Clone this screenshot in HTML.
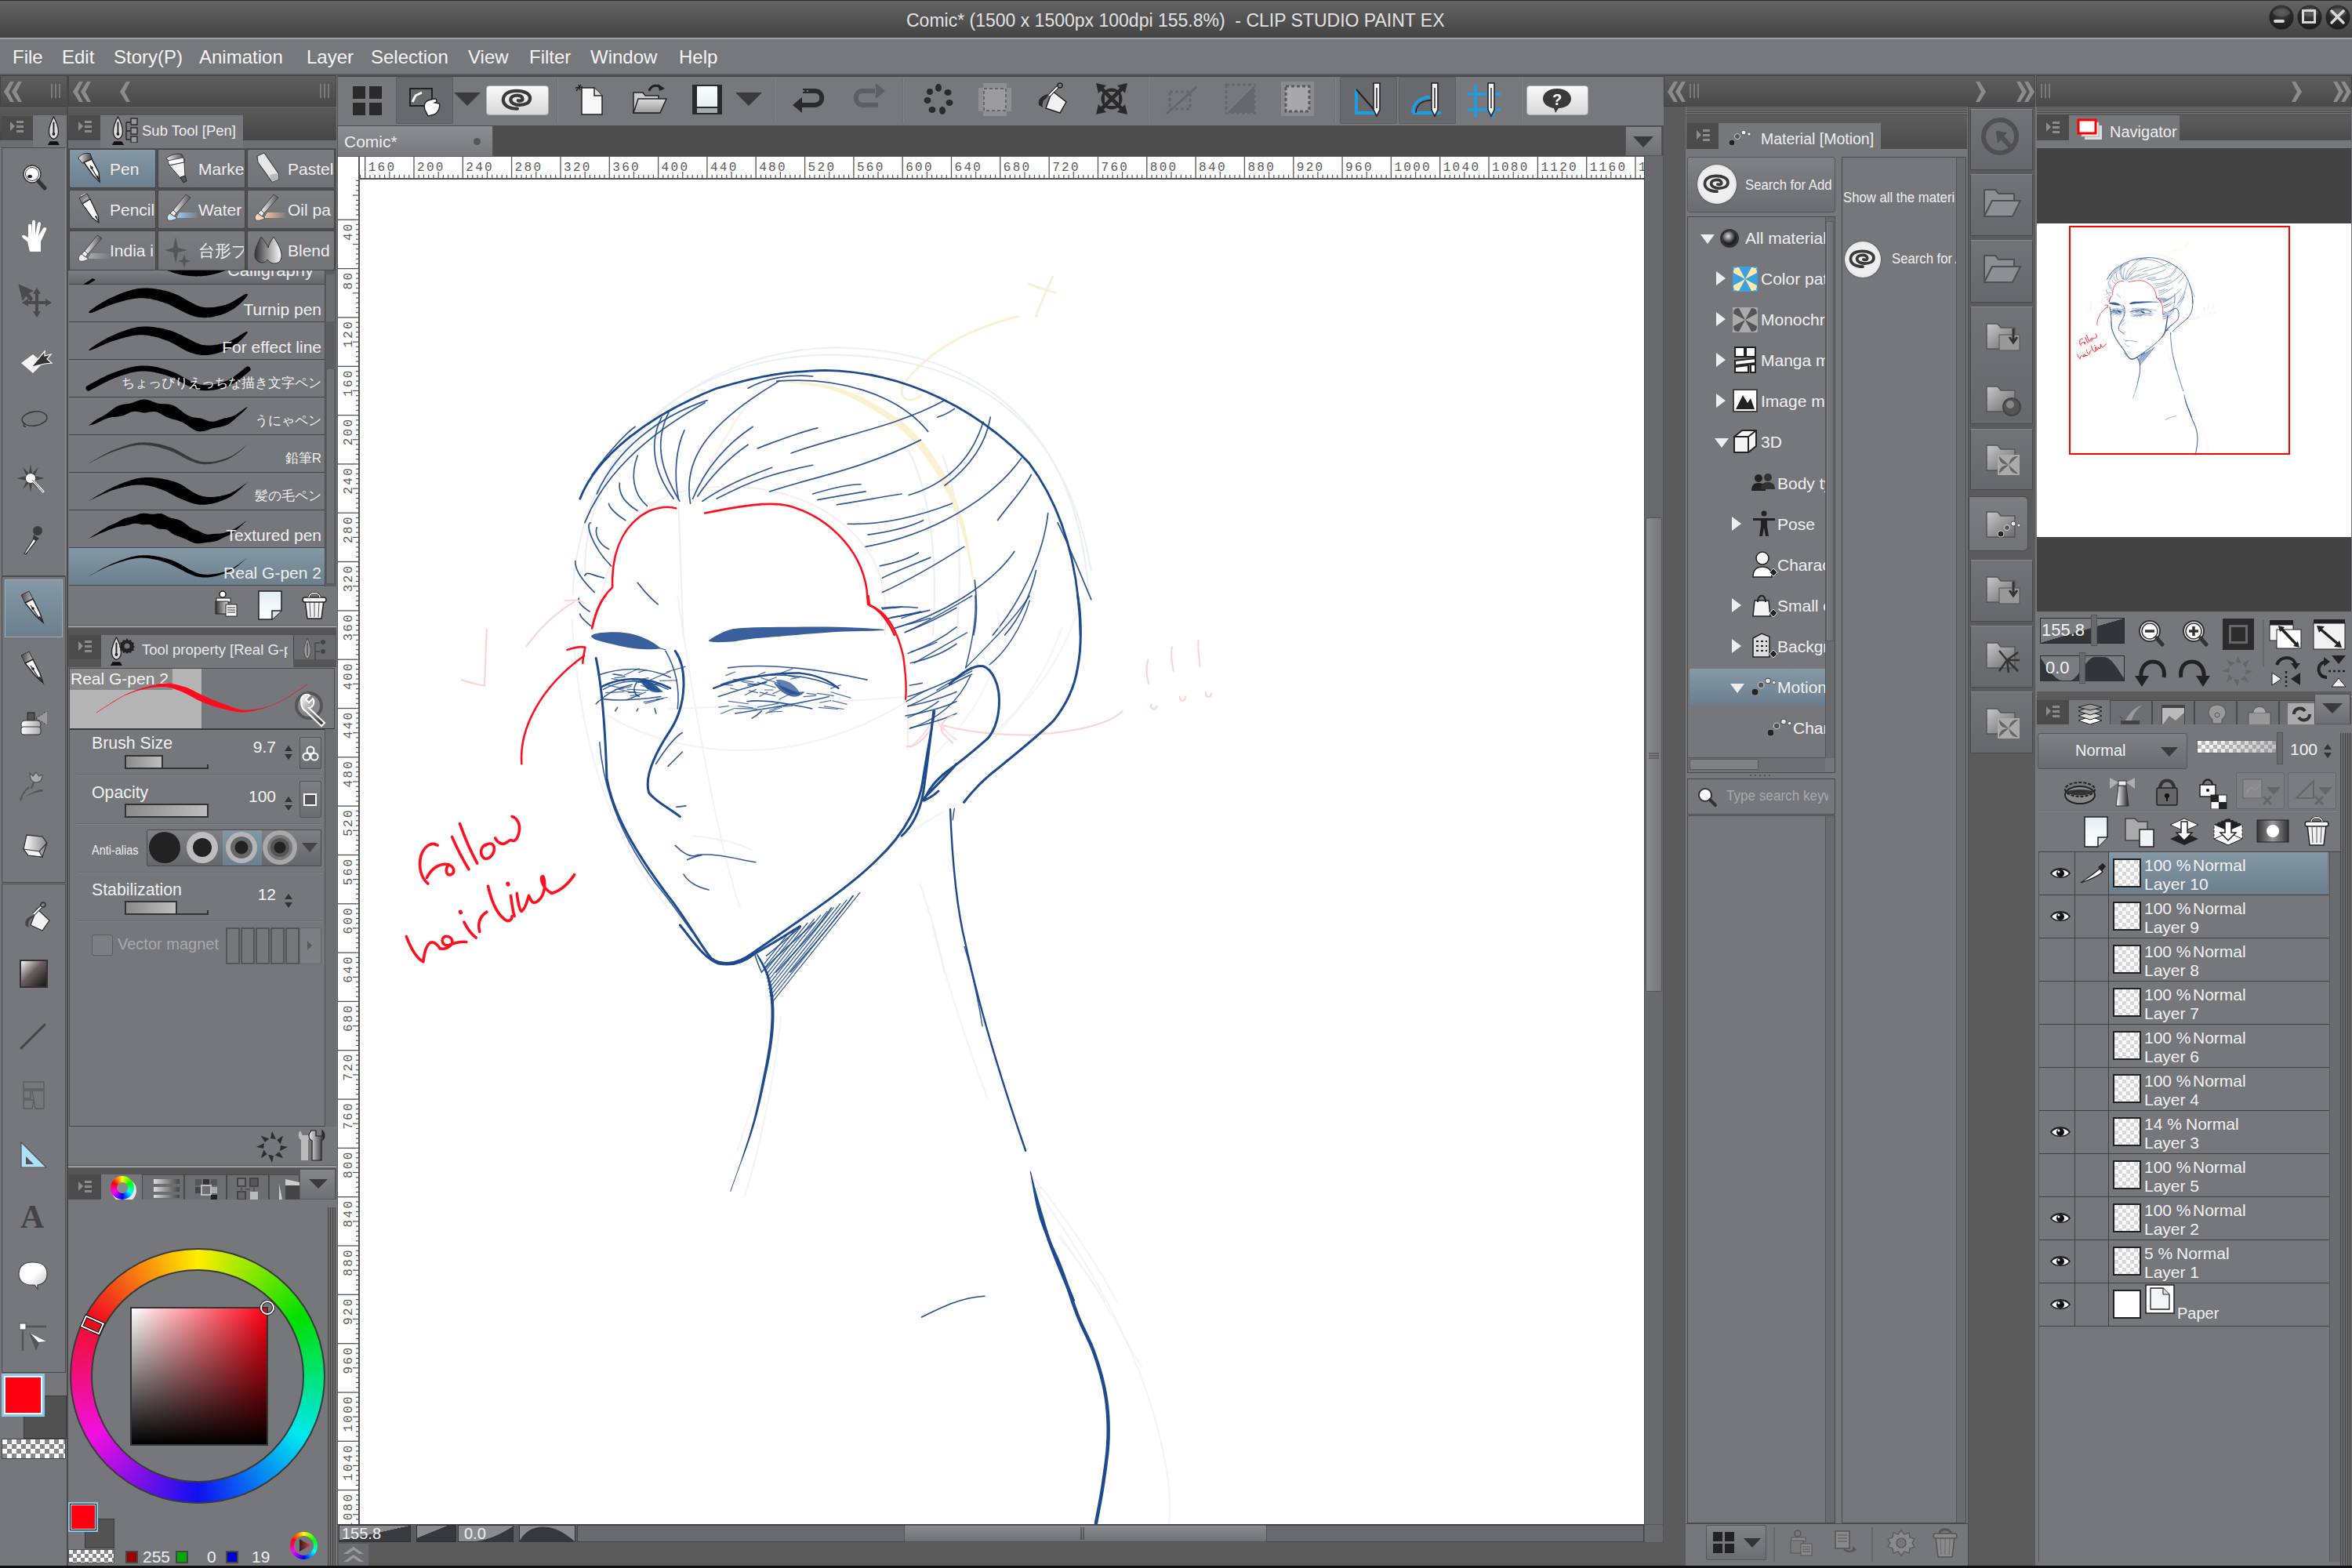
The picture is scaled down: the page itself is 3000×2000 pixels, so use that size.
<!DOCTYPE html>
<html><head><meta charset="utf-8">
<style>
*{box-sizing:border-box;margin:0;padding:0}
html,body{width:3000px;height:2000px;overflow:hidden;background:#76777b;font-family:"Liberation Sans",sans-serif;color:#f2f2f2}
.a{position:absolute}
.t{position:absolute;white-space:nowrap;line-height:1}
</style></head><body>

<div class="a" style="left:0px;top:0px;width:3000px;height:48px;background:linear-gradient(#646464,#434343);border-top:1px solid #2e2e2e"></div>
<div class="t" style="left:1156px;top:14.5px;font-size:23px;color:#e2e2e2;letter-spacing:0px">Comic* (1500 x 1500px 100dpi 155.8%)&nbsp; - CLIP STUDIO PAINT EX</div>
<svg class="a" style="left:2894px;top:6px;" width="32" height="32" viewBox="0 0 32 32"><defs><radialGradient id="gmin" cx="50%" cy="30%" r="70%"><stop offset="0" stop-color="#555"/><stop offset="0.5" stop-color="#2a2a2a"/><stop offset="1" stop-color="#1c1c1c"/></radialGradient></defs><circle cx="16" cy="16" r="15.5" fill="url(#gmin)"/><ellipse cx="16" cy="10" rx="11" ry="5" fill="#666" opacity="0.55"/><rect x="6" y="19" width="14" height="4" rx="2" fill="#d8d8d8"/></svg>
<svg class="a" style="left:2930px;top:6px;" width="32" height="32" viewBox="0 0 32 32"><defs><radialGradient id="gmax" cx="50%" cy="30%" r="70%"><stop offset="0" stop-color="#555"/><stop offset="0.5" stop-color="#2a2a2a"/><stop offset="1" stop-color="#1c1c1c"/></radialGradient></defs><circle cx="16" cy="16" r="15.5" fill="url(#gmax)"/><ellipse cx="16" cy="10" rx="11" ry="5" fill="#666" opacity="0.55"/><rect x="7.5" y="7.5" width="15" height="15" fill="none" stroke="#d8d8d8" stroke-width="3"/></svg>
<svg class="a" style="left:2966px;top:6px;" width="32" height="32" viewBox="0 0 32 32"><defs><radialGradient id="gclose" cx="50%" cy="30%" r="70%"><stop offset="0" stop-color="#555"/><stop offset="0.5" stop-color="#2a2a2a"/><stop offset="1" stop-color="#1c1c1c"/></radialGradient></defs><circle cx="16" cy="16" r="15.5" fill="url(#gclose)"/><ellipse cx="16" cy="10" rx="11" ry="5" fill="#666" opacity="0.55"/><path d="M8 8L23 23M23 8L8 23" stroke="#d8d8d8" stroke-width="3.5" stroke-linecap="round"/></svg>
<div class="a" style="left:0px;top:48px;width:3000px;height:48px;background:#77787c;border-top:2px solid #9c9da0;border-bottom:2px solid #5b5b5d"></div>
<div class="t" style="left:16px;top:61px;font-size:24px;color:#f4f4f4;">File</div>
<div class="t" style="left:79px;top:61px;font-size:24px;color:#f4f4f4;">Edit</div>
<div class="t" style="left:145px;top:61px;font-size:24px;color:#f4f4f4;">Story(P)</div>
<div class="t" style="left:254px;top:61px;font-size:24px;color:#f4f4f4;">Animation</div>
<div class="t" style="left:391px;top:61px;font-size:24px;color:#f4f4f4;">Layer</div>
<div class="t" style="left:473px;top:61px;font-size:24px;color:#f4f4f4;">Selection</div>
<div class="t" style="left:597px;top:61px;font-size:24px;color:#f4f4f4;">View</div>
<div class="t" style="left:675px;top:61px;font-size:24px;color:#f4f4f4;">Filter</div>
<div class="t" style="left:753px;top:61px;font-size:24px;color:#f4f4f4;">Window</div>
<div class="t" style="left:866px;top:61px;font-size:24px;color:#f4f4f4;">Help</div>
<div class="a" style="left:0px;top:96px;width:3000px;height:1904px;background:#76777b"></div>
<div class="a" style="left:0px;top:96px;width:86px;height:40px;background:linear-gradient(#5d5d5d,#4a4a4a);border-top:1px solid #3e3e3e;border-bottom:1px solid #3f3f3f;border-left:1px solid #444;border-right:1px solid #444"></div>
<svg class="a" style="left:4px;top:103px;" width="24" height="28" viewBox="0 0 24 28"><path d="M9 1L1 14L9 27H14L7 14L14 1Z M19 1L11 14L19 27H24L17 14L24 1Z" fill="#8c8c8c"/></svg>
<svg class="a" style="left:64px;top:105px;" width="16" height="22" viewBox="0 0 16 22"><path d="M2 2V20M7 2V20M12 2V20" stroke="#8a8a8a" stroke-width="1.4"/></svg>
<div class="a" style="left:0px;top:136px;width:86px;height:43px;background:linear-gradient(#5a5a5a,#464646)"></div>
<div class="a" style="left:0px;top:179px;width:86px;height:10px;background:#6d6e71"></div>
<div class="a" style="left:2px;top:147px;width:40px;height:32px;background:#4b4b4b;border-top:1px solid #5a5a5a"></div>
<svg class="a" style="left:12px;top:152px;" width="20" height="20" viewBox="0 0 20 20"><path d="M1 3L7 9L1 15Z" fill="#8c8c8c"/><rect x="9" y="2" width="9" height="3" fill="#8c8c8c"/><rect x="9" y="8" width="9" height="3" fill="#8c8c8c"/><rect x="9" y="14" width="9" height="3" fill="#8c8c8c"/></svg>
<div class="a" style="left:42px;top:147px;width:44px;height:41px;background:#76777b"></div>
<svg class="a" style="left:58px;top:148px;" width="20" height="38" viewBox="0 0 20 38"><g transform="scale(0.95)"><path d="M11 1C6 10 4 18 5 24C6 28 8 30 11 31C14 30 16 28 17 24C18 18 16 10 11 1Z" fill="#ddd" stroke="#222" stroke-width="1.4"/><path d="M11 8V26" stroke="#222" stroke-width="2"/><circle cx="11" cy="24" r="2" fill="#222"/><path d="M6 34H16L19 39H3Z" fill="#111"/></g></svg>
<div class="a" style="left:2px;top:188px;width:82px;height:547px;background:#76777b;border:1px solid #4a4a4a;border-right-color:#8a8a8c"></div>
<div class="a" style="left:2px;top:735px;width:82px;height:391px;background:#76777b;border:1px solid #4a4a4a"></div>
<div class="a" style="left:2px;top:1127px;width:82px;height:624px;background:#76777b;border:1px solid #4a4a4a"></div>
<div class="a" style="left:85px;top:96px;width:2px;height:1904px;background:#4a4a4a"></div>
<div class="a" style="left:6px;top:739px;width:74px;height:74px;background:linear-gradient(#8598a5,#6b7f8e);border:1px solid #9aabb6"></div>
<svg class="a" style="left:13px;top:195px;" width="60" height="60" viewBox="0 0 60 60"><circle cx="28" cy="27" r="11" fill="#fff" stroke="#333" stroke-width="1.5"/><circle cx="28" cy="27" r="8.5" fill="none" stroke="#333" stroke-width="1"/><ellipse cx="25" cy="30" rx="3" ry="2" fill="#222"/><path d="M36 36L44 45" stroke="#333" stroke-width="5" stroke-linecap="round"/></svg>
<svg class="a" style="left:15px;top:272px;" width="60" height="60" viewBox="0 0 60 60"><path d="M20 36C16 33 13 31 13 29C14 27 17 28 21 31L21 16C21 13 25 13 25 16L25 27L26 11C26 8 30 8 30 11L30 27L33 13C34 10 38 11 37 14L34 29L40 19C42 17 45 18 44 21L37 36L37 49L23 49Z" fill="#fff"/></svg>
<svg class="a" style="left:15px;top:355px;" width="60" height="60" viewBox="0 0 60 60"><path d="M9 8L27 16L21 19L27 26L24 29L18 22L14 28Z" fill="#4a4a4a" stroke="#4a4a4a" stroke-width="1"/><path d="M32 12L37 20H34V29H43V26L51 31L43 36V33H34V42H37L32 50L27 42H30V33H21V36L13 31L21 26V29H30V20H27Z" fill="#4a4a4a"/></svg>
<svg class="a" style="left:15px;top:430px;" width="60" height="60" viewBox="0 0 60 60"><path d="M12 33L27 22L40 33L27 46Z" fill="#f4f4f4"/><path d="M25 38L42 18L42 24L50 22L45 28L51 33L42 34Z" fill="#333" stroke="#fff" stroke-width="1.2"/></svg>
<svg class="a" style="left:13px;top:505px;" width="60" height="60" viewBox="0 0 60 60"><ellipse cx="31" cy="29" rx="16" ry="9" fill="none" stroke="#3a3a3a" stroke-width="1.6" transform="rotate(-8 31 29)"/><path d="M19 35C16 37 17 40 20 39" fill="none" stroke="#3a3a3a" stroke-width="1.6"/></svg>
<svg class="a" style="left:9px;top:580px;" width="60" height="60" viewBox="0 0 60 60"><path d="M30 12L32 24L40 16L35 27L48 30L35 33L40 44L32 36L30 48L28 36L20 44L25 33L12 30L25 27L20 16L28 24Z" fill="#444"/><circle cx="30" cy="30" r="6" fill="#fff"/><path d="M32 32L46 47" stroke="#fff" stroke-width="3" stroke-linecap="round"/><path d="M32 32L46 47" stroke="#555" stroke-width="0.8"/></svg>
<svg class="a" style="left:13px;top:660px;" width="60" height="60" viewBox="0 0 60 60"><circle cx="35" cy="17" r="6" fill="#3c3c3c"/><path d="M30 22L37 27L33 30L29 27Z" fill="#333"/><path d="M30 27L33 30L20 47L18 46Z" fill="#fff" stroke="#333" stroke-width="1.3"/></svg>
<svg class="a" style="left:13px;top:745px;" width="60" height="60" viewBox="0 0 60 60"><defs><linearGradient id="pg" x1="0" x2="1"><stop offset="0" stop-color="#444"/><stop offset="1" stop-color="#bbb"/></linearGradient></defs><path d="M14 14L24 9L29 19L19 24Z" fill="url(#pg)" stroke="#333" stroke-width="1"/><path d="M19 24L29 19L38 37L42 49L33 41Z" fill="#f6f6f6" stroke="#222" stroke-width="1.4"/><path d="M26 27L37 44" stroke="#222" stroke-width="1.2"/><circle cx="29" cy="31" r="1.8" fill="#222"/><path d="M36 42L42 49L38 41Z" fill="#111"/></svg>
<svg class="a" style="left:13px;top:822px;" width="60" height="60" viewBox="0 0 60 60"><defs><linearGradient id="pg" x1="0" x2="1"><stop offset="0" stop-color="#444"/><stop offset="1" stop-color="#bbb"/></linearGradient></defs><path d="M14 14L24 9L29 19L19 24Z" fill="url(#pg)" stroke="#333" stroke-width="1"/><path d="M19 24L29 19L38 37L42 49L33 41Z" fill="#f6f6f6" stroke="#222" stroke-width="1.4"/><path d="M26 27L37 44" stroke="#222" stroke-width="1.2"/><circle cx="29" cy="31" r="1.8" fill="#222"/><path d="M36 42L42 49L38 41Z" fill="#111"/></svg>
<svg class="a" style="left:13px;top:899px;" width="60" height="60" viewBox="0 0 60 60"><defs><linearGradient id="ab" x1="0" x2="1"><stop offset="0" stop-color="#fff"/><stop offset="1" stop-color="#aaa"/></linearGradient></defs><rect x="22" y="10" width="9" height="10" fill="#555" stroke="#222"/><rect x="14" y="20" width="25" height="10" rx="5" fill="url(#ab)" stroke="#333"/><rect x="14" y="28" width="25" height="10" rx="3" fill="url(#ab)" stroke="#333"/><path d="M33 17L47 8L47 26Z" fill="#aaa" opacity="0.7"/><path d="M33 17L47 8M33 17L47 26" stroke="#333" stroke-dasharray="2 2" stroke-width="1"/></svg>
<svg class="a" style="left:12px;top:976px;" width="60" height="60" viewBox="0 0 60 60"><path d="M12 47C18 41 26 36 40 34C44 33 44 31 40 31C30 33 20 40 12 47Z" fill="#555"/><path d="M14 45C16 38 20 32 25 28" stroke="#555" stroke-width="2" fill="none"/><path d="M28 30C30 24 32 20 33 17" stroke="#555" stroke-width="2" fill="none"/><path d="M26 10L30 14L34 9L38 14L42 12C42 19 39 22 34 22C28 22 26 17 26 10Z" fill="#aaa" stroke="#555" stroke-width="1.2"/></svg>
<svg class="a" style="left:14px;top:1053px;" width="60" height="60" viewBox="0 0 60 60"><defs><linearGradient id="er" x1="0" x2="1"><stop offset="0" stop-color="#fff"/><stop offset="1" stop-color="#888"/></linearGradient></defs><path d="M20 12L40 14L46 22L40 40L22 38L16 30Z" fill="url(#er)" stroke="#333" stroke-width="1.3"/><path d="M16 30L36 33L40 40L22 38Z" fill="#f2f2f2" stroke="#333" stroke-width="1.2"/><path d="M36 33L46 22" stroke="#333" stroke-width="1.2"/></svg>
<svg class="a" style="left:14px;top:1138px;" width="60" height="60" viewBox="0 0 60 60"><path d="M19 43C16 36 22 31 30 29L27 33C23 35 21 39 23 45Z" fill="#444"/><path d="M33 21L49 36L40 49L25 42L33 21Z" fill="#f2f2f2" stroke="#333" stroke-width="1.3"/><path d="M29 28L40 17" stroke="#333" stroke-width="4"/><path d="M29 28L40 17" stroke="#fff" stroke-width="2"/><circle cx="41" cy="16" r="3" fill="none" stroke="#333" stroke-width="1.5"/></svg>
<svg class="a" style="left:13px;top:1212px;" width="60" height="60" viewBox="0 0 60 60"><defs><linearGradient id="gr" x1="0" y1="0" x2="1" y2="1"><stop offset="0" stop-color="#fff"/><stop offset="0.45" stop-color="#6a5f5f"/><stop offset="1" stop-color="#111"/></linearGradient></defs><rect x="13" y="13" width="34" height="34" fill="url(#gr)" stroke="#333" stroke-width="2"/></svg>
<svg class="a" style="left:13px;top:1291px;" width="60" height="60" viewBox="0 0 60 60"><path d="M14 46L44 16" stroke="#444" stroke-width="3" stroke-linecap="round"/></svg>
<svg class="a" style="left:13px;top:1367px;" width="60" height="60" viewBox="0 0 60 60"><g fill="none" stroke="#5c5c5c" stroke-width="1.4"><rect x="17" y="13" width="26" height="9"/><rect x="17" y="24" width="9" height="10"/><path d="M28 24H43V47H32Z"/><path d="M17 36H30L28 47H17Z"/></g></svg>
<svg class="a" style="left:13px;top:1444px;" width="60" height="60" viewBox="0 0 60 60"><path d="M14 13L46 45H14Z" fill="#aee0f8" stroke="#555" stroke-width="1.2"/><path d="M20 31L30 41H20Z" fill="#555"/></svg>
<div class="t" style="left:26px;top:1531px;font-size:42px;color:#444;font-family:'Liberation Serif',serif;font-weight:bold">A</div>
<svg class="a" style="left:12px;top:1597px;" width="60" height="60" viewBox="0 0 60 60"><defs><linearGradient id="bl" x1="0" y1="0" x2="1" y2="1"><stop offset="0.5" stop-color="#fff"/><stop offset="1" stop-color="#bbb"/></linearGradient></defs><path d="M30 13C40 13 48 16 48 28C48 38 42 41 36 42L36 47L32 42C20 43 12 38 12 28C12 17 20 13 30 13Z" fill="url(#bl)" stroke="#444" stroke-width="1.2"/></svg>
<svg class="a" style="left:13px;top:1676px;" width="60" height="60" viewBox="0 0 60 60"><path d="M16 16V47" stroke="#555" stroke-width="2.5"/><path d="M16 16H46" stroke="#555" stroke-width="2.5"/><rect x="12" y="12" width="8" height="8" fill="#fff" stroke="#555"/><path d="M24 24L47 35L37 37L33 47Z" fill="#555"/><path d="M26 25L46 35L36 36Z" fill="#fff"/></svg>
<div class="a" style="left:30px;top:1780px;width:55px;height:55px;background:#535253;border:1px solid #3a3a3a"></div>
<div class="a" style="left:2px;top:1752px;width:55px;height:55px;background:#8ec8e8"></div>
<div class="a" style="left:5px;top:1755px;width:49px;height:49px;background:#fff"></div>
<div class="a" style="left:7px;top:1757px;width:45px;height:45px;background:#ff0012"></div>
<div class="a" style="left:2px;top:1835px;width:82px;height:26px;background-color:#fff;background-image:linear-gradient(45deg,#888 25%,transparent 25%,transparent 75%,#888 75%),linear-gradient(45deg,#888 25%,transparent 25%,transparent 75%,#888 75%);background-size:12px 12px;background-position:0 0,6px 6px;border:1px solid #444"></div>
<div class="a" style="left:87px;top:96px;width:342px;height:40px;background:linear-gradient(#5d5d5d,#4a4a4a);border-top:1px solid #3e3e3e;border-bottom:1px solid #3f3f3f;border-left:1px solid #444;border-right:1px solid #444"></div>
<svg class="a" style="left:92px;top:103px;" width="24" height="28" viewBox="0 0 24 28"><path d="M9 1L1 14L9 27H14L7 14L14 1Z M19 1L11 14L19 27H24L17 14L24 1Z" fill="#8c8c8c"/></svg>
<svg class="a" style="left:152px;top:103px;" width="14" height="28" viewBox="0 0 14 28"><path d="M9 1L1 14L9 27H14L7 14L14 1Z" fill="#8c8c8c"/></svg>
<svg class="a" style="left:407px;top:105px;" width="16" height="22" viewBox="0 0 16 22"><path d="M2 2V20M7 2V20M12 2V20" stroke="#8a8a8a" stroke-width="1.4"/></svg>
<div class="a" style="left:87px;top:136px;width:342px;height:43px;background:linear-gradient(#5a5a5a,#464646);border-top:1px solid #6a6a6a"></div>
<div class="a" style="left:87px;top:179px;width:342px;height:10px;background:#6d6e71"></div>
<div class="a" style="left:88px;top:147px;width:40px;height:32px;background:#4b4b4b"></div>
<svg class="a" style="left:99px;top:152px;" width="20" height="20" viewBox="0 0 20 20"><path d="M1 3L7 9L1 15Z" fill="#8c8c8c"/><rect x="9" y="2" width="9" height="3" fill="#8c8c8c"/><rect x="9" y="8" width="9" height="3" fill="#8c8c8c"/><rect x="9" y="14" width="9" height="3" fill="#8c8c8c"/></svg>
<div class="a" style="left:128px;top:147px;width:182px;height:42px;background:#76777b"></div>
<svg class="a" style="left:140px;top:148px;" width="20" height="38" viewBox="0 0 20 38"><g transform="scale(0.95)"><path d="M11 1C6 10 4 18 5 24C6 28 8 30 11 31C14 30 16 28 17 24C18 18 16 10 11 1Z" fill="#ddd" stroke="#222" stroke-width="1.4"/><path d="M11 8V26" stroke="#222" stroke-width="2"/><circle cx="11" cy="24" r="2" fill="#222"/><path d="M6 34H16L19 39H3Z" fill="#111"/></g></svg>
<svg class="a" style="left:158px;top:148px;" width="20" height="34" viewBox="0 0 20 34"><g fill="none" stroke="#222" stroke-width="1.3"><path d="M3 8V30M3 8H8M3 19H8M3 30H8"/><rect x="9" y="3" width="8" height="8" fill="#999"/><rect x="9" y="15" width="8" height="8" fill="#999"/><rect x="9" y="26" width="8" height="8" fill="#999"/></g></svg>
<div class="t" style="left:181px;top:158px;font-size:18.5px;color:#eeeeee;">Sub Tool [Pen]</div>
<div class="a" style="left:87px;top:189px;width:342px;height:157px;background:#505050"></div>
<div class="a" style="left:88px;top:190px;width:111px;height:50px;background:linear-gradient(#8598a5,#6b7f8e);border:1px solid #454545;border-radius:2px"></div>
<div class="a" style="left:140px;top:205px;width:57px;height:30px;overflow:hidden;white-space:nowrap;font-size:21px;line-height:1;color:#eeeeee">Pen</div>
<div class="a" style="left:201px;top:190px;width:112px;height:50px;background:linear-gradient(#7b7c80,#727377);border:1px solid #454545;border-radius:2px"></div>
<div class="a" style="left:253px;top:205px;width:58px;height:30px;overflow:hidden;white-space:nowrap;font-size:21px;line-height:1;color:#eeeeee">Marke</div>
<div class="a" style="left:315px;top:190px;width:112px;height:50px;background:linear-gradient(#7b7c80,#727377);border:1px solid #454545;border-radius:2px"></div>
<div class="a" style="left:367px;top:205px;width:58px;height:30px;overflow:hidden;white-space:nowrap;font-size:21px;line-height:1;color:#eeeeee">Pastel</div>
<div class="a" style="left:88px;top:242px;width:111px;height:50px;background:linear-gradient(#7b7c80,#727377);border:1px solid #454545;border-radius:2px"></div>
<div class="a" style="left:140px;top:257px;width:57px;height:30px;overflow:hidden;white-space:nowrap;font-size:21px;line-height:1;color:#eeeeee">Pencil</div>
<div class="a" style="left:201px;top:242px;width:112px;height:50px;background:linear-gradient(#7b7c80,#727377);border:1px solid #454545;border-radius:2px"></div>
<div class="a" style="left:253px;top:257px;width:58px;height:30px;overflow:hidden;white-space:nowrap;font-size:21px;line-height:1;color:#eeeeee">Water</div>
<div class="a" style="left:315px;top:242px;width:112px;height:50px;background:linear-gradient(#7b7c80,#727377);border:1px solid #454545;border-radius:2px"></div>
<div class="a" style="left:367px;top:257px;width:58px;height:30px;overflow:hidden;white-space:nowrap;font-size:21px;line-height:1;color:#eeeeee">Oil pa</div>
<div class="a" style="left:88px;top:294px;width:111px;height:51px;background:linear-gradient(#7b7c80,#727377);border:1px solid #454545;border-radius:2px"></div>
<div class="a" style="left:140px;top:309px;width:57px;height:30px;overflow:hidden;white-space:nowrap;font-size:21px;line-height:1;color:#eeeeee">India i</div>
<div class="a" style="left:201px;top:294px;width:112px;height:51px;background:linear-gradient(#7b7c80,#727377);border:1px solid #454545;border-radius:2px"></div>
<div class="a" style="left:253px;top:309px;width:58px;height:30px;overflow:hidden;white-space:nowrap;font-size:21px;line-height:1;color:#eeeeee">台形ブ</div>
<div class="a" style="left:315px;top:294px;width:112px;height:51px;background:linear-gradient(#7b7c80,#727377);border:1px solid #454545;border-radius:2px"></div>
<div class="a" style="left:367px;top:309px;width:58px;height:30px;overflow:hidden;white-space:nowrap;font-size:21px;line-height:1;color:#eeeeee">Blend</div>
<svg class="a" style="left:98px;top:194px;" width="44" height="44" viewBox="0 0 44 44"><defs><linearGradient id="sp" x1="0" x2="1"><stop offset="0" stop-color="#eee"/><stop offset="1" stop-color="#333"/></linearGradient></defs><path d="M2 8C4 3 12 0 17 2L20 10C16 13 10 14 7 14Z" fill="url(#sp)" stroke="#222" stroke-width="1"/><path d="M9 13L19 9L28 26L29 38L21 30Z" fill="#fafafa" stroke="#222" stroke-width="1.4"/><path d="M17 17L27 34" stroke="#222" stroke-width="1.2"/><circle cx="19" cy="20" r="1.8" fill="#222"/><path d="M25 31L29 38L27 30Z" fill="#111"/></svg>
<svg class="a" style="left:210px;top:193px;" width="44" height="44" viewBox="0 0 44 44"><defs><linearGradient id="mk" x1="0" x2="1"><stop offset="0" stop-color="#eee"/><stop offset="1" stop-color="#444"/></linearGradient></defs><path d="M2 9C8 4 16 2 22 4L26 12L12 18Z" fill="url(#mk)" stroke="#333"/><path d="M4 12L24 8L25 14L6 18Z" fill="#fff" stroke="#333" stroke-width="0.8"/><path d="M6 18L25 14L26 32L20 34Z" fill="#f4f4f4" stroke="#333"/><path d="M20 33L26 31L28 38L24 40Z" fill="#555" stroke="#222"/></svg>
<svg class="a" style="left:325px;top:193px;" width="44" height="44" viewBox="0 0 44 44"><path d="M3 6L12 2L30 28L30 36L22 39L4 14Z" fill="#e6e6e6" stroke="#444" stroke-width="1.2"/><path d="M19 30L30 28L30 36L22 39Z" fill="#b8b8b8"/></svg>
<svg class="a" style="left:98px;top:245px;" width="44" height="44" viewBox="0 0 44 44"><path d="M3 8L13 2L17 9L7 15Z" fill="#888" stroke="#333"/><path d="M5 5L11 2M8 11L14 7" stroke="#ccc"/><path d="M7 15L17 9L27 30L28 39L20 33Z" fill="#fff" stroke="#222" stroke-width="1.2"/><path d="M23 31L28 39L25 30Z" fill="#111"/></svg>
<svg class="a" style="left:211px;top:246px;" width="44" height="44" viewBox="0 0 44 44"><defs><linearGradient id="bh211246" x1="0" x2="1"><stop offset="0" stop-color="#eee"/><stop offset="1" stop-color="#555"/></linearGradient><linearGradient id="bs211246" x1="0" x2="1"><stop offset="0" stop-color="#9ccaf0"/><stop offset="1" stop-color="#9ccaf0" stop-opacity="0"/></linearGradient></defs><path d="M14 32L44 32L40 25L18 25Z" fill="url(#bs211246)"/><path d="M26 2L32 6L14 26L10 22Z" fill="url(#bh211246)" stroke="#333" stroke-width="0.8"/><path d="M10 22L14 26L11 30L6 26Z" fill="#eee" stroke="#333" stroke-width="0.8"/><path d="M6 26C2 28 1 33 4 35C8 36 12 34 15 32C12 31 11 29 11 30Z" fill="#cde6fa" stroke="#444" stroke-width="0.8"/></svg>
<svg class="a" style="left:323px;top:246px;" width="44" height="44" viewBox="0 0 44 44"><defs><linearGradient id="bh323246" x1="0" x2="1"><stop offset="0" stop-color="#eee"/><stop offset="1" stop-color="#555"/></linearGradient><linearGradient id="bs323246" x1="0" x2="1"><stop offset="0" stop-color="#f5c49e"/><stop offset="1" stop-color="#f5c49e" stop-opacity="0"/></linearGradient></defs><path d="M14 32L44 32L40 25L18 25Z" fill="url(#bs323246)"/><path d="M26 2L32 6L14 26L10 22Z" fill="url(#bh323246)" stroke="#333" stroke-width="0.8"/><path d="M10 22L14 26L11 30L6 26Z" fill="#eee" stroke="#333" stroke-width="0.8"/><path d="M6 26C2 28 1 33 4 35C8 36 12 34 15 32C12 31 11 29 11 30Z" fill="#f8d8c0" stroke="#444" stroke-width="0.8"/></svg>
<svg class="a" style="left:98px;top:298px;" width="44" height="44" viewBox="0 0 44 44"><defs><linearGradient id="bh98298" x1="0" x2="1"><stop offset="0" stop-color="#eee"/><stop offset="1" stop-color="#555"/></linearGradient><linearGradient id="bs98298" x1="0" x2="1"><stop offset="0" stop-color="#aaa"/><stop offset="1" stop-color="#aaa" stop-opacity="0"/></linearGradient></defs><path d="M14 32L44 32L40 25L18 25Z" fill="url(#bs98298)"/><path d="M26 2L32 6L14 26L10 22Z" fill="url(#bh98298)" stroke="#333" stroke-width="0.8"/><path d="M10 22L14 26L11 30L6 26Z" fill="#eee" stroke="#333" stroke-width="0.8"/><path d="M6 26C2 28 1 33 4 35C8 36 12 34 15 32C12 31 11 29 11 30Z" fill="#eee" stroke="#444" stroke-width="0.8"/></svg>
<svg class="a" style="left:210px;top:298px;" width="44" height="44" viewBox="0 0 44 44"><path d="M14 4L17 18L29 21L17 24L14 38L11 24L0 21L11 18Z" fill="#555"/><path d="M25 26L27 33L33 35L27 37L25 44L23 37L17 35L23 33Z" fill="#555"/></svg>
<svg class="a" style="left:323px;top:298px;" width="44" height="44" viewBox="0 0 44 44"><defs><linearGradient id="bd" x1="0" x2="1"><stop offset="0" stop-color="#333"/><stop offset="1" stop-color="#fff"/></linearGradient></defs><path d="M10 4C5 14 2 20 2 27C2 33 6 37 11 37C15 37 17 35 18 33C20 36 23 38 27 38C33 38 36 34 36 28C36 20 31 12 26 4C22 10 20 14 19 18C17 13 14 8 10 4Z" fill="url(#bd)" stroke="#333" stroke-width="1"/></svg>
<div class="a" style="left:87px;top:345px;width:342px;height:403px;background:#76777b"></div>
<div class="a" style="left:88px;top:345px;width:327px;height:18px;background:#76777b;border-bottom:1px solid #464646"></div>
<div class="a" style="left:88px;top:363px;width:327px;height:48px;background:#76777b;border-bottom:1px solid #464646"></div>
<div class="a" style="left:88px;top:411px;width:327px;height:48px;background:#76777b;border-bottom:1px solid #464646"></div>
<div class="a" style="left:88px;top:459px;width:327px;height:48px;background:#76777b;border-bottom:1px solid #464646"></div>
<div class="a" style="left:88px;top:507px;width:327px;height:48px;background:#76777b;border-bottom:1px solid #464646"></div>
<div class="a" style="left:88px;top:555px;width:327px;height:48px;background:#76777b;border-bottom:1px solid #464646"></div>
<div class="a" style="left:88px;top:603px;width:327px;height:48px;background:#76777b;border-bottom:1px solid #464646"></div>
<div class="a" style="left:88px;top:651px;width:327px;height:48px;background:#76777b;border-bottom:1px solid #464646"></div>
<div class="a" style="left:88px;top:699px;width:327px;height:48px;background:linear-gradient(#8598a5,#6b7f8e);border-bottom:1px solid #464646"></div>
<div class="a" style="left:88px;top:345px;width:327px;height:18px;background:linear-gradient(#7d7e82,#66676a);border-bottom:1px solid #464646"></div>
<div class="a" style="left:414px;top:345px;width:15px;height:403px;background:#5d5e61;border-left:1px solid #4a4a4a"></div>
<div class="a" style="left:416px;top:350px;width:11px;height:60px;background:#6c6d70"></div>
<div class="a" style="left:416px;top:470px;width:11px;height:275px;background:#727377;border:1px solid #5a5a5a"></div>
<svg class="a" style="left:88px;top:345px;" width="327" height="18" viewBox="0 0 327 18"><path d="M18 18L30 10L34 12L22 19Z" fill="#000"/><path d="M125 0C150 10 175 10 200 0Z" fill="#000"/></svg>
<svg class="a" style="left:88px;top:363px;" width="327" height="48" viewBox="0 0 327 48"><g transform="translate(-88,-363)"><path d="M113.0 399.0 L115.1 399.3 L117.3 398.8 L119.7 397.9 L122.4 396.8 L125.3 395.6 L128.3 394.3 L131.4 393.0 L134.5 391.6 L137.7 390.3 L140.8 389.1 L143.7 388.0 L146.6 387.1 L149.4 386.3 L152.3 385.4 L155.1 384.6 L158.0 383.8 L160.9 383.0 L163.8 382.3 L166.6 381.7 L169.4 381.2 L172.2 380.8 L175.0 380.5 L177.6 380.3 L180.3 380.2 L182.9 380.3 L185.5 380.5 L188.1 380.7 L190.7 381.1 L193.3 381.6 L195.9 382.2 L198.6 382.8 L201.3 383.5 L204.0 384.4 L206.8 385.3 L209.7 386.2 L212.6 387.2 L215.3 388.3 L218.2 389.7 L221.2 391.3 L224.4 393.0 L227.8 394.7 L231.3 396.5 L234.9 398.2 L238.6 399.9 L242.3 401.5 L246.1 402.9 L249.9 404.0 L253.7 404.8 L257.4 405.1 L261.0 405.2 L264.4 405.1 L267.9 404.8 L271.2 404.3 L274.4 403.6 L277.5 402.8 L280.6 401.9 L283.5 400.9 L286.4 399.9 L289.1 398.7 L291.8 397.5 L294.6 396.1 L297.3 394.4 L300.0 392.6 L302.6 390.6 L305.0 388.5 L307.3 386.4 L309.4 384.3 L311.4 382.3 L313.1 380.4 L314.5 378.7 L315.6 377.0 L316.0 375.0 L316.0 375.0 L313.9 374.8 L312.0 375.6 L310.0 376.7 L307.8 378.0 L305.5 379.4 L303.1 381.0 L300.6 382.5 L298.0 384.0 L295.5 385.4 L293.0 386.7 L290.6 387.7 L288.2 388.5 L285.7 389.2 L283.1 389.9 L280.5 390.5 L277.8 391.0 L275.1 391.5 L272.3 391.9 L269.6 392.1 L266.9 392.3 L264.2 392.2 L261.5 392.1 L258.8 391.7 L256.3 391.2 L253.7 390.5 L251.0 389.5 L248.2 388.1 L245.1 386.6 L241.9 384.8 L238.7 382.9 L235.3 380.9 L231.9 378.9 L228.3 377.1 L224.7 375.5 L221.0 374.0 L217.4 372.8 L214.1 371.8 L210.9 371.0 L207.8 370.2 L204.7 369.6 L201.6 369.0 L198.5 368.5 L195.4 368.1 L192.3 367.8 L189.2 367.6 L186.0 367.5 L182.9 367.6 L179.7 367.8 L176.5 368.1 L173.3 368.6 L170.1 369.3 L167.0 370.1 L163.9 371.0 L160.8 371.9 L157.8 373.0 L154.9 374.1 L151.9 375.3 L149.1 376.4 L146.2 377.7 L143.4 378.9 L140.5 380.2 L137.5 381.8 L134.4 383.4 L131.3 385.2 L128.3 387.0 L125.4 388.8 L122.6 390.6 L120.0 392.4 L117.6 394.0 L115.6 395.6 L113.9 397.1 L113.0 399.0Z" fill="#000"/></g></svg>
<svg class="a" style="left:88px;top:411px;" width="327" height="48" viewBox="0 0 327 48"><g transform="translate(-88,-411)"><path d="M113.0 447.0 L114.9 446.9 L117.0 446.2 L119.4 445.3 L122.0 444.2 L124.9 442.9 L127.9 441.6 L131.0 440.2 L134.1 438.8 L137.3 437.5 L140.4 436.3 L143.4 435.2 L146.2 434.2 L149.1 433.4 L151.9 432.5 L154.8 431.7 L157.7 430.9 L160.6 430.1 L163.5 429.4 L166.4 428.8 L169.2 428.2 L172.1 427.8 L174.8 427.5 L177.6 427.3 L180.2 427.3 L182.9 427.3 L185.6 427.5 L188.2 427.8 L190.8 428.2 L193.4 428.7 L196.1 429.2 L198.8 429.9 L201.5 430.6 L204.3 431.5 L207.1 432.4 L210.0 433.4 L212.8 434.4 L215.6 435.5 L218.5 436.9 L221.6 438.5 L224.8 440.3 L228.1 442.2 L231.5 444.2 L235.0 446.2 L238.6 447.9 L242.3 449.4 L246.1 450.8 L250.0 451.9 L253.8 452.6 L257.4 452.9 L261.0 453.0 L264.4 452.9 L267.8 452.5 L271.1 452.0 L274.4 451.3 L277.5 450.5 L280.5 449.6 L283.4 448.6 L286.2 447.5 L289.0 446.3 L291.6 445.1 L294.4 443.7 L297.1 442.0 L299.7 440.1 L302.3 438.2 L304.7 436.1 L307.0 434.0 L309.1 431.9 L311.0 429.9 L312.8 428.0 L314.2 426.3 L315.4 424.7 L316.0 423.0 L316.0 423.0 L314.2 423.1 L312.3 423.9 L310.3 425.1 L308.1 426.4 L305.8 427.8 L303.4 429.4 L300.9 430.9 L298.3 432.4 L295.7 433.8 L293.2 435.1 L290.8 436.1 L288.4 436.9 L285.9 437.6 L283.2 438.2 L280.6 438.8 L277.9 439.4 L275.1 439.8 L272.4 440.2 L269.7 440.4 L266.9 440.5 L264.2 440.5 L261.5 440.3 L258.8 439.9 L256.2 439.4 L253.7 438.6 L251.0 437.6 L248.1 436.2 L245.1 434.6 L241.9 432.9 L238.5 431.2 L235.0 429.4 L231.5 427.6 L227.9 425.9 L224.3 424.3 L220.7 422.8 L217.2 421.6 L213.8 420.7 L210.7 419.9 L207.5 419.1 L204.4 418.5 L201.4 417.9 L198.3 417.4 L195.2 417.0 L192.2 416.7 L189.1 416.5 L186.0 416.5 L182.9 416.5 L179.8 416.7 L176.6 417.1 L173.4 417.6 L170.3 418.2 L167.2 419.0 L164.1 419.9 L161.1 420.9 L158.1 421.9 L155.2 423.0 L152.2 424.1 L149.4 425.3 L146.6 426.5 L143.8 427.8 L140.9 429.1 L137.8 430.6 L134.8 432.2 L131.7 434.0 L128.7 435.7 L125.7 437.5 L122.9 439.3 L120.3 441.0 L118.0 442.6 L115.9 444.1 L114.2 445.5 L113.0 447.0Z" fill="#000"/></g></svg>
<svg class="a" style="left:88px;top:459px;" width="327" height="48" viewBox="0 0 327 48"><g transform="translate(-88,-459)"><path d="M113.0 495.0 L114.9 494.0 L117.3 492.7 L120.2 491.2 L123.4 489.4 L126.8 487.6 L130.4 485.7 L134.2 483.8 L137.9 482.0 L141.5 480.4 L145.0 479.0 L148.4 477.7 L151.8 476.5 L155.3 475.3 L158.8 474.2 L162.3 473.1 L165.9 472.2 L169.4 471.4 L173.0 470.7 L176.5 470.3 L180.0 470.0 L183.5 469.9 L186.9 470.0 L190.3 470.3 L193.8 470.7 L197.2 471.3 L200.6 472.0 L204.1 472.8 L207.7 473.8 L211.3 474.8 L215.0 476.0 L218.8 477.4 L222.8 479.2 L226.8 481.2 L230.9 483.4 L235.0 485.7 L239.1 487.9 L243.2 489.9 L247.2 491.7 L251.2 493.1 L255.0 494.0 L258.7 494.5 L262.5 494.7 L266.2 494.6 L269.8 494.3 L273.4 493.8 L276.9 493.0 L280.3 492.2 L283.7 491.2 L286.9 490.1 L290.0 489.0 L293.1 487.6 L296.2 485.9 L299.3 484.0 L302.3 481.9 L305.2 479.7 L307.9 477.5 L310.4 475.5 L312.6 473.7 L314.5 472.1 L316.0 471.0" fill="none" stroke="#000" stroke-width="7" stroke-linecap="round"/><path d="" fill="#000"/></g></svg>
<svg class="a" style="left:88px;top:507px;" width="327" height="48" viewBox="0 0 327 48"><g transform="translate(-88,-507)"><path d="M113.0 543.0 L114.7 542.6 L116.9 542.0 L119.4 541.2 L122.1 540.2 L124.9 539.0 L127.9 537.5 L130.9 536.0 L134.0 534.6 L137.2 533.4 L140.5 532.5 L143.7 531.9 L146.8 531.7 L149.9 531.5 L152.9 531.1 L155.8 530.5 L158.6 529.5 L161.3 528.3 L164.0 527.1 L166.6 525.8 L169.4 525.0 L172.2 524.8 L175.0 525.0 L177.8 525.5 L180.4 526.0 L182.9 526.4 L185.4 526.4 L188.0 526.1 L190.6 525.6 L193.4 525.2 L196.1 525.0 L198.9 525.3 L201.6 526.1 L204.3 527.4 L206.9 528.9 L209.6 530.5 L212.3 531.9 L215.0 533.0 L218.0 534.0 L221.4 534.9 L225.0 535.8 L228.7 537.0 L232.4 538.6 L235.9 540.5 L239.2 542.7 L242.5 545.1 L245.9 547.3 L249.6 549.2 L253.5 550.4 L257.3 550.3 L261.0 549.7 L264.4 548.7 L267.8 547.6 L271.0 546.6 L274.1 545.8 L277.2 545.2 L280.3 544.7 L283.3 544.1 L286.2 543.3 L288.9 542.3 L291.6 540.9 L294.1 539.2 L296.6 537.1 L299.0 535.0 L301.4 532.9 L303.7 530.8 L306.1 528.8 L308.3 526.9 L310.3 525.1 L312.2 523.3 L313.7 521.7 L315.0 520.2 L316.0 519.0 L316.0 519.0 L314.6 519.6 L312.8 520.6 L310.9 521.8 L308.8 523.2 L306.6 524.9 L304.3 526.6 L301.8 528.2 L299.2 529.7 L296.5 531.0 L293.7 531.9 L291.0 532.6 L288.4 533.1 L285.9 533.6 L283.3 534.4 L280.7 535.3 L278.1 536.3 L275.4 537.1 L272.7 537.7 L269.8 537.8 L267.0 537.4 L264.2 536.6 L261.5 535.6 L258.9 534.5 L256.5 533.6 L254.1 533.3 L251.2 533.0 L248.0 532.6 L244.5 531.8 L241.0 530.6 L237.6 528.8 L234.4 526.6 L231.3 524.1 L228.1 521.5 L224.9 519.2 L221.3 517.3 L217.7 516.1 L214.2 515.5 L210.8 515.3 L207.5 515.3 L204.3 515.0 L201.2 514.5 L198.2 513.6 L195.3 512.5 L192.3 511.3 L189.3 510.2 L186.1 509.6 L182.9 509.5 L179.6 510.0 L176.4 510.9 L173.2 512.1 L170.1 513.3 L167.0 514.2 L163.9 514.9 L160.6 515.2 L157.4 515.7 L154.3 516.4 L151.3 517.3 L148.4 518.7 L145.8 520.4 L143.2 522.3 L140.5 524.3 L137.8 526.4 L134.8 528.4 L131.8 530.2 L128.8 531.9 L125.8 533.6 L122.9 535.3 L120.3 537.0 L118.0 538.7 L116.0 540.4 L114.3 541.8 L113.0 543.0Z" fill="#000"/></g></svg>
<svg class="a" style="left:88px;top:555px;" width="327" height="48" viewBox="0 0 327 48"><g transform="translate(-88,-555)"><path d="M113.0 591.0 L114.6 590.3 L116.6 589.4 L118.8 588.2 L121.4 586.9 L124.1 585.5 L127.1 584.0 L130.1 582.5 L133.2 581.0 L136.4 579.6 L139.5 578.2 L142.5 576.9 L145.3 575.9 L148.2 574.9 L151.0 573.9 L153.9 573.0 L156.8 572.0 L159.7 571.2 L162.7 570.4 L165.6 569.6 L168.5 569.0 L171.4 568.5 L174.3 568.1 L177.2 567.8 L180.1 567.6 L182.9 567.6 L185.7 567.7 L188.5 567.9 L191.3 568.3 L194.0 568.7 L196.8 569.2 L199.6 569.8 L202.5 570.5 L205.4 571.3 L208.3 572.2 L211.3 573.1 L214.3 574.1 L217.4 575.2 L220.5 576.5 L223.8 578.1 L227.2 579.8 L230.6 581.6 L234.1 583.4 L237.6 585.2 L241.0 586.9 L244.5 588.5 L248.0 589.8 L251.4 590.9 L254.7 591.6 L258.0 592.0 L261.2 592.2 L264.3 592.1 L267.5 591.9 L270.6 591.5 L273.6 591.0 L276.6 590.4 L279.5 589.6 L282.3 588.8 L285.1 587.9 L287.7 586.9 L290.3 585.9 L292.9 584.7 L295.6 583.2 L298.1 581.6 L300.7 579.9 L303.1 578.0 L305.5 576.1 L307.8 574.2 L309.8 572.4 L311.7 570.8 L313.4 569.3 L314.9 568.0 L316.0 567.0 L316.0 567.0 L314.7 567.8 L313.1 568.9 L311.3 570.3 L309.3 571.8 L307.2 573.5 L304.9 575.3 L302.4 577.0 L299.9 578.7 L297.3 580.4 L294.8 581.8 L292.2 583.1 L289.7 584.1 L287.1 585.0 L284.4 585.8 L281.7 586.6 L278.9 587.3 L276.0 588.0 L273.2 588.5 L270.2 588.9 L267.3 589.1 L264.3 589.2 L261.3 589.1 L258.3 588.9 L255.3 588.4 L252.3 587.6 L249.2 586.6 L245.9 585.2 L242.7 583.6 L239.3 581.8 L235.9 580.0 L232.5 578.1 L229.1 576.2 L225.7 574.3 L222.3 572.6 L219.0 571.1 L215.7 569.9 L212.6 568.9 L209.5 568.1 L206.4 567.3 L203.4 566.6 L200.5 565.9 L197.5 565.4 L194.6 565.0 L191.7 564.6 L188.8 564.4 L185.8 564.3 L182.9 564.3 L179.9 564.4 L176.9 564.6 L173.9 565.0 L170.9 565.6 L167.9 566.3 L164.9 567.0 L162.0 567.9 L159.0 568.8 L156.1 569.8 L153.2 570.9 L150.3 571.9 L147.5 573.0 L144.7 574.1 L141.8 575.3 L138.8 576.7 L135.7 578.2 L132.6 579.8 L129.6 581.4 L126.6 583.1 L123.7 584.7 L121.0 586.3 L118.5 587.7 L116.3 589.0 L114.5 590.1 L113.0 591.0Z" fill="#3a3a3a"/></g></svg>
<svg class="a" style="left:88px;top:603px;" width="327" height="48" viewBox="0 0 327 48"><g transform="translate(-88,-603)"><path d="M113.0 639.0 L114.6 638.3 L116.5 637.3 L118.8 636.2 L121.4 635.0 L124.2 633.6 L127.2 632.2 L130.2 630.8 L133.4 629.4 L136.6 628.0 L139.7 626.7 L142.7 625.6 L145.6 624.7 L148.5 623.8 L151.4 623.0 L154.3 622.2 L157.3 621.4 L160.2 620.7 L163.1 620.1 L166.1 619.5 L169.0 619.0 L171.8 618.7 L174.7 618.5 L177.5 618.4 L180.2 618.4 L182.9 618.6 L185.6 618.9 L188.2 619.3 L190.9 619.8 L193.5 620.4 L196.1 621.1 L198.8 621.9 L201.4 622.8 L204.2 623.8 L207.0 624.8 L209.8 626.0 L212.6 627.1 L215.3 628.4 L218.1 629.9 L221.0 631.6 L224.2 633.3 L227.7 634.9 L231.3 636.5 L235.0 638.0 L238.8 639.6 L242.5 641.0 L246.4 642.2 L250.2 643.1 L254.0 643.7 L257.6 643.8 L261.0 643.8 L264.4 643.5 L267.7 643.0 L270.9 642.4 L274.1 641.6 L277.1 640.8 L280.0 639.8 L282.9 638.7 L285.6 637.6 L288.3 636.4 L290.9 635.2 L293.5 633.8 L296.1 632.2 L298.6 630.4 L301.1 628.4 L303.5 626.4 L305.8 624.4 L307.9 622.5 L309.9 620.6 L311.8 618.8 L313.4 617.3 L314.8 616.0 L316.0 615.0 L316.0 615.0 L314.7 615.8 L313.1 616.9 L311.3 618.2 L309.2 619.7 L307.0 621.3 L304.6 622.9 L302.1 624.6 L299.5 626.2 L296.9 627.6 L294.3 628.9 L291.7 630.0 L289.1 630.8 L286.6 631.5 L283.9 632.1 L281.1 632.7 L278.3 633.2 L275.5 633.6 L272.7 633.9 L269.9 634.0 L267.0 634.0 L264.2 633.8 L261.4 633.5 L258.7 633.0 L256.0 632.3 L253.5 631.4 L250.8 630.2 L247.9 628.7 L244.9 626.9 L241.8 625.0 L238.7 622.9 L235.4 620.8 L232.1 618.6 L228.5 616.8 L224.8 615.3 L221.1 613.9 L217.4 612.9 L214.0 612.1 L210.8 611.4 L207.6 610.8 L204.5 610.3 L201.4 609.8 L198.3 609.5 L195.2 609.2 L192.1 609.1 L189.0 609.0 L186.0 609.1 L182.9 609.3 L179.8 609.6 L176.7 610.0 L173.6 610.6 L170.5 611.4 L167.5 612.2 L164.5 613.2 L161.5 614.2 L158.5 615.3 L155.6 616.4 L152.8 617.6 L149.9 618.9 L147.1 620.1 L144.4 621.3 L141.5 622.7 L138.5 624.2 L135.5 625.8 L132.5 627.5 L129.4 629.2 L126.5 630.9 L123.6 632.6 L121.0 634.2 L118.5 635.7 L116.4 637.0 L114.5 638.1 L113.0 639.0Z" fill="#000"/></g></svg>
<svg class="a" style="left:88px;top:651px;" width="327" height="48" viewBox="0 0 327 48"><g transform="translate(-88,-651)"><path d="M113.0 687.0 L114.6 686.3 L116.6 685.5 L118.9 684.4 L121.5 683.2 L124.3 681.9 L127.3 680.5 L130.5 679.2 L133.7 678.0 L137.0 676.8 L140.1 675.6 L143.1 674.5 L145.9 673.4 L148.7 672.5 L151.7 671.7 L154.7 671.3 L157.7 670.9 L160.7 670.4 L163.6 669.7 L166.4 668.9 L169.2 668.1 L172.0 667.7 L174.9 667.8 L177.7 668.3 L180.3 668.9 L182.9 669.2 L185.5 669.1 L188.1 669.0 L190.7 669.1 L193.3 669.9 L195.7 671.3 L198.1 672.8 L200.6 674.1 L203.4 674.7 L206.4 674.7 L209.5 674.9 L212.4 675.6 L215.0 677.0 L217.6 679.0 L220.3 681.0 L223.5 682.7 L227.1 684.1 L230.9 685.2 L234.7 686.7 L238.4 688.3 L242.0 690.2 L245.7 691.9 L249.6 693.0 L253.7 693.3 L257.5 692.8 L261.0 692.2 L264.4 691.7 L267.7 691.4 L271.0 691.1 L274.2 690.5 L277.3 689.6 L280.2 688.3 L282.9 686.8 L285.6 685.5 L288.2 684.3 L290.9 683.2 L293.5 681.9 L296.2 680.3 L298.7 678.4 L301.1 676.4 L303.4 674.3 L305.7 672.3 L307.8 670.4 L309.9 668.5 L311.7 666.8 L313.4 665.3 L314.8 664.0 L316.0 663.0 L316.0 663.0 L314.7 663.9 L313.2 665.0 L311.3 666.3 L309.3 667.8 L307.1 669.4 L304.7 671.1 L302.2 672.7 L299.5 674.2 L296.8 675.5 L294.2 676.8 L291.6 677.9 L289.1 678.8 L286.6 679.6 L283.9 680.3 L281.1 680.6 L278.2 680.7 L275.3 680.8 L272.5 681.0 L269.8 681.3 L267.0 681.7 L264.2 681.7 L261.4 681.1 L258.8 680.0 L256.3 678.7 L254.0 677.5 L251.4 676.5 L248.4 675.5 L245.3 674.2 L242.2 672.4 L239.1 670.1 L236.0 667.6 L232.8 665.2 L229.2 663.4 L225.3 662.2 L221.3 661.3 L217.6 660.4 L214.3 659.2 L211.3 657.5 L208.4 655.9 L205.3 655.0 L202.0 654.9 L198.7 655.4 L195.4 655.8 L192.3 655.8 L189.2 655.3 L186.1 654.8 L182.9 654.7 L179.7 655.1 L176.5 656.1 L173.4 657.3 L170.3 658.3 L167.2 659.2 L164.1 659.8 L161.0 660.5 L158.0 661.6 L155.1 663.0 L152.4 664.6 L149.6 666.1 L146.9 667.4 L144.1 668.6 L141.2 669.8 L138.1 671.2 L135.1 673.0 L132.1 674.8 L129.2 676.8 L126.3 678.6 L123.5 680.4 L120.8 682.0 L118.4 683.5 L116.3 684.9 L114.5 686.1 L113.0 687.0Z" fill="#000"/></g></svg>
<svg class="a" style="left:88px;top:699px;" width="327" height="48" viewBox="0 0 327 48"><g transform="translate(-88,-699)"><path d="M113.0 735.0 L114.6 734.2 L116.5 733.3 L118.7 732.1 L121.3 730.8 L124.0 729.3 L127.0 727.8 L130.0 726.3 L133.1 724.8 L136.3 723.3 L139.4 722.0 L142.4 720.7 L145.3 719.7 L148.1 718.7 L151.0 717.7 L153.8 716.8 L156.8 715.9 L159.7 715.0 L162.6 714.2 L165.6 713.5 L168.5 712.9 L171.4 712.4 L174.3 712.0 L177.2 711.8 L180.1 711.6 L182.9 711.7 L185.7 711.8 L188.5 712.1 L191.3 712.4 L194.0 712.9 L196.8 713.4 L199.6 714.1 L202.4 714.8 L205.3 715.6 L208.2 716.5 L211.2 717.5 L214.1 718.5 L217.1 719.7 L220.2 721.2 L223.4 722.8 L226.8 724.6 L230.2 726.3 L233.7 728.1 L237.2 729.9 L240.7 731.5 L244.3 733.0 L247.8 734.4 L251.2 735.4 L254.6 736.1 L257.9 736.4 L261.2 736.5 L264.4 736.5 L267.5 736.2 L270.6 735.8 L273.6 735.2 L276.6 734.5 L279.5 733.7 L282.3 732.8 L285.1 731.9 L287.7 730.9 L290.3 729.8 L292.9 728.6 L295.5 727.2 L298.1 725.5 L300.6 723.8 L303.1 721.9 L305.4 720.0 L307.7 718.1 L309.7 716.3 L311.6 714.7 L313.3 713.2 L314.8 711.9 L316.0 711.0 L316.0 711.0 L314.7 711.9 L313.2 713.0 L311.4 714.4 L309.4 716.0 L307.3 717.6 L304.9 719.4 L302.5 721.1 L300.0 722.8 L297.4 724.4 L294.8 725.9 L292.2 727.2 L289.7 728.2 L287.1 729.0 L284.4 729.8 L281.7 730.6 L278.9 731.2 L276.0 731.8 L273.1 732.3 L270.2 732.6 L267.2 732.8 L264.3 732.9 L261.3 732.8 L258.3 732.5 L255.4 731.9 L252.4 731.2 L249.4 730.0 L246.2 728.6 L243.0 727.0 L239.6 725.2 L236.3 723.3 L232.9 721.3 L229.5 719.4 L226.1 717.6 L222.6 716.0 L219.2 714.6 L215.9 713.5 L212.7 712.6 L209.6 711.7 L206.5 711.0 L203.5 710.3 L200.5 709.7 L197.6 709.2 L194.6 708.8 L191.7 708.5 L188.8 708.3 L185.8 708.2 L182.9 708.2 L179.9 708.4 L176.9 708.6 L173.9 709.1 L170.9 709.7 L167.9 710.3 L165.0 711.1 L162.0 712.0 L159.1 713.0 L156.1 714.0 L153.2 715.0 L150.4 716.1 L147.5 717.2 L144.7 718.3 L141.9 719.5 L138.9 720.9 L135.8 722.4 L132.7 724.0 L129.7 725.6 L126.7 727.3 L123.8 728.9 L121.1 730.4 L118.6 731.8 L116.4 733.1 L114.5 734.2 L113.0 735.0Z" fill="#000"/></g></svg>
<div class="a" style="left:88px;top:345px;width:327px;height:18px;overflow:hidden"><div class="t" style="right:15px;top:-11px;font-size:22px;color:#eee">Calligraphy</div></div>
<div class="t" style="right:2590px;top:384px;font-size:21px;color:#f0f0f0;font-weight:normal">Turnip pen</div>
<div class="t" style="right:2590px;top:432px;font-size:21px;color:#f0f0f0;font-weight:normal">For effect line</div>
<div class="t" style="right:2590px;top:480px;font-size:17px;color:#f0f0f0;font-weight:normal">ちょっぴりえっちな描き文字ペン</div>
<div class="t" style="right:2590px;top:528px;font-size:17px;color:#f0f0f0;font-weight:normal">うにゃペン</div>
<div class="t" style="right:2590px;top:576px;font-size:17px;color:#f0f0f0;font-weight:normal">鉛筆R</div>
<div class="t" style="right:2590px;top:624px;font-size:17px;color:#f0f0f0;font-weight:normal">髪の毛ペン</div>
<div class="t" style="right:2590px;top:672px;font-size:21px;color:#f0f0f0;font-weight:normal">Textured pen</div>
<div class="t" style="right:2590px;top:720px;font-size:21px;color:#f0f0f0;font-weight:normal">Real G-pen 2</div>
<svg class="a" style="left:273px;top:752px;" width="30" height="36" viewBox="0 0 30 36"><defs><linearGradient id="ci" x1="0" x2="1"><stop offset="0" stop-color="#333"/><stop offset="1" stop-color="#ddd"/></linearGradient></defs><circle cx="11" cy="6" r="4" fill="#fff" stroke="#222" stroke-width="1.5"/><rect x="3" y="11" width="18" height="5" fill="#fff" stroke="#222"/><rect x="2" y="15" width="16" height="16" fill="url(#ci)" stroke="#222"/><rect x="15" y="19" width="14" height="15" fill="#fff" stroke="#222"/><path d="M17 23H27M17 26H27M17 29H27" stroke="#222"/></svg>
<svg class="a" style="left:328px;top:752px;" width="32" height="40" viewBox="0 0 32 40"><defs><linearGradient id="np" x1="0" y1="0" x2="0" y2="1"><stop offset="0" stop-color="#e4eef4"/><stop offset="1" stop-color="#fff"/></linearGradient></defs><path d="M2 2H31V27L19 38H2Z" fill="url(#np)" stroke="#222" stroke-width="1.5"/><path d="M19 38V27H31" fill="#dde" stroke="#222" stroke-width="1.5"/></svg>
<svg class="a" style="left:384px;top:752px;" width="34" height="40" viewBox="0 0 34 40"><path d="M5 13H29L26 37H8Z" fill="#f2f2f2" stroke="#222" stroke-width="1.5"/><path d="M11 16L12 35M17 16V35M23 16L22 35" stroke="#555"/><rect x="2" y="10" width="30" height="6" rx="3" fill="#fff" stroke="#222" stroke-width="1.5"/><path d="M10 10C10 3 24 3 24 10" fill="none" stroke="#222" stroke-width="3"/><path d="M10 10C10 3 24 3 24 10" fill="none" stroke="#fff" stroke-width="1.5"/></svg>
<div class="a" style="left:87px;top:797px;width:342px;height:3px;background:#9b9b9e;border-top:1px solid #5a5a5a"></div>
<div class="a" style="left:87px;top:800px;width:342px;height:51px;background:#555;border-top:1px solid #6a6a6a"></div>
<div class="a" style="left:88px;top:810px;width:41px;height:31px;background:#4b4b4b"></div>
<svg class="a" style="left:99px;top:815px;" width="20" height="20" viewBox="0 0 20 20"><path d="M1 3L7 9L1 15Z" fill="#8c8c8c"/><rect x="9" y="2" width="9" height="3" fill="#8c8c8c"/><rect x="9" y="8" width="9" height="3" fill="#8c8c8c"/><rect x="9" y="14" width="9" height="3" fill="#8c8c8c"/></svg>
<div class="a" style="left:129px;top:810px;width:245px;height:41px;background:#76777b"></div>
<div class="a" style="left:374px;top:810px;width:54px;height:31px;background:#6a6b6e;border-left:1px solid #444"></div>
<svg class="a" style="left:382px;top:812px;" width="44" height="30" viewBox="0 0 44 30"><path d="M10 2C6 10 5 16 6 22C7 26 9 28 10 28C11 28 13 26 14 22C15 16 14 10 10 2Z" fill="#999" stroke="#555" stroke-width="1.2"/><path d="M10 8V24" stroke="#555" stroke-width="1.5"/><path d="M20 8V30M20 8H26M20 19H26" stroke="#444" stroke-width="1.3" fill="none"/><circle cx="30" cy="7" r="3" fill="#444"/><circle cx="30" cy="19" r="3" fill="#444"/></svg>
<svg class="a" style="left:138px;top:812px;" width="20" height="38" viewBox="0 0 20 38"><g transform="scale(0.95)"><path d="M11 1C6 10 4 18 5 24C6 28 8 30 11 31C14 30 16 28 17 24C18 18 16 10 11 1Z" fill="#ddd" stroke="#222" stroke-width="1.4"/><path d="M11 8V26" stroke="#222" stroke-width="2"/><circle cx="11" cy="24" r="2" fill="#222"/><path d="M6 34H16L19 39H3Z" fill="#111"/></g></svg>
<svg class="a" style="left:151px;top:812px;" width="22" height="22" viewBox="0 0 22 22"><path d="M11 2L13 5L16 4L17 7L20 8L19 11L21 13L19 15L20 18L17 18L16 21L13 20L11 22L9 20L6 21L5 18L2 18L3 15L1 13L3 11L2 8L5 7L6 4L9 5Z" fill="#222"/><circle cx="11" cy="12" r="3.5" fill="#76777b"/></svg>
<div class="a" style="left:181px;top:818px;width:186px;height:26px;overflow:hidden"><div class="t" style="top:2px;font-size:18.5px;color:#e8e8e8">Tool property [Real G-pen 2]</div></div>
<div class="a" style="left:87px;top:851px;width:342px;height:637px;background:#76777b"></div>
<div class="a" style="left:88px;top:852px;width:339px;height:79px;background:#76777b;border:1px solid #4a4a4a;border-bottom:2px solid #3a3a3a"></div>
<div class="a" style="left:89px;top:853px;width:168px;height:76px;background:#b4b4b4"></div>
<div class="a" style="left:89px;top:853px;width:131px;height:27px;background:rgba(100,100,100,0.55)"></div>
<div class="t" style="left:90px;top:855px;font-size:21px;color:#f4f4f4;">Real G-pen 2</div>
<svg class="a" style="left:88px;top:852px;" width="339" height="78" viewBox="0 0 339 78"><path d="M35.2 57.3 L38.2 55.3 L42.3 52.6 L47.1 49.4 L52.5 45.9 L58.3 42.4 L64.1 38.9 L69.8 35.8 L75.2 33.4 L80.4 31.4 L85.9 29.6 L91.5 28.0 L97.0 26.7 L102.5 25.6 L107.7 24.7 L112.6 24.2 L117.2 23.9 L121.2 23.9 L124.8 24.3 L128.2 24.9 L131.3 25.7 L134.4 26.7 L137.4 27.9 L140.6 29.1 L143.8 30.3 L147.0 31.7 L150.2 33.2 L153.4 34.9 L156.6 36.7 L159.9 38.5 L163.3 40.4 L166.8 42.1 L170.4 43.7 L174.0 45.1 L177.5 46.4 L181.1 47.7 L184.8 48.9 L188.4 50.1 L192.0 51.1 L195.6 52.0 L199.2 52.9 L202.6 53.6 L205.8 54.4 L209.1 55.1 L212.4 55.8 L215.8 56.3 L219.3 56.5 L223.1 56.5 L227.1 56.2 L231.3 55.5 L235.8 54.7 L240.5 53.6 L245.4 52.3 L250.3 50.8 L255.3 49.1 L260.2 47.3 L265.1 45.3 L270.2 42.8 L275.7 39.7 L281.4 36.2 L287.0 32.6 L292.4 29.1 L297.1 25.9 L301.1 23.2 L304.2 21.3 L303.8 20.7 L300.8 22.7 L296.8 25.4 L292.0 28.6 L286.7 32.1 L281.1 35.7 L275.4 39.2 L270.0 42.2 L264.9 44.7 L260.0 46.7 L255.1 48.5 L250.1 50.1 L245.1 51.3 L240.3 52.3 L235.6 53.1 L231.1 53.6 L226.9 53.8 L223.1 53.7 L219.7 53.3 L216.4 52.6 L213.4 51.7 L210.3 50.7 L207.3 49.5 L204.1 48.3 L200.8 47.1 L197.4 46.0 L194.1 44.7 L190.7 43.4 L187.2 42.1 L183.8 40.7 L180.4 39.2 L177.0 37.8 L173.6 36.3 L170.3 34.8 L167.1 33.2 L163.7 31.4 L160.4 29.7 L156.9 27.9 L153.4 26.3 L149.8 24.8 L146.2 23.7 L142.7 22.7 L139.4 21.8 L136.0 20.9 L132.6 20.3 L129.0 19.8 L125.2 19.6 L121.2 19.7 L116.8 20.1 L112.2 20.9 L107.2 21.9 L101.9 23.2 L96.5 24.7 L91.0 26.4 L85.5 28.3 L80.1 30.4 L74.8 32.6 L69.5 35.3 L63.8 38.4 L57.9 41.8 L52.2 45.4 L46.8 48.9 L42.0 52.1 L37.9 54.8 L34.8 56.7Z" fill="#ff0a1e"/></svg>
<svg class="a" style="left:376px;top:882px;" width="44" height="46" viewBox="0 0 44 46"><defs><linearGradient id="wg" x1="0" y1="0" x2="1" y2="1"><stop offset="0" stop-color="#fff"/><stop offset="1" stop-color="#222"/></linearGradient></defs><circle cx="18" cy="18" r="16" fill="#888" stroke="#555" stroke-width="4"/><path d="M8 11C8 5 15 2 19 5L14 10L18 14L23 9C26 13 24 20 18 21L38 40L34 44L14 25C9 23 8 16 8 11Z" fill="url(#wg)" stroke="#fff" stroke-width="2"/></svg>
<div class="a" style="left:414px;top:930px;width:15px;height:507px;background:#6d6e71;border-left:1px solid #555"></div>
<div class="t" style="left:117px;top:938.231px;font-size:21.3px;color:#f0f0f0;">Brush Size</div>
<div class="a" style="left:159px;top:963px;width:107px;height:18px;border-bottom:2px solid #333"></div>
<div class="a" style="left:264px;top:975px;width:2px;height:6px;background:#333"></div>
<div class="a" style="left:159px;top:963px;width:49px;height:18px;background:linear-gradient(90deg,#8a8a8a,#bdbdbd);border:2px solid #333"></div>
<div class="t" style="right:2648px;top:942px;font-size:21px;color:#f4f4f4;">9.7</div>
<svg class="a" style="left:362px;top:950px;" width="12" height="20" viewBox="0 0 12 20"><path d="M6 1L11 8H1Z M1 12H11L6 19Z" fill="#333"/></svg>
<div class="a" style="left:382px;top:940px;width:28px;height:41px;background:linear-gradient(#7e7f83,#6c6d70);border:1px solid #555;border-radius:2px"></div>
<svg class="a" style="left:384px;top:950px;" width="24" height="22" viewBox="0 0 24 22"><circle cx="12" cy="7" r="4.5" fill="none" stroke="#fff" stroke-width="2"/><circle cx="7" cy="15" r="4.5" fill="none" stroke="#fff" stroke-width="2"/><circle cx="17" cy="15" r="4.5" fill="none" stroke="#fff" stroke-width="2"/></svg>
<div class="a" style="left:98px;top:988px;width:312px;height:2px;background:#6a6b6e;border-bottom:1px solid #828387"></div>
<div class="t" style="left:117px;top:1001.231px;font-size:21.3px;color:#f0f0f0;">Opacity</div>
<div class="a" style="left:159px;top:1025px;width:107px;height:18px;"></div>
<div class="a" style="left:159px;top:1025px;width:107px;height:18px;background:linear-gradient(90deg,#8a8a8a,#bdbdbd);border:2px solid #333"></div>
<div class="t" style="right:2648px;top:1005px;font-size:21px;color:#f4f4f4;">100</div>
<svg class="a" style="left:362px;top:1015px;" width="12" height="20" viewBox="0 0 12 20"><path d="M6 1L11 8H1Z M1 12H11L6 19Z" fill="#333"/></svg>
<div class="a" style="left:382px;top:996px;width:28px;height:47px;background:linear-gradient(#7e7f83,#6c6d70);border:1px solid #555;border-radius:2px"></div>
<div class="a" style="left:387px;top:1012px;width:17px;height:16px;background:#555;border:2px solid #fff"></div>
<div class="a" style="left:98px;top:1050px;width:312px;height:2px;background:#6a6b6e;border-bottom:1px solid #828387"></div>
<div class="t" style="left:117px;top:1076px;font-size:17px;color:#eeeeee;transform:scaleX(0.85);transform-origin:left;width:80px;overflow:hidden">Anti-alias</div>
<div class="a" style="left:187px;top:1058px;width:223px;height:47px;background:linear-gradient(#7f8084,#66676a);border:1px solid #4a4a4a;border-radius:2px"></div>
<div class="a" style="left:284px;top:1059px;width:50px;height:45px;background:linear-gradient(#8598a5,#6b7f8e)"></div>
<svg class="a" style="left:187px;top:1058px;" width="223" height="47" viewBox="0 0 223 47"><circle cx="23" cy="23" r="20" fill="#222"/><circle cx="71" cy="23" r="20" fill="#bdbdbd"/><circle cx="71" cy="23" r="12" fill="#222"/><circle cx="121" cy="23" r="20" fill="#b5b5b5"/><circle cx="121" cy="23" r="14" fill="#666"/><circle cx="121" cy="23" r="8.5" fill="#222"/><circle cx="170" cy="23" r="22" fill="#a8a8a8"/><circle cx="170" cy="23" r="16" fill="#777"/><circle cx="170" cy="23" r="12" fill="#555"/><circle cx="170" cy="23" r="7.5" fill="#222"/><path d="M198 17H218L208 29Z" fill="#444"/></svg>
<div class="a" style="left:98px;top:1112px;width:312px;height:2px;background:#6a6b6e;border-bottom:1px solid #828387"></div>
<div class="t" style="left:117px;top:1125.231px;font-size:21.3px;color:#f0f0f0;">Stabilization</div>
<div class="a" style="left:159px;top:1149px;width:107px;height:18px;border-bottom:2px solid #333"></div>
<div class="a" style="left:264px;top:1161px;width:2px;height:6px;background:#333"></div>
<div class="a" style="left:159px;top:1149px;width:67px;height:18px;background:linear-gradient(90deg,#8a8a8a,#bdbdbd);border:2px solid #333"></div>
<div class="t" style="right:2648px;top:1130px;font-size:21px;color:#f4f4f4;">12</div>
<svg class="a" style="left:362px;top:1139px;" width="12" height="20" viewBox="0 0 12 20"><path d="M6 1L11 8H1Z M1 12H11L6 19Z" fill="#333"/></svg>
<div class="a" style="left:98px;top:1174px;width:312px;height:2px;background:#6a6b6e;border-bottom:1px solid #828387"></div>
<div class="a" style="left:117px;top:1192px;width:27px;height:27px;background:#7e7f82;border:1px solid #5e5e5e;border-radius:3px"></div>
<div class="t" style="left:150px;top:1194px;font-size:20px;color:#a9a9ab;">Vector magnet</div>
<div class="a" style="left:288px;top:1183px;width:18px;height:47px;border:2px solid #555"></div>
<div class="a" style="left:307px;top:1183px;width:18px;height:47px;border:2px solid #555"></div>
<div class="a" style="left:326px;top:1183px;width:18px;height:47px;border:2px solid #555"></div>
<div class="a" style="left:345px;top:1183px;width:18px;height:47px;border:2px solid #555"></div>
<div class="a" style="left:364px;top:1183px;width:18px;height:47px;border:2px solid #555"></div>
<div class="a" style="left:382px;top:1183px;width:28px;height:47px;background:#7e7f82;border:1px solid #666;border-radius:2px"></div>
<svg class="a" style="left:390px;top:1198px;" width="10" height="16" viewBox="0 0 10 16"><path d="M2 2L8 8L2 14Z" fill="#5a5a5a"/></svg>
<div class="a" style="left:88px;top:1436px;width:327px;height:1px;background:#444"></div>
<div class="a" style="left:88px;top:851px;width:1px;height:586px;background:#4a4a4a"></div>
<svg class="a" style="left:325px;top:1441px;" width="44" height="44" viewBox="0 0 44 44"><g fill="#2c2c2c"><path d="M22 2L27 12L20 11Z" transform="rotate(0 22 22)"/><path d="M22 2L27 12L20 11Z" transform="rotate(45 22 22)"/><path d="M22 2L27 12L20 11Z" transform="rotate(90 22 22)"/><path d="M22 2L27 12L20 11Z" transform="rotate(135 22 22)"/><path d="M22 2L27 12L20 11Z" transform="rotate(180 22 22)"/><path d="M22 2L27 12L20 11Z" transform="rotate(225 22 22)"/><path d="M22 2L27 12L20 11Z" transform="rotate(270 22 22)"/><path d="M22 2L27 12L20 11Z" transform="rotate(315 22 22)"/></g></svg>
<svg class="a" style="left:378px;top:1440px;" width="40" height="44" viewBox="0 0 40 44"><defs><linearGradient id="wr" x1="0" x2="1"><stop offset="0" stop-color="#eee"/><stop offset="1" stop-color="#222"/></linearGradient></defs><path d="M5 2C2 5 2 12 6 14L6 40H15L15 14C19 12 19 5 16 2L16 8H8Z" fill="#bbb"/><path d="M19 2C15 6 15 13 20 15L20 40H32L32 15C37 13 37 6 33 2L33 9H25L25 2Z" fill="url(#wr)" stroke="#222" stroke-width="1.2"/></svg>
<div class="a" style="left:87px;top:1486px;width:342px;height:3px;background:#9b9b9e;border-top:1px solid #5a5a5a"></div>
<div class="a" style="left:87px;top:1489px;width:342px;height:41px;background:#555;border-top:1px solid #6a6a6a"></div>
<div class="a" style="left:88px;top:1498px;width:41px;height:32px;background:#4b4b4b"></div>
<svg class="a" style="left:99px;top:1504px;" width="20" height="20" viewBox="0 0 20 20"><path d="M1 3L7 9L1 15Z" fill="#8c8c8c"/><rect x="9" y="2" width="9" height="3" fill="#8c8c8c"/><rect x="9" y="8" width="9" height="3" fill="#8c8c8c"/><rect x="9" y="14" width="9" height="3" fill="#8c8c8c"/></svg>
<div class="a" style="left:129px;top:1498px;width:52px;height:40px;background:#76777b"></div>
<div class="a" style="left:181px;top:1498px;width:54px;height:32px;background:#6d6e71;border:1px solid #4a4a4a;border-bottom:none"></div>
<div class="a" style="left:235px;top:1498px;width:54px;height:32px;background:#6d6e71;border:1px solid #4a4a4a;border-bottom:none"></div>
<div class="a" style="left:289px;top:1498px;width:54px;height:32px;background:#6d6e71;border:1px solid #4a4a4a;border-bottom:none"></div>
<div class="a" style="left:343px;top:1498px;width:39px;height:32px;background:#6d6e71;border:1px solid #4a4a4a;border-bottom:none"></div>
<div class="a" style="left:143px;top:1503px;width:31px;height:31px;border-radius:50%;background:#e8e8e8"></div>
<div class="a" style="left:141px;top:1500px;width:30px;height:30px;border-radius:50%;background:conic-gradient(from 0deg,#ff0 0deg,#0f0 60deg,#0ff 120deg,#00f 180deg,#f0f 240deg,#f00 300deg,#ff0 360deg)"></div>
<div class="a" style="left:149px;top:1508px;width:14px;height:14px;border-radius:50%;background:#888"></div>
<svg class="a" style="left:191px;top:1502px;" width="44" height="26" viewBox="0 0 44 26"><defs><linearGradient id="cs" x1="0" x2="1"><stop offset="0" stop-color="#ddd"/><stop offset="1" stop-color="#444"/></linearGradient></defs><rect x="5" y="2" width="33" height="6" fill="url(#cs)"/><rect x="5" y="12" width="33" height="6" fill="url(#cs)"/><rect x="5" y="22" width="33" height="5" fill="url(#cs)"/></svg>
<svg class="a" style="left:245px;top:1500px;" width="36" height="30" viewBox="0 0 36 30"><rect x="4" y="4" width="8" height="8" fill="#555"/><rect x="14" y="4" width="8" height="8" fill="#333"/><rect x="24" y="4" width="8" height="8" fill="#555"/><rect x="4" y="14" width="8" height="8" fill="#444"/><rect x="24" y="14" width="8" height="8" fill="#aaa"/><rect x="12" y="12" width="12" height="12" fill="none" stroke="#bbb" stroke-width="2"/><rect x="24" y="24" width="8" height="6" fill="#222"/></svg>
<svg class="a" style="left:299px;top:1500px;" width="36" height="30" viewBox="0 0 36 30"><rect x="4" y="3" width="10" height="10" fill="#777" stroke="#444" stroke-width="2"/><rect x="20" y="3" width="10" height="10" fill="#555" stroke="#444" stroke-width="2"/><rect x="4" y="20" width="10" height="10" fill="#666" stroke="#444" stroke-width="2"/><rect x="20" y="20" width="10" height="10" fill="#bbb"/><path d="M9 13V20M14 17H20M25 13V20" stroke="#555" stroke-width="2"/></svg>
<svg class="a" style="left:350px;top:1502px;" width="32" height="28" viewBox="0 0 32 28"><path d="M6 8L10 28H6Z" fill="#ccc"/><rect x="14" y="10" width="18" height="18" fill="#444"/><path d="M14 2L32 6V10H14Z" fill="#ccc"/></svg>
<div class="a" style="left:382px;top:1491px;width:46px;height:39px;background:linear-gradient(#858689,#6f7073);border:1px solid #5a5a5a"></div>
<svg class="a" style="left:392px;top:1502px;" width="28" height="16" viewBox="0 0 28 16"><path d="M2 2H26L14 14Z" fill="#3a3a3a"/></svg>
<div class="a" style="left:87px;top:1530px;width:342px;height:470px;background:#76777b"></div>
<div class="a" style="left:418px;top:1540px;width:10px;height:457px;background:repeating-linear-gradient(90deg,#444 0 1px,#6a6a6a 1px 3px)"></div>
<div class="a" style="left:89px;top:1592px;width:326px;height:326px;border-radius:50%;background:conic-gradient(from 0deg,#ffee00 0deg,#00e000 60deg,#00e8f0 120deg,#1010f0 180deg,#f010e0 240deg,#f01020 300deg,#ffee00 360deg);border:2px solid #3a3a3a"></div>
<div class="a" style="left:116px;top:1619px;width:272px;height:272px;border-radius:50%;background:#76777b;border:2px solid #3a3a3a"></div>
<div class="a" style="left:166px;top:1667px;width:176px;height:177px;background:linear-gradient(rgba(0,0,0,0),#000),linear-gradient(90deg,#fff,#ff0013);border:2px solid #333"></div>
<svg class="a" style="left:330px;top:1657px;" width="22" height="22" viewBox="0 0 22 22"><circle cx="11" cy="11" r="8" fill="none" stroke="#222" stroke-width="4"/><circle cx="11" cy="11" r="8" fill="none" stroke="#fff" stroke-width="2"/></svg>
<svg class="a" style="left:100px;top:1674px;" width="36" height="32" viewBox="0 0 36 32"><g transform="rotate(24 18 16)"><rect x="6" y="9" width="24" height="14" fill="#e01020" stroke="#000" stroke-width="4"/><rect x="6" y="9" width="24" height="14" fill="none" stroke="#fff" stroke-width="2"/></g></svg>
<div class="a" style="left:108px;top:1937px;width:38px;height:38px;background:#545354;border:1px solid #3a3a3a"></div>
<div class="a" style="left:87px;top:1916px;width:38px;height:38px;background:#8ec8e8"></div>
<div class="a" style="left:89px;top:1918px;width:34px;height:34px;background:#000"></div>
<div class="a" style="left:90px;top:1919px;width:32px;height:32px;background:#fff"></div>
<div class="a" style="left:91px;top:1920px;width:30px;height:30px;background:#ff0012"></div>
<div class="a" style="left:87px;top:1976px;width:59px;height:18px;background-color:#fff;background-image:linear-gradient(45deg,#888 25%,transparent 25%,transparent 75%,#888 75%),linear-gradient(45deg,#888 25%,transparent 25%,transparent 75%,#888 75%);background-size:10px 10px;background-position:0 0,5px 5px;border:1px solid #555"></div>
<div class="a" style="left:160px;top:1978px;width:16px;height:16px;background:#900;border:2px solid #444"></div>
<div class="t" style="left:182px;top:1975px;font-size:21px;color:#f0f0f0;">255</div>
<div class="a" style="left:224px;top:1978px;width:16px;height:16px;background:#0a0;border:2px solid #444"></div>
<div class="t" style="left:264px;top:1975px;font-size:21px;color:#f0f0f0;">0</div>
<div class="a" style="left:288px;top:1978px;width:16px;height:16px;background:#00c;border:2px solid #444"></div>
<div class="t" style="left:321px;top:1975px;font-size:21px;color:#f0f0f0;">19</div>
<div class="a" style="left:370px;top:1954px;width:35px;height:35px;border-radius:50%;background:conic-gradient(#ff0 0deg,#0f0 60deg,#0ff 120deg,#00f 180deg,#f0f 240deg,#f00 300deg,#ff0 360deg)"></div>
<div class="a" style="left:375px;top:1959px;width:25px;height:25px;border-radius:50%;background:#76777b"></div>
<svg class="a" style="left:377px;top:1960px;" width="22" height="22" viewBox="0 0 22 22"><defs><linearGradient id="pl" x1="0" x2="1"><stop offset="0" stop-color="#222"/><stop offset="1" stop-color="#e33"/></linearGradient></defs><path d="M5 3L19 11L5 19Z" fill="url(#pl)"/></svg>
<div class="a" style="left:0px;top:1997px;width:3000px;height:3px;background:#111"></div>
<div class="a" style="left:430px;top:96px;width:1692px;height:65px;background:#77787c;border-top:2px solid #4a4a4a;border-left:1px solid #555"></div>
<div class="a" style="left:710px;top:100px;width:2px;height:56px;background:linear-gradient(90deg,#68696c,#8a8b8e)"></div>
<div class="a" style="left:987px;top:100px;width:2px;height:56px;background:linear-gradient(90deg,#68696c,#8a8b8e)"></div>
<div class="a" style="left:1151px;top:100px;width:2px;height:56px;background:linear-gradient(90deg,#68696c,#8a8b8e)"></div>
<div class="a" style="left:1464px;top:100px;width:2px;height:56px;background:linear-gradient(90deg,#68696c,#8a8b8e)"></div>
<div class="a" style="left:1702px;top:100px;width:2px;height:56px;background:linear-gradient(90deg,#68696c,#8a8b8e)"></div>
<div class="a" style="left:1940px;top:100px;width:2px;height:56px;background:linear-gradient(90deg,#68696c,#8a8b8e)"></div>
<div class="a" style="left:505px;top:98px;width:73px;height:60px;background:#68696c;border:1px solid #5d5e60;border-radius:2px"></div>
<div class="a" style="left:1709px;top:98px;width:73px;height:60px;background:#68696c;border:1px solid #5d5e60;border-radius:2px"></div>
<div class="a" style="left:1784px;top:98px;width:73px;height:60px;background:#68696c;border:1px solid #5d5e60;border-radius:2px"></div>
<svg class="a" style="left:450px;top:110px;" width="37" height="37" viewBox="0 0 37 37"><rect x="0" y="0" width="16" height="16" fill="#2a2a2a"/><rect x="21" y="0" width="16" height="16" fill="#2a2a2a"/><rect x="0" y="21" width="16" height="16" fill="#2a2a2a"/><rect x="21" y="21" width="16" height="16" fill="#2a2a2a"/></svg>
<svg class="a" style="left:520px;top:110px;" width="44" height="40" viewBox="0 0 44 40"><rect x="3" y="3" width="28" height="22" fill="none" stroke="#222" stroke-width="2"/><path d="M6 20L10 12L18 8" stroke="#fff" stroke-width="3" fill="none"/><path d="M22 30C20 24 22 20 26 18L34 16C38 16 38 20 35 21L40 22C42 24 40 33 34 36L26 38Z" fill="#fff" stroke="#222" stroke-width="1.5"/></svg>
<svg class="a" style="left:579px;top:118px;" width="34" height="17" viewBox="0 0 34 17"><path d="M0 0H34L17.0 17Z" fill="#3a3a3a"/></svg>
<div class="a" style="left:620px;top:109px;width:80px;height:38px;background:linear-gradient(#fafafa,#d8d8d8);border:1px solid #aaa;border-radius:4px"></div>
<svg class="a" style="left:639px;top:113px;" width="41" height="28" viewBox="0 0 41 28"><g transform="scale(0.95)"><path d="M22 27C10 27 3 22 3 15C3 7 11 3 21 3C31 3 39 7 39 13C39 19 33 22 25 22C18 22 13 19 13 15C13 11 17 9 22 9C26 9 29 11 29 14C29 16 26 17 23 16" fill="none" stroke="#3a3a3a" stroke-width="4.5" stroke-linecap="round"/></g></svg>
<svg class="a" style="left:732px;top:106px;" width="40" height="42" viewBox="0 0 40 42"><path d="M10 6H26L36 16V40H10Z" fill="#f8f8f8" stroke="#222" stroke-width="1.5"/><path d="M26 6V16H36" fill="#ddd" stroke="#222" stroke-width="1.5"/><path d="M6 2L8 9M2 6L11 5M3 10L9 2" stroke="#222" stroke-width="1.3"/></svg>
<svg class="a" style="left:806px;top:104px;" width="46" height="44" viewBox="0 0 46 44"><defs><linearGradient id="fo" x1="0" y1="0" x2="0" y2="1"><stop offset="0" stop-color="#ddd"/><stop offset="1" stop-color="#999"/></linearGradient></defs><path d="M2 14H14L17 18H34V40H2Z" fill="#ccc" stroke="#222" stroke-width="1.5"/><path d="M8 22H44L36 40H2Z" fill="url(#fo)" stroke="#222" stroke-width="1.5"/><path d="M22 12C24 5 32 3 37 8" stroke="#222" stroke-width="3" fill="none"/><path d="M33 3L42 9L35 12Z" fill="#222"/></svg>
<svg class="a" style="left:882px;top:107px;" width="40" height="40" viewBox="0 0 40 40"><defs><linearGradient id="sv" x1="0" y1="0" x2="0" y2="1"><stop offset="0" stop-color="#fff"/><stop offset="1" stop-color="#e4eef2"/></linearGradient></defs><rect x="1" y="1" width="38" height="38" fill="#2a2a2a"/><rect x="7" y="3" width="26" height="26" fill="url(#sv)"/><rect x="7" y="31" width="26" height="6" fill="#aaa"/></svg>
<svg class="a" style="left:938px;top:118px;" width="34" height="17" viewBox="0 0 34 17"><path d="M0 0H34L17.0 17Z" fill="#3a3a3a"/></svg>
<svg class="a" style="left:1010px;top:106px;" width="46" height="40" viewBox="0 0 46 40"><path d="M14 10H30C40 10 42 26 30 28H10" stroke="#2a2a2a" stroke-width="6" fill="none" stroke-dasharray="40 0"/><path d="M1 28L13 18V38Z" fill="#2a2a2a"/><path d="M14 10H24" stroke="#77787c" stroke-width="2" stroke-dasharray="2 3"/></svg>
<svg class="a" style="left:1084px;top:106px;" width="46" height="40" viewBox="0 0 46 40"><path d="M32 10H16C6 10 4 26 16 28H36" stroke="#5e5f62" stroke-width="6" fill="none"/><path d="M45 28L33 18V38Z" fill="#5e5f62" transform="translate(0,-18)"/></svg>
<svg class="a" style="left:1178px;top:107px;" width="38" height="40" viewBox="0 0 38 40"><g fill="#2a2a2a"><ellipse cx="19" cy="5" rx="4" ry="5"/><ellipse cx="31" cy="11" rx="4.5" ry="4"/><ellipse cx="33" cy="24" rx="4.5" ry="4"/><ellipse cx="24" cy="34" rx="4" ry="5"/><ellipse cx="11" cy="33" rx="4.5" ry="4"/><ellipse cx="5" cy="21" rx="4.5" ry="4"/><ellipse cx="8" cy="10" rx="4" ry="4"/></g></svg>
<svg class="a" style="left:1246px;top:104px;" width="46" height="46" viewBox="0 0 46 46"><rect x="8" y="2" width="30" height="42" fill="#8e8f92"/><rect x="2" y="8" width="42" height="30" fill="#8e8f92"/><rect x="9" y="9" width="28" height="28" fill="#9c9c9e" stroke="#666" stroke-width="2" stroke-dasharray="4 3"/></svg>
<svg class="a" style="left:1322px;top:104px;" width="42" height="44" viewBox="0 0 42 44"><path d="M3 30C1 22 8 17 16 16L12 22C8 24 7 28 8 33Z" fill="#2a2a2a"/><path d="M20 12L38 26L30 40L12 34Z" fill="#f2f2f2" stroke="#222" stroke-width="1.5"/><path d="M16 18L28 6" stroke="#222" stroke-width="4"/><path d="M16 18L28 6" stroke="#fff" stroke-width="2"/><circle cx="30" cy="5" r="3" fill="none" stroke="#222" stroke-width="1.5"/></svg>
<svg class="a" style="left:1397px;top:105px;" width="42" height="42" viewBox="0 0 42 42"><circle cx="21" cy="21" r="11" fill="none" stroke="#2a2a2a" stroke-width="5"/><g fill="#2a2a2a"><path d="M1 1L14 4L4 14Z"/><path d="M41 1L28 4L38 14Z"/><path d="M1 41L14 38L4 28Z"/><path d="M41 41L28 38L38 28Z"/></g><rect x="12" y="12" width="18" height="18" fill="#77787c"/><path d="M7 7L35 35M35 7L7 35" stroke="#2a2a2a" stroke-width="5"/></svg>
<svg class="a" style="left:1486px;top:107px;" width="44" height="40" viewBox="0 0 44 40"><rect x="6" y="10" width="26" height="22" fill="none" stroke="#66676a" stroke-width="3" stroke-dasharray="4 3"/><path d="M2 38L40 4" stroke="#66676a" stroke-width="3"/></svg>
<svg class="a" style="left:1562px;top:106px;" width="40" height="40" viewBox="0 0 40 40"><path d="M38 2V38H2Z" fill="#66676a"/><path d="M2 2H38V38H2Z" fill="none" stroke="#66676a" stroke-width="3" stroke-dasharray="4 3"/><path d="M2 38L38 2" stroke="#77787c" stroke-width="2"/></svg>
<svg class="a" style="left:1634px;top:104px;" width="42" height="44" viewBox="0 0 42 44"><rect x="0" y="0" width="42" height="44" fill="#8a8b8e"/><rect x="6" y="6" width="30" height="32" fill="#a8a8aa" stroke="#5a5a5c" stroke-width="3" stroke-dasharray="4 3"/></svg>
<svg class="a" style="left:1724px;top:104px;" width="48" height="48" viewBox="0 0 48 48"><path d="M6 10V40H32" stroke="#1a9ee8" stroke-width="4" fill="none"/><path d="M6 10L32 40" stroke="#222" stroke-width="2"/><path d="M28 2H36V36L32 44L28 36Z" fill="#f4f4f4" stroke="#222" stroke-width="1.6"/><path d="M32 8V34" stroke="#222" stroke-width="1.5"/></svg>
<svg class="a" style="left:1798px;top:104px;" width="48" height="48" viewBox="0 0 48 48"><path d="M4 40C4 26 16 20 26 20" stroke="#1a9ee8" stroke-width="4" fill="none"/><path d="M4 40H40" stroke="#1a9ee8" stroke-width="4"/><path d="M8 40C8 28 18 24 28 24" stroke="#222" stroke-width="1.5" fill="none"/><path d="M28 2H36V36L32 44L28 36Z" fill="#f4f4f4" stroke="#222" stroke-width="1.6"/><path d="M32 8V34" stroke="#222" stroke-width="1.5"/></svg>
<svg class="a" style="left:1870px;top:104px;" width="48" height="48" viewBox="0 0 48 48"><path d="M2 16H44M2 36H44M12 4V46M34 4V46" stroke="#1a9ee8" stroke-width="3.5"/><path d="M28 2H36V36L32 44L28 36Z" fill="#f4f4f4" stroke="#222" stroke-width="1.6"/><path d="M32 8V34" stroke="#222" stroke-width="1.5"/></svg>
<div class="a" style="left:1947px;top:109px;width:79px;height:38px;background:linear-gradient(#fafafa,#d8d8d8);border:1px solid #aaa;border-radius:4px"></div>
<svg class="a" style="left:1966px;top:111px;" width="40" height="34" viewBox="0 0 40 34"><path d="M20 2C31 2 38 8 38 15C38 22 31 27 22 27L18 33L16 27C8 26 2 21 2 15C2 8 9 2 20 2Z" fill="#3a3a3a"/><text x="20" y="23" font-family="Liberation Sans" font-weight="bold" font-size="20" fill="#fff" text-anchor="middle">?</text></svg>
<div class="a" style="left:430px;top:160px;width:1692px;height:40px;background:#4d4d4d"></div>
<div class="a" style="left:431px;top:161px;width:198px;height:39px;background:linear-gradient(#8d8e91,#77787b);border-right:1px solid #555"></div>
<div class="t" style="left:439px;top:170px;font-size:21px;color:#eeeeee;">Comic*</div>
<div class="a" style="left:604px;top:176px;width:9px;height:9px;border-radius:50%;background:#555"></div>
<div class="a" style="left:2073px;top:161px;width:47px;height:38px;background:linear-gradient(#858689,#6f7073);border:1px solid #555"></div>
<svg class="a" style="left:2083px;top:174px;" width="26" height="14" viewBox="0 0 26 14"><path d="M0 0H26L13.0 14Z" fill="#3a3a3a"/></svg>
<div class="a" style="left:430px;top:199px;width:1692px;height:1769px;background:#5a5a5a"></div>
<div class="a" style="left:431px;top:200px;width:1666px;height:29px;background:#fff;border-bottom:2px solid #555"></div>
<div class="a" style="left:431px;top:200px;width:28px;height:1745px;background:#fff;border-right:2px solid #555"></div>
<svg class="a" style="left:459px;top:200px;" width="1638" height="29" viewBox="0 0 1638 29"><path d="M0.4 23V29" stroke="#555" stroke-width="1.2"/><path d="M6.7 0V29" stroke="#555" stroke-width="1.3"/><text x="10.7" y="18" font-family="Liberation Mono" font-size="16" letter-spacing="2.3" fill="#5a5a5a">160</text><path d="M12.9 23V29" stroke="#555" stroke-width="1.2"/><path d="M19.1 23V29" stroke="#555" stroke-width="1.2"/><path d="M25.4 23V29" stroke="#555" stroke-width="1.2"/><path d="M31.6 23V29" stroke="#555" stroke-width="1.2"/><path d="M37.8 19V29" stroke="#555" stroke-width="1.2"/><path d="M44.1 23V29" stroke="#555" stroke-width="1.2"/><path d="M50.3 23V29" stroke="#555" stroke-width="1.2"/><path d="M56.5 23V29" stroke="#555" stroke-width="1.2"/><path d="M62.8 23V29" stroke="#555" stroke-width="1.2"/><path d="M69.0 0V29" stroke="#555" stroke-width="1.3"/><text x="73.0" y="18" font-family="Liberation Mono" font-size="16" letter-spacing="2.3" fill="#5a5a5a">200</text><path d="M75.2 23V29" stroke="#555" stroke-width="1.2"/><path d="M81.5 23V29" stroke="#555" stroke-width="1.2"/><path d="M87.7 23V29" stroke="#555" stroke-width="1.2"/><path d="M93.9 23V29" stroke="#555" stroke-width="1.2"/><path d="M100.2 19V29" stroke="#555" stroke-width="1.2"/><path d="M106.4 23V29" stroke="#555" stroke-width="1.2"/><path d="M112.6 23V29" stroke="#555" stroke-width="1.2"/><path d="M118.9 23V29" stroke="#555" stroke-width="1.2"/><path d="M125.1 23V29" stroke="#555" stroke-width="1.2"/><path d="M131.3 0V29" stroke="#555" stroke-width="1.3"/><text x="135.3" y="18" font-family="Liberation Mono" font-size="16" letter-spacing="2.3" fill="#5a5a5a">240</text><path d="M137.6 23V29" stroke="#555" stroke-width="1.2"/><path d="M143.8 23V29" stroke="#555" stroke-width="1.2"/><path d="M150.0 23V29" stroke="#555" stroke-width="1.2"/><path d="M156.2 23V29" stroke="#555" stroke-width="1.2"/><path d="M162.5 19V29" stroke="#555" stroke-width="1.2"/><path d="M168.7 23V29" stroke="#555" stroke-width="1.2"/><path d="M174.9 23V29" stroke="#555" stroke-width="1.2"/><path d="M181.2 23V29" stroke="#555" stroke-width="1.2"/><path d="M187.4 23V29" stroke="#555" stroke-width="1.2"/><path d="M193.6 0V29" stroke="#555" stroke-width="1.3"/><text x="197.6" y="18" font-family="Liberation Mono" font-size="16" letter-spacing="2.3" fill="#5a5a5a">280</text><path d="M199.9 23V29" stroke="#555" stroke-width="1.2"/><path d="M206.1 23V29" stroke="#555" stroke-width="1.2"/><path d="M212.3 23V29" stroke="#555" stroke-width="1.2"/><path d="M218.6 23V29" stroke="#555" stroke-width="1.2"/><path d="M224.8 19V29" stroke="#555" stroke-width="1.2"/><path d="M231.0 23V29" stroke="#555" stroke-width="1.2"/><path d="M237.3 23V29" stroke="#555" stroke-width="1.2"/><path d="M243.5 23V29" stroke="#555" stroke-width="1.2"/><path d="M249.7 23V29" stroke="#555" stroke-width="1.2"/><path d="M256.0 0V29" stroke="#555" stroke-width="1.3"/><text x="260.0" y="18" font-family="Liberation Mono" font-size="16" letter-spacing="2.3" fill="#5a5a5a">320</text><path d="M262.2 23V29" stroke="#555" stroke-width="1.2"/><path d="M268.4 23V29" stroke="#555" stroke-width="1.2"/><path d="M274.7 23V29" stroke="#555" stroke-width="1.2"/><path d="M280.9 23V29" stroke="#555" stroke-width="1.2"/><path d="M287.1 19V29" stroke="#555" stroke-width="1.2"/><path d="M293.4 23V29" stroke="#555" stroke-width="1.2"/><path d="M299.6 23V29" stroke="#555" stroke-width="1.2"/><path d="M305.8 23V29" stroke="#555" stroke-width="1.2"/><path d="M312.0 23V29" stroke="#555" stroke-width="1.2"/><path d="M318.3 0V29" stroke="#555" stroke-width="1.3"/><text x="322.3" y="18" font-family="Liberation Mono" font-size="16" letter-spacing="2.3" fill="#5a5a5a">360</text><path d="M324.5 23V29" stroke="#555" stroke-width="1.2"/><path d="M330.7 23V29" stroke="#555" stroke-width="1.2"/><path d="M337.0 23V29" stroke="#555" stroke-width="1.2"/><path d="M343.2 23V29" stroke="#555" stroke-width="1.2"/><path d="M349.4 19V29" stroke="#555" stroke-width="1.2"/><path d="M355.7 23V29" stroke="#555" stroke-width="1.2"/><path d="M361.9 23V29" stroke="#555" stroke-width="1.2"/><path d="M368.1 23V29" stroke="#555" stroke-width="1.2"/><path d="M374.4 23V29" stroke="#555" stroke-width="1.2"/><path d="M380.6 0V29" stroke="#555" stroke-width="1.3"/><text x="384.6" y="18" font-family="Liberation Mono" font-size="16" letter-spacing="2.3" fill="#5a5a5a">400</text><path d="M386.8 23V29" stroke="#555" stroke-width="1.2"/><path d="M393.1 23V29" stroke="#555" stroke-width="1.2"/><path d="M399.3 23V29" stroke="#555" stroke-width="1.2"/><path d="M405.5 23V29" stroke="#555" stroke-width="1.2"/><path d="M411.8 19V29" stroke="#555" stroke-width="1.2"/><path d="M418.0 23V29" stroke="#555" stroke-width="1.2"/><path d="M424.2 23V29" stroke="#555" stroke-width="1.2"/><path d="M430.5 23V29" stroke="#555" stroke-width="1.2"/><path d="M436.7 23V29" stroke="#555" stroke-width="1.2"/><path d="M442.9 0V29" stroke="#555" stroke-width="1.3"/><text x="446.9" y="18" font-family="Liberation Mono" font-size="16" letter-spacing="2.3" fill="#5a5a5a">440</text><path d="M449.2 23V29" stroke="#555" stroke-width="1.2"/><path d="M455.4 23V29" stroke="#555" stroke-width="1.2"/><path d="M461.6 23V29" stroke="#555" stroke-width="1.2"/><path d="M467.8 23V29" stroke="#555" stroke-width="1.2"/><path d="M474.1 19V29" stroke="#555" stroke-width="1.2"/><path d="M480.3 23V29" stroke="#555" stroke-width="1.2"/><path d="M486.5 23V29" stroke="#555" stroke-width="1.2"/><path d="M492.8 23V29" stroke="#555" stroke-width="1.2"/><path d="M499.0 23V29" stroke="#555" stroke-width="1.2"/><path d="M505.2 0V29" stroke="#555" stroke-width="1.3"/><text x="509.2" y="18" font-family="Liberation Mono" font-size="16" letter-spacing="2.3" fill="#5a5a5a">480</text><path d="M511.5 23V29" stroke="#555" stroke-width="1.2"/><path d="M517.7 23V29" stroke="#555" stroke-width="1.2"/><path d="M523.9 23V29" stroke="#555" stroke-width="1.2"/><path d="M530.2 23V29" stroke="#555" stroke-width="1.2"/><path d="M536.4 19V29" stroke="#555" stroke-width="1.2"/><path d="M542.6 23V29" stroke="#555" stroke-width="1.2"/><path d="M548.9 23V29" stroke="#555" stroke-width="1.2"/><path d="M555.1 23V29" stroke="#555" stroke-width="1.2"/><path d="M561.3 23V29" stroke="#555" stroke-width="1.2"/><path d="M567.6 0V29" stroke="#555" stroke-width="1.3"/><text x="571.6" y="18" font-family="Liberation Mono" font-size="16" letter-spacing="2.3" fill="#5a5a5a">520</text><path d="M573.8 23V29" stroke="#555" stroke-width="1.2"/><path d="M580.0 23V29" stroke="#555" stroke-width="1.2"/><path d="M586.3 23V29" stroke="#555" stroke-width="1.2"/><path d="M592.5 23V29" stroke="#555" stroke-width="1.2"/><path d="M598.7 19V29" stroke="#555" stroke-width="1.2"/><path d="M605.0 23V29" stroke="#555" stroke-width="1.2"/><path d="M611.2 23V29" stroke="#555" stroke-width="1.2"/><path d="M617.4 23V29" stroke="#555" stroke-width="1.2"/><path d="M623.6 23V29" stroke="#555" stroke-width="1.2"/><path d="M629.9 0V29" stroke="#555" stroke-width="1.3"/><text x="633.9" y="18" font-family="Liberation Mono" font-size="16" letter-spacing="2.3" fill="#5a5a5a">560</text><path d="M636.1 23V29" stroke="#555" stroke-width="1.2"/><path d="M642.3 23V29" stroke="#555" stroke-width="1.2"/><path d="M648.6 23V29" stroke="#555" stroke-width="1.2"/><path d="M654.8 23V29" stroke="#555" stroke-width="1.2"/><path d="M661.0 19V29" stroke="#555" stroke-width="1.2"/><path d="M667.3 23V29" stroke="#555" stroke-width="1.2"/><path d="M673.5 23V29" stroke="#555" stroke-width="1.2"/><path d="M679.7 23V29" stroke="#555" stroke-width="1.2"/><path d="M686.0 23V29" stroke="#555" stroke-width="1.2"/><path d="M692.2 0V29" stroke="#555" stroke-width="1.3"/><text x="696.2" y="18" font-family="Liberation Mono" font-size="16" letter-spacing="2.3" fill="#5a5a5a">600</text><path d="M698.4 23V29" stroke="#555" stroke-width="1.2"/><path d="M704.7 23V29" stroke="#555" stroke-width="1.2"/><path d="M710.9 23V29" stroke="#555" stroke-width="1.2"/><path d="M717.1 23V29" stroke="#555" stroke-width="1.2"/><path d="M723.4 19V29" stroke="#555" stroke-width="1.2"/><path d="M729.6 23V29" stroke="#555" stroke-width="1.2"/><path d="M735.8 23V29" stroke="#555" stroke-width="1.2"/><path d="M742.1 23V29" stroke="#555" stroke-width="1.2"/><path d="M748.3 23V29" stroke="#555" stroke-width="1.2"/><path d="M754.5 0V29" stroke="#555" stroke-width="1.3"/><text x="758.5" y="18" font-family="Liberation Mono" font-size="16" letter-spacing="2.3" fill="#5a5a5a">640</text><path d="M760.8 23V29" stroke="#555" stroke-width="1.2"/><path d="M767.0 23V29" stroke="#555" stroke-width="1.2"/><path d="M773.2 23V29" stroke="#555" stroke-width="1.2"/><path d="M779.4 23V29" stroke="#555" stroke-width="1.2"/><path d="M785.7 19V29" stroke="#555" stroke-width="1.2"/><path d="M791.9 23V29" stroke="#555" stroke-width="1.2"/><path d="M798.1 23V29" stroke="#555" stroke-width="1.2"/><path d="M804.4 23V29" stroke="#555" stroke-width="1.2"/><path d="M810.6 23V29" stroke="#555" stroke-width="1.2"/><path d="M816.8 0V29" stroke="#555" stroke-width="1.3"/><text x="820.8" y="18" font-family="Liberation Mono" font-size="16" letter-spacing="2.3" fill="#5a5a5a">680</text><path d="M823.1 23V29" stroke="#555" stroke-width="1.2"/><path d="M829.3 23V29" stroke="#555" stroke-width="1.2"/><path d="M835.5 23V29" stroke="#555" stroke-width="1.2"/><path d="M841.8 23V29" stroke="#555" stroke-width="1.2"/><path d="M848.0 19V29" stroke="#555" stroke-width="1.2"/><path d="M854.2 23V29" stroke="#555" stroke-width="1.2"/><path d="M860.5 23V29" stroke="#555" stroke-width="1.2"/><path d="M866.7 23V29" stroke="#555" stroke-width="1.2"/><path d="M872.9 23V29" stroke="#555" stroke-width="1.2"/><path d="M879.2 0V29" stroke="#555" stroke-width="1.3"/><text x="883.2" y="18" font-family="Liberation Mono" font-size="16" letter-spacing="2.3" fill="#5a5a5a">720</text><path d="M885.4 23V29" stroke="#555" stroke-width="1.2"/><path d="M891.6 23V29" stroke="#555" stroke-width="1.2"/><path d="M897.9 23V29" stroke="#555" stroke-width="1.2"/><path d="M904.1 23V29" stroke="#555" stroke-width="1.2"/><path d="M910.3 19V29" stroke="#555" stroke-width="1.2"/><path d="M916.6 23V29" stroke="#555" stroke-width="1.2"/><path d="M922.8 23V29" stroke="#555" stroke-width="1.2"/><path d="M929.0 23V29" stroke="#555" stroke-width="1.2"/><path d="M935.2 23V29" stroke="#555" stroke-width="1.2"/><path d="M941.5 0V29" stroke="#555" stroke-width="1.3"/><text x="945.5" y="18" font-family="Liberation Mono" font-size="16" letter-spacing="2.3" fill="#5a5a5a">760</text><path d="M947.7 23V29" stroke="#555" stroke-width="1.2"/><path d="M953.9 23V29" stroke="#555" stroke-width="1.2"/><path d="M960.2 23V29" stroke="#555" stroke-width="1.2"/><path d="M966.4 23V29" stroke="#555" stroke-width="1.2"/><path d="M972.6 19V29" stroke="#555" stroke-width="1.2"/><path d="M978.9 23V29" stroke="#555" stroke-width="1.2"/><path d="M985.1 23V29" stroke="#555" stroke-width="1.2"/><path d="M991.3 23V29" stroke="#555" stroke-width="1.2"/><path d="M997.6 23V29" stroke="#555" stroke-width="1.2"/><path d="M1003.8 0V29" stroke="#555" stroke-width="1.3"/><text x="1007.8" y="18" font-family="Liberation Mono" font-size="16" letter-spacing="2.3" fill="#5a5a5a">800</text><path d="M1010.0 23V29" stroke="#555" stroke-width="1.2"/><path d="M1016.3 23V29" stroke="#555" stroke-width="1.2"/><path d="M1022.5 23V29" stroke="#555" stroke-width="1.2"/><path d="M1028.7 23V29" stroke="#555" stroke-width="1.2"/><path d="M1035.0 19V29" stroke="#555" stroke-width="1.2"/><path d="M1041.2 23V29" stroke="#555" stroke-width="1.2"/><path d="M1047.4 23V29" stroke="#555" stroke-width="1.2"/><path d="M1053.7 23V29" stroke="#555" stroke-width="1.2"/><path d="M1059.9 23V29" stroke="#555" stroke-width="1.2"/><path d="M1066.1 0V29" stroke="#555" stroke-width="1.3"/><text x="1070.1" y="18" font-family="Liberation Mono" font-size="16" letter-spacing="2.3" fill="#5a5a5a">840</text><path d="M1072.4 23V29" stroke="#555" stroke-width="1.2"/><path d="M1078.6 23V29" stroke="#555" stroke-width="1.2"/><path d="M1084.8 23V29" stroke="#555" stroke-width="1.2"/><path d="M1091.0 23V29" stroke="#555" stroke-width="1.2"/><path d="M1097.3 19V29" stroke="#555" stroke-width="1.2"/><path d="M1103.5 23V29" stroke="#555" stroke-width="1.2"/><path d="M1109.7 23V29" stroke="#555" stroke-width="1.2"/><path d="M1116.0 23V29" stroke="#555" stroke-width="1.2"/><path d="M1122.2 23V29" stroke="#555" stroke-width="1.2"/><path d="M1128.4 0V29" stroke="#555" stroke-width="1.3"/><text x="1132.4" y="18" font-family="Liberation Mono" font-size="16" letter-spacing="2.3" fill="#5a5a5a">880</text><path d="M1134.7 23V29" stroke="#555" stroke-width="1.2"/><path d="M1140.9 23V29" stroke="#555" stroke-width="1.2"/><path d="M1147.1 23V29" stroke="#555" stroke-width="1.2"/><path d="M1153.4 23V29" stroke="#555" stroke-width="1.2"/><path d="M1159.6 19V29" stroke="#555" stroke-width="1.2"/><path d="M1165.8 23V29" stroke="#555" stroke-width="1.2"/><path d="M1172.1 23V29" stroke="#555" stroke-width="1.2"/><path d="M1178.3 23V29" stroke="#555" stroke-width="1.2"/><path d="M1184.5 23V29" stroke="#555" stroke-width="1.2"/><path d="M1190.8 0V29" stroke="#555" stroke-width="1.3"/><text x="1194.8" y="18" font-family="Liberation Mono" font-size="16" letter-spacing="2.3" fill="#5a5a5a">920</text><path d="M1197.0 23V29" stroke="#555" stroke-width="1.2"/><path d="M1203.2 23V29" stroke="#555" stroke-width="1.2"/><path d="M1209.5 23V29" stroke="#555" stroke-width="1.2"/><path d="M1215.7 23V29" stroke="#555" stroke-width="1.2"/><path d="M1221.9 19V29" stroke="#555" stroke-width="1.2"/><path d="M1228.2 23V29" stroke="#555" stroke-width="1.2"/><path d="M1234.4 23V29" stroke="#555" stroke-width="1.2"/><path d="M1240.6 23V29" stroke="#555" stroke-width="1.2"/><path d="M1246.8 23V29" stroke="#555" stroke-width="1.2"/><path d="M1253.1 0V29" stroke="#555" stroke-width="1.3"/><text x="1257.1" y="18" font-family="Liberation Mono" font-size="16" letter-spacing="2.3" fill="#5a5a5a">960</text><path d="M1259.3 23V29" stroke="#555" stroke-width="1.2"/><path d="M1265.5 23V29" stroke="#555" stroke-width="1.2"/><path d="M1271.8 23V29" stroke="#555" stroke-width="1.2"/><path d="M1278.0 23V29" stroke="#555" stroke-width="1.2"/><path d="M1284.2 19V29" stroke="#555" stroke-width="1.2"/><path d="M1290.5 23V29" stroke="#555" stroke-width="1.2"/><path d="M1296.7 23V29" stroke="#555" stroke-width="1.2"/><path d="M1302.9 23V29" stroke="#555" stroke-width="1.2"/><path d="M1309.2 23V29" stroke="#555" stroke-width="1.2"/><path d="M1315.4 0V29" stroke="#555" stroke-width="1.3"/><text x="1319.4" y="18" font-family="Liberation Mono" font-size="16" letter-spacing="2.3" fill="#5a5a5a">1000</text><path d="M1321.6 23V29" stroke="#555" stroke-width="1.2"/><path d="M1327.9 23V29" stroke="#555" stroke-width="1.2"/><path d="M1334.1 23V29" stroke="#555" stroke-width="1.2"/><path d="M1340.3 23V29" stroke="#555" stroke-width="1.2"/><path d="M1346.6 19V29" stroke="#555" stroke-width="1.2"/><path d="M1352.8 23V29" stroke="#555" stroke-width="1.2"/><path d="M1359.0 23V29" stroke="#555" stroke-width="1.2"/><path d="M1365.3 23V29" stroke="#555" stroke-width="1.2"/><path d="M1371.5 23V29" stroke="#555" stroke-width="1.2"/><path d="M1377.7 0V29" stroke="#555" stroke-width="1.3"/><text x="1381.7" y="18" font-family="Liberation Mono" font-size="16" letter-spacing="2.3" fill="#5a5a5a">1040</text><path d="M1384.0 23V29" stroke="#555" stroke-width="1.2"/><path d="M1390.2 23V29" stroke="#555" stroke-width="1.2"/><path d="M1396.4 23V29" stroke="#555" stroke-width="1.2"/><path d="M1402.6 23V29" stroke="#555" stroke-width="1.2"/><path d="M1408.9 19V29" stroke="#555" stroke-width="1.2"/><path d="M1415.1 23V29" stroke="#555" stroke-width="1.2"/><path d="M1421.3 23V29" stroke="#555" stroke-width="1.2"/><path d="M1427.6 23V29" stroke="#555" stroke-width="1.2"/><path d="M1433.8 23V29" stroke="#555" stroke-width="1.2"/><path d="M1440.0 0V29" stroke="#555" stroke-width="1.3"/><text x="1444.0" y="18" font-family="Liberation Mono" font-size="16" letter-spacing="2.3" fill="#5a5a5a">1080</text><path d="M1446.3 23V29" stroke="#555" stroke-width="1.2"/><path d="M1452.5 23V29" stroke="#555" stroke-width="1.2"/><path d="M1458.7 23V29" stroke="#555" stroke-width="1.2"/><path d="M1465.0 23V29" stroke="#555" stroke-width="1.2"/><path d="M1471.2 19V29" stroke="#555" stroke-width="1.2"/><path d="M1477.4 23V29" stroke="#555" stroke-width="1.2"/><path d="M1483.7 23V29" stroke="#555" stroke-width="1.2"/><path d="M1489.9 23V29" stroke="#555" stroke-width="1.2"/><path d="M1496.1 23V29" stroke="#555" stroke-width="1.2"/><path d="M1502.4 0V29" stroke="#555" stroke-width="1.3"/><text x="1506.4" y="18" font-family="Liberation Mono" font-size="16" letter-spacing="2.3" fill="#5a5a5a">1120</text><path d="M1508.6 23V29" stroke="#555" stroke-width="1.2"/><path d="M1514.8 23V29" stroke="#555" stroke-width="1.2"/><path d="M1521.1 23V29" stroke="#555" stroke-width="1.2"/><path d="M1527.3 23V29" stroke="#555" stroke-width="1.2"/><path d="M1533.5 19V29" stroke="#555" stroke-width="1.2"/><path d="M1539.8 23V29" stroke="#555" stroke-width="1.2"/><path d="M1546.0 23V29" stroke="#555" stroke-width="1.2"/><path d="M1552.2 23V29" stroke="#555" stroke-width="1.2"/><path d="M1558.4 23V29" stroke="#555" stroke-width="1.2"/><path d="M1564.7 0V29" stroke="#555" stroke-width="1.3"/><text x="1568.7" y="18" font-family="Liberation Mono" font-size="16" letter-spacing="2.3" fill="#5a5a5a">1160</text><path d="M1570.9 23V29" stroke="#555" stroke-width="1.2"/><path d="M1577.1 23V29" stroke="#555" stroke-width="1.2"/><path d="M1583.4 23V29" stroke="#555" stroke-width="1.2"/><path d="M1589.6 23V29" stroke="#555" stroke-width="1.2"/><path d="M1595.8 19V29" stroke="#555" stroke-width="1.2"/><path d="M1602.1 23V29" stroke="#555" stroke-width="1.2"/><path d="M1608.3 23V29" stroke="#555" stroke-width="1.2"/><path d="M1614.5 23V29" stroke="#555" stroke-width="1.2"/><path d="M1620.8 23V29" stroke="#555" stroke-width="1.2"/><path d="M1627.0 0V29" stroke="#555" stroke-width="1.3"/><text x="1631.0" y="18" font-family="Liberation Mono" font-size="16" letter-spacing="2.3" fill="#5a5a5a">1200</text><path d="M1633.2 23V29" stroke="#555" stroke-width="1.2"/></svg>
<svg class="a" style="left:431px;top:229px;" width="28" height="1715" viewBox="0 0 28 1715"><path d="M23 1.4H28" stroke="#555" stroke-width="1.2"/><path d="M23 7.7H28" stroke="#555" stroke-width="1.2"/><path d="M23 13.9H28" stroke="#555" stroke-width="1.2"/><path d="M19 20.1H28" stroke="#555" stroke-width="1.2"/><path d="M23 26.4H28" stroke="#555" stroke-width="1.2"/><path d="M23 32.6H28" stroke="#555" stroke-width="1.2"/><path d="M23 38.8H28" stroke="#555" stroke-width="1.2"/><path d="M23 45.1H28" stroke="#555" stroke-width="1.2"/><path d="M0 51.3H28" stroke="#555" stroke-width="1.3"/><text transform="translate(18,54.3) rotate(-90)" text-anchor="end" font-family="Liberation Mono" font-size="16" letter-spacing="2.3" fill="#5a5a5a">40</text><path d="M23 57.5H28" stroke="#555" stroke-width="1.2"/><path d="M23 63.8H28" stroke="#555" stroke-width="1.2"/><path d="M23 70.0H28" stroke="#555" stroke-width="1.2"/><path d="M23 76.2H28" stroke="#555" stroke-width="1.2"/><path d="M19 82.5H28" stroke="#555" stroke-width="1.2"/><path d="M23 88.7H28" stroke="#555" stroke-width="1.2"/><path d="M23 94.9H28" stroke="#555" stroke-width="1.2"/><path d="M23 101.2H28" stroke="#555" stroke-width="1.2"/><path d="M23 107.4H28" stroke="#555" stroke-width="1.2"/><path d="M0 113.6H28" stroke="#555" stroke-width="1.3"/><text transform="translate(18,116.6) rotate(-90)" text-anchor="end" font-family="Liberation Mono" font-size="16" letter-spacing="2.3" fill="#5a5a5a">80</text><path d="M23 119.9H28" stroke="#555" stroke-width="1.2"/><path d="M23 126.1H28" stroke="#555" stroke-width="1.2"/><path d="M23 132.3H28" stroke="#555" stroke-width="1.2"/><path d="M23 138.5H28" stroke="#555" stroke-width="1.2"/><path d="M19 144.8H28" stroke="#555" stroke-width="1.2"/><path d="M23 151.0H28" stroke="#555" stroke-width="1.2"/><path d="M23 157.2H28" stroke="#555" stroke-width="1.2"/><path d="M23 163.5H28" stroke="#555" stroke-width="1.2"/><path d="M23 169.7H28" stroke="#555" stroke-width="1.2"/><path d="M0 175.9H28" stroke="#555" stroke-width="1.3"/><text transform="translate(18,178.9) rotate(-90)" text-anchor="end" font-family="Liberation Mono" font-size="16" letter-spacing="2.3" fill="#5a5a5a">120</text><path d="M23 182.2H28" stroke="#555" stroke-width="1.2"/><path d="M23 188.4H28" stroke="#555" stroke-width="1.2"/><path d="M23 194.6H28" stroke="#555" stroke-width="1.2"/><path d="M23 200.9H28" stroke="#555" stroke-width="1.2"/><path d="M19 207.1H28" stroke="#555" stroke-width="1.2"/><path d="M23 213.3H28" stroke="#555" stroke-width="1.2"/><path d="M23 219.6H28" stroke="#555" stroke-width="1.2"/><path d="M23 225.8H28" stroke="#555" stroke-width="1.2"/><path d="M23 232.0H28" stroke="#555" stroke-width="1.2"/><path d="M0 238.3H28" stroke="#555" stroke-width="1.3"/><text transform="translate(18,241.3) rotate(-90)" text-anchor="end" font-family="Liberation Mono" font-size="16" letter-spacing="2.3" fill="#5a5a5a">160</text><path d="M23 244.5H28" stroke="#555" stroke-width="1.2"/><path d="M23 250.7H28" stroke="#555" stroke-width="1.2"/><path d="M23 257.0H28" stroke="#555" stroke-width="1.2"/><path d="M23 263.2H28" stroke="#555" stroke-width="1.2"/><path d="M19 269.4H28" stroke="#555" stroke-width="1.2"/><path d="M23 275.7H28" stroke="#555" stroke-width="1.2"/><path d="M23 281.9H28" stroke="#555" stroke-width="1.2"/><path d="M23 288.1H28" stroke="#555" stroke-width="1.2"/><path d="M23 294.3H28" stroke="#555" stroke-width="1.2"/><path d="M0 300.6H28" stroke="#555" stroke-width="1.3"/><text transform="translate(18,303.6) rotate(-90)" text-anchor="end" font-family="Liberation Mono" font-size="16" letter-spacing="2.3" fill="#5a5a5a">200</text><path d="M23 306.8H28" stroke="#555" stroke-width="1.2"/><path d="M23 313.0H28" stroke="#555" stroke-width="1.2"/><path d="M23 319.3H28" stroke="#555" stroke-width="1.2"/><path d="M23 325.5H28" stroke="#555" stroke-width="1.2"/><path d="M19 331.7H28" stroke="#555" stroke-width="1.2"/><path d="M23 338.0H28" stroke="#555" stroke-width="1.2"/><path d="M23 344.2H28" stroke="#555" stroke-width="1.2"/><path d="M23 350.4H28" stroke="#555" stroke-width="1.2"/><path d="M23 356.7H28" stroke="#555" stroke-width="1.2"/><path d="M0 362.9H28" stroke="#555" stroke-width="1.3"/><text transform="translate(18,365.9) rotate(-90)" text-anchor="end" font-family="Liberation Mono" font-size="16" letter-spacing="2.3" fill="#5a5a5a">240</text><path d="M23 369.1H28" stroke="#555" stroke-width="1.2"/><path d="M23 375.4H28" stroke="#555" stroke-width="1.2"/><path d="M23 381.6H28" stroke="#555" stroke-width="1.2"/><path d="M23 387.8H28" stroke="#555" stroke-width="1.2"/><path d="M19 394.1H28" stroke="#555" stroke-width="1.2"/><path d="M23 400.3H28" stroke="#555" stroke-width="1.2"/><path d="M23 406.5H28" stroke="#555" stroke-width="1.2"/><path d="M23 412.8H28" stroke="#555" stroke-width="1.2"/><path d="M23 419.0H28" stroke="#555" stroke-width="1.2"/><path d="M0 425.2H28" stroke="#555" stroke-width="1.3"/><text transform="translate(18,428.2) rotate(-90)" text-anchor="end" font-family="Liberation Mono" font-size="16" letter-spacing="2.3" fill="#5a5a5a">280</text><path d="M23 431.5H28" stroke="#555" stroke-width="1.2"/><path d="M23 437.7H28" stroke="#555" stroke-width="1.2"/><path d="M23 443.9H28" stroke="#555" stroke-width="1.2"/><path d="M23 450.1H28" stroke="#555" stroke-width="1.2"/><path d="M19 456.4H28" stroke="#555" stroke-width="1.2"/><path d="M23 462.6H28" stroke="#555" stroke-width="1.2"/><path d="M23 468.8H28" stroke="#555" stroke-width="1.2"/><path d="M23 475.1H28" stroke="#555" stroke-width="1.2"/><path d="M23 481.3H28" stroke="#555" stroke-width="1.2"/><path d="M0 487.5H28" stroke="#555" stroke-width="1.3"/><text transform="translate(18,490.5) rotate(-90)" text-anchor="end" font-family="Liberation Mono" font-size="16" letter-spacing="2.3" fill="#5a5a5a">320</text><path d="M23 493.8H28" stroke="#555" stroke-width="1.2"/><path d="M23 500.0H28" stroke="#555" stroke-width="1.2"/><path d="M23 506.2H28" stroke="#555" stroke-width="1.2"/><path d="M23 512.5H28" stroke="#555" stroke-width="1.2"/><path d="M19 518.7H28" stroke="#555" stroke-width="1.2"/><path d="M23 524.9H28" stroke="#555" stroke-width="1.2"/><path d="M23 531.2H28" stroke="#555" stroke-width="1.2"/><path d="M23 537.4H28" stroke="#555" stroke-width="1.2"/><path d="M23 543.6H28" stroke="#555" stroke-width="1.2"/><path d="M0 549.9H28" stroke="#555" stroke-width="1.3"/><text transform="translate(18,552.9) rotate(-90)" text-anchor="end" font-family="Liberation Mono" font-size="16" letter-spacing="2.3" fill="#5a5a5a">360</text><path d="M23 556.1H28" stroke="#555" stroke-width="1.2"/><path d="M23 562.3H28" stroke="#555" stroke-width="1.2"/><path d="M23 568.6H28" stroke="#555" stroke-width="1.2"/><path d="M23 574.8H28" stroke="#555" stroke-width="1.2"/><path d="M19 581.0H28" stroke="#555" stroke-width="1.2"/><path d="M23 587.3H28" stroke="#555" stroke-width="1.2"/><path d="M23 593.5H28" stroke="#555" stroke-width="1.2"/><path d="M23 599.7H28" stroke="#555" stroke-width="1.2"/><path d="M23 605.9H28" stroke="#555" stroke-width="1.2"/><path d="M0 612.2H28" stroke="#555" stroke-width="1.3"/><text transform="translate(18,615.2) rotate(-90)" text-anchor="end" font-family="Liberation Mono" font-size="16" letter-spacing="2.3" fill="#5a5a5a">400</text><path d="M23 618.4H28" stroke="#555" stroke-width="1.2"/><path d="M23 624.6H28" stroke="#555" stroke-width="1.2"/><path d="M23 630.9H28" stroke="#555" stroke-width="1.2"/><path d="M23 637.1H28" stroke="#555" stroke-width="1.2"/><path d="M19 643.3H28" stroke="#555" stroke-width="1.2"/><path d="M23 649.6H28" stroke="#555" stroke-width="1.2"/><path d="M23 655.8H28" stroke="#555" stroke-width="1.2"/><path d="M23 662.0H28" stroke="#555" stroke-width="1.2"/><path d="M23 668.3H28" stroke="#555" stroke-width="1.2"/><path d="M0 674.5H28" stroke="#555" stroke-width="1.3"/><text transform="translate(18,677.5) rotate(-90)" text-anchor="end" font-family="Liberation Mono" font-size="16" letter-spacing="2.3" fill="#5a5a5a">440</text><path d="M23 680.7H28" stroke="#555" stroke-width="1.2"/><path d="M23 687.0H28" stroke="#555" stroke-width="1.2"/><path d="M23 693.2H28" stroke="#555" stroke-width="1.2"/><path d="M23 699.4H28" stroke="#555" stroke-width="1.2"/><path d="M19 705.7H28" stroke="#555" stroke-width="1.2"/><path d="M23 711.9H28" stroke="#555" stroke-width="1.2"/><path d="M23 718.1H28" stroke="#555" stroke-width="1.2"/><path d="M23 724.4H28" stroke="#555" stroke-width="1.2"/><path d="M23 730.6H28" stroke="#555" stroke-width="1.2"/><path d="M0 736.8H28" stroke="#555" stroke-width="1.3"/><text transform="translate(18,739.8) rotate(-90)" text-anchor="end" font-family="Liberation Mono" font-size="16" letter-spacing="2.3" fill="#5a5a5a">480</text><path d="M23 743.1H28" stroke="#555" stroke-width="1.2"/><path d="M23 749.3H28" stroke="#555" stroke-width="1.2"/><path d="M23 755.5H28" stroke="#555" stroke-width="1.2"/><path d="M23 761.7H28" stroke="#555" stroke-width="1.2"/><path d="M19 768.0H28" stroke="#555" stroke-width="1.2"/><path d="M23 774.2H28" stroke="#555" stroke-width="1.2"/><path d="M23 780.4H28" stroke="#555" stroke-width="1.2"/><path d="M23 786.7H28" stroke="#555" stroke-width="1.2"/><path d="M23 792.9H28" stroke="#555" stroke-width="1.2"/><path d="M0 799.1H28" stroke="#555" stroke-width="1.3"/><text transform="translate(18,802.1) rotate(-90)" text-anchor="end" font-family="Liberation Mono" font-size="16" letter-spacing="2.3" fill="#5a5a5a">520</text><path d="M23 805.4H28" stroke="#555" stroke-width="1.2"/><path d="M23 811.6H28" stroke="#555" stroke-width="1.2"/><path d="M23 817.8H28" stroke="#555" stroke-width="1.2"/><path d="M23 824.1H28" stroke="#555" stroke-width="1.2"/><path d="M19 830.3H28" stroke="#555" stroke-width="1.2"/><path d="M23 836.5H28" stroke="#555" stroke-width="1.2"/><path d="M23 842.8H28" stroke="#555" stroke-width="1.2"/><path d="M23 849.0H28" stroke="#555" stroke-width="1.2"/><path d="M23 855.2H28" stroke="#555" stroke-width="1.2"/><path d="M0 861.5H28" stroke="#555" stroke-width="1.3"/><text transform="translate(18,864.5) rotate(-90)" text-anchor="end" font-family="Liberation Mono" font-size="16" letter-spacing="2.3" fill="#5a5a5a">560</text><path d="M23 867.7H28" stroke="#555" stroke-width="1.2"/><path d="M23 873.9H28" stroke="#555" stroke-width="1.2"/><path d="M23 880.2H28" stroke="#555" stroke-width="1.2"/><path d="M23 886.4H28" stroke="#555" stroke-width="1.2"/><path d="M19 892.6H28" stroke="#555" stroke-width="1.2"/><path d="M23 898.9H28" stroke="#555" stroke-width="1.2"/><path d="M23 905.1H28" stroke="#555" stroke-width="1.2"/><path d="M23 911.3H28" stroke="#555" stroke-width="1.2"/><path d="M23 917.5H28" stroke="#555" stroke-width="1.2"/><path d="M0 923.8H28" stroke="#555" stroke-width="1.3"/><text transform="translate(18,926.8) rotate(-90)" text-anchor="end" font-family="Liberation Mono" font-size="16" letter-spacing="2.3" fill="#5a5a5a">600</text><path d="M23 930.0H28" stroke="#555" stroke-width="1.2"/><path d="M23 936.2H28" stroke="#555" stroke-width="1.2"/><path d="M23 942.5H28" stroke="#555" stroke-width="1.2"/><path d="M23 948.7H28" stroke="#555" stroke-width="1.2"/><path d="M19 954.9H28" stroke="#555" stroke-width="1.2"/><path d="M23 961.2H28" stroke="#555" stroke-width="1.2"/><path d="M23 967.4H28" stroke="#555" stroke-width="1.2"/><path d="M23 973.6H28" stroke="#555" stroke-width="1.2"/><path d="M23 979.9H28" stroke="#555" stroke-width="1.2"/><path d="M0 986.1H28" stroke="#555" stroke-width="1.3"/><text transform="translate(18,989.1) rotate(-90)" text-anchor="end" font-family="Liberation Mono" font-size="16" letter-spacing="2.3" fill="#5a5a5a">640</text><path d="M23 992.3H28" stroke="#555" stroke-width="1.2"/><path d="M23 998.6H28" stroke="#555" stroke-width="1.2"/><path d="M23 1004.8H28" stroke="#555" stroke-width="1.2"/><path d="M23 1011.0H28" stroke="#555" stroke-width="1.2"/><path d="M19 1017.3H28" stroke="#555" stroke-width="1.2"/><path d="M23 1023.5H28" stroke="#555" stroke-width="1.2"/><path d="M23 1029.7H28" stroke="#555" stroke-width="1.2"/><path d="M23 1036.0H28" stroke="#555" stroke-width="1.2"/><path d="M23 1042.2H28" stroke="#555" stroke-width="1.2"/><path d="M0 1048.4H28" stroke="#555" stroke-width="1.3"/><text transform="translate(18,1051.4) rotate(-90)" text-anchor="end" font-family="Liberation Mono" font-size="16" letter-spacing="2.3" fill="#5a5a5a">680</text><path d="M23 1054.7H28" stroke="#555" stroke-width="1.2"/><path d="M23 1060.9H28" stroke="#555" stroke-width="1.2"/><path d="M23 1067.1H28" stroke="#555" stroke-width="1.2"/><path d="M23 1073.3H28" stroke="#555" stroke-width="1.2"/><path d="M19 1079.6H28" stroke="#555" stroke-width="1.2"/><path d="M23 1085.8H28" stroke="#555" stroke-width="1.2"/><path d="M23 1092.0H28" stroke="#555" stroke-width="1.2"/><path d="M23 1098.3H28" stroke="#555" stroke-width="1.2"/><path d="M23 1104.5H28" stroke="#555" stroke-width="1.2"/><path d="M0 1110.7H28" stroke="#555" stroke-width="1.3"/><text transform="translate(18,1113.7) rotate(-90)" text-anchor="end" font-family="Liberation Mono" font-size="16" letter-spacing="2.3" fill="#5a5a5a">720</text><path d="M23 1117.0H28" stroke="#555" stroke-width="1.2"/><path d="M23 1123.2H28" stroke="#555" stroke-width="1.2"/><path d="M23 1129.4H28" stroke="#555" stroke-width="1.2"/><path d="M23 1135.7H28" stroke="#555" stroke-width="1.2"/><path d="M19 1141.9H28" stroke="#555" stroke-width="1.2"/><path d="M23 1148.1H28" stroke="#555" stroke-width="1.2"/><path d="M23 1154.4H28" stroke="#555" stroke-width="1.2"/><path d="M23 1160.6H28" stroke="#555" stroke-width="1.2"/><path d="M23 1166.8H28" stroke="#555" stroke-width="1.2"/><path d="M0 1173.1H28" stroke="#555" stroke-width="1.3"/><text transform="translate(18,1176.1) rotate(-90)" text-anchor="end" font-family="Liberation Mono" font-size="16" letter-spacing="2.3" fill="#5a5a5a">760</text><path d="M23 1179.3H28" stroke="#555" stroke-width="1.2"/><path d="M23 1185.5H28" stroke="#555" stroke-width="1.2"/><path d="M23 1191.8H28" stroke="#555" stroke-width="1.2"/><path d="M23 1198.0H28" stroke="#555" stroke-width="1.2"/><path d="M19 1204.2H28" stroke="#555" stroke-width="1.2"/><path d="M23 1210.5H28" stroke="#555" stroke-width="1.2"/><path d="M23 1216.7H28" stroke="#555" stroke-width="1.2"/><path d="M23 1222.9H28" stroke="#555" stroke-width="1.2"/><path d="M23 1229.1H28" stroke="#555" stroke-width="1.2"/><path d="M0 1235.4H28" stroke="#555" stroke-width="1.3"/><text transform="translate(18,1238.4) rotate(-90)" text-anchor="end" font-family="Liberation Mono" font-size="16" letter-spacing="2.3" fill="#5a5a5a">800</text><path d="M23 1241.6H28" stroke="#555" stroke-width="1.2"/><path d="M23 1247.8H28" stroke="#555" stroke-width="1.2"/><path d="M23 1254.1H28" stroke="#555" stroke-width="1.2"/><path d="M23 1260.3H28" stroke="#555" stroke-width="1.2"/><path d="M19 1266.5H28" stroke="#555" stroke-width="1.2"/><path d="M23 1272.8H28" stroke="#555" stroke-width="1.2"/><path d="M23 1279.0H28" stroke="#555" stroke-width="1.2"/><path d="M23 1285.2H28" stroke="#555" stroke-width="1.2"/><path d="M23 1291.5H28" stroke="#555" stroke-width="1.2"/><path d="M0 1297.7H28" stroke="#555" stroke-width="1.3"/><text transform="translate(18,1300.7) rotate(-90)" text-anchor="end" font-family="Liberation Mono" font-size="16" letter-spacing="2.3" fill="#5a5a5a">840</text><path d="M23 1303.9H28" stroke="#555" stroke-width="1.2"/><path d="M23 1310.2H28" stroke="#555" stroke-width="1.2"/><path d="M23 1316.4H28" stroke="#555" stroke-width="1.2"/><path d="M23 1322.6H28" stroke="#555" stroke-width="1.2"/><path d="M19 1328.9H28" stroke="#555" stroke-width="1.2"/><path d="M23 1335.1H28" stroke="#555" stroke-width="1.2"/><path d="M23 1341.3H28" stroke="#555" stroke-width="1.2"/><path d="M23 1347.6H28" stroke="#555" stroke-width="1.2"/><path d="M23 1353.8H28" stroke="#555" stroke-width="1.2"/><path d="M0 1360.0H28" stroke="#555" stroke-width="1.3"/><text transform="translate(18,1363.0) rotate(-90)" text-anchor="end" font-family="Liberation Mono" font-size="16" letter-spacing="2.3" fill="#5a5a5a">880</text><path d="M23 1366.3H28" stroke="#555" stroke-width="1.2"/><path d="M23 1372.5H28" stroke="#555" stroke-width="1.2"/><path d="M23 1378.7H28" stroke="#555" stroke-width="1.2"/><path d="M23 1384.9H28" stroke="#555" stroke-width="1.2"/><path d="M19 1391.2H28" stroke="#555" stroke-width="1.2"/><path d="M23 1397.4H28" stroke="#555" stroke-width="1.2"/><path d="M23 1403.6H28" stroke="#555" stroke-width="1.2"/><path d="M23 1409.9H28" stroke="#555" stroke-width="1.2"/><path d="M23 1416.1H28" stroke="#555" stroke-width="1.2"/><path d="M0 1422.3H28" stroke="#555" stroke-width="1.3"/><text transform="translate(18,1425.3) rotate(-90)" text-anchor="end" font-family="Liberation Mono" font-size="16" letter-spacing="2.3" fill="#5a5a5a">920</text><path d="M23 1428.6H28" stroke="#555" stroke-width="1.2"/><path d="M23 1434.8H28" stroke="#555" stroke-width="1.2"/><path d="M23 1441.0H28" stroke="#555" stroke-width="1.2"/><path d="M23 1447.3H28" stroke="#555" stroke-width="1.2"/><path d="M19 1453.5H28" stroke="#555" stroke-width="1.2"/><path d="M23 1459.7H28" stroke="#555" stroke-width="1.2"/><path d="M23 1466.0H28" stroke="#555" stroke-width="1.2"/><path d="M23 1472.2H28" stroke="#555" stroke-width="1.2"/><path d="M23 1478.4H28" stroke="#555" stroke-width="1.2"/><path d="M0 1484.7H28" stroke="#555" stroke-width="1.3"/><text transform="translate(18,1487.7) rotate(-90)" text-anchor="end" font-family="Liberation Mono" font-size="16" letter-spacing="2.3" fill="#5a5a5a">960</text><path d="M23 1490.9H28" stroke="#555" stroke-width="1.2"/><path d="M23 1497.1H28" stroke="#555" stroke-width="1.2"/><path d="M23 1503.4H28" stroke="#555" stroke-width="1.2"/><path d="M23 1509.6H28" stroke="#555" stroke-width="1.2"/><path d="M19 1515.8H28" stroke="#555" stroke-width="1.2"/><path d="M23 1522.1H28" stroke="#555" stroke-width="1.2"/><path d="M23 1528.3H28" stroke="#555" stroke-width="1.2"/><path d="M23 1534.5H28" stroke="#555" stroke-width="1.2"/><path d="M23 1540.7H28" stroke="#555" stroke-width="1.2"/><path d="M0 1547.0H28" stroke="#555" stroke-width="1.3"/><text transform="translate(18,1550.0) rotate(-90)" text-anchor="end" font-family="Liberation Mono" font-size="16" letter-spacing="2.3" fill="#5a5a5a">1000</text><path d="M23 1553.2H28" stroke="#555" stroke-width="1.2"/><path d="M23 1559.4H28" stroke="#555" stroke-width="1.2"/><path d="M23 1565.7H28" stroke="#555" stroke-width="1.2"/><path d="M23 1571.9H28" stroke="#555" stroke-width="1.2"/><path d="M19 1578.1H28" stroke="#555" stroke-width="1.2"/><path d="M23 1584.4H28" stroke="#555" stroke-width="1.2"/><path d="M23 1590.6H28" stroke="#555" stroke-width="1.2"/><path d="M23 1596.8H28" stroke="#555" stroke-width="1.2"/><path d="M23 1603.1H28" stroke="#555" stroke-width="1.2"/><path d="M0 1609.3H28" stroke="#555" stroke-width="1.3"/><text transform="translate(18,1612.3) rotate(-90)" text-anchor="end" font-family="Liberation Mono" font-size="16" letter-spacing="2.3" fill="#5a5a5a">1040</text><path d="M23 1615.5H28" stroke="#555" stroke-width="1.2"/><path d="M23 1621.8H28" stroke="#555" stroke-width="1.2"/><path d="M23 1628.0H28" stroke="#555" stroke-width="1.2"/><path d="M23 1634.2H28" stroke="#555" stroke-width="1.2"/><path d="M19 1640.5H28" stroke="#555" stroke-width="1.2"/><path d="M23 1646.7H28" stroke="#555" stroke-width="1.2"/><path d="M23 1652.9H28" stroke="#555" stroke-width="1.2"/><path d="M23 1659.2H28" stroke="#555" stroke-width="1.2"/><path d="M23 1665.4H28" stroke="#555" stroke-width="1.2"/><path d="M0 1671.6H28" stroke="#555" stroke-width="1.3"/><text transform="translate(18,1674.6) rotate(-90)" text-anchor="end" font-family="Liberation Mono" font-size="16" letter-spacing="2.3" fill="#5a5a5a">1080</text><path d="M23 1677.9H28" stroke="#555" stroke-width="1.2"/><path d="M23 1684.1H28" stroke="#555" stroke-width="1.2"/><path d="M23 1690.3H28" stroke="#555" stroke-width="1.2"/><path d="M23 1696.5H28" stroke="#555" stroke-width="1.2"/><path d="M19 1702.8H28" stroke="#555" stroke-width="1.2"/><path d="M23 1709.0H28" stroke="#555" stroke-width="1.2"/></svg>
<div class="a" style="left:459px;top:229px;width:1638px;height:1715px;background:#fff"></div>
<div class="a" style="left:2097px;top:199px;width:25px;height:1745px;background:#68696c;border-left:1px solid #444;border-right:1px solid #555"></div>
<div class="a" style="left:2099px;top:660px;width:21px;height:605px;background:linear-gradient(90deg,#8a8b8e,#77787b);border:1px solid #555;border-radius:2px"></div>
<svg class="a" style="left:2102px;top:960px;" width="15" height="8" viewBox="0 0 15 8"><path d="M1 1H14M1 4H14M1 7H14" stroke="#444"/></svg>
<div class="a" style="left:430px;top:1944px;width:1692px;height:24px;background:#5a5b5e;border-top:1px solid #444"></div>
<div class="a" style="left:432px;top:1945px;width:92px;height:22px;background:linear-gradient(170deg,#8a8b8e 0%,#8a8b8e 50%,#3a3b3e 52%);border:1px solid #333"></div>
<div class="a" style="left:432px;top:1945px;width:92px;height:22px;background:linear-gradient(to top left,#3a3b3e 50%,transparent 50.5%);border:1px solid #333"></div>
<div class="t" style="left:436px;top:1946px;font-size:20px;color:#f0f0f0;">155.8</div>
<div class="a" style="left:531px;top:1945px;width:51px;height:22px;background:linear-gradient(to top left,#37383b 60%,#8a8b8e 61%);border:1px solid #333"></div>
<div class="a" style="left:584px;top:1945px;width:71px;height:22px;background:#8a8b8e;border:1px solid #333"></div>
<svg class="a" style="left:584px;top:1945px;" width="71" height="22" viewBox="0 0 71 22"><path d="M0 22C20 22 40 22 70 2V22Z" fill="#37383b"/></svg>
<div class="t" style="left:592px;top:1946px;font-size:20px;color:#f0f0f0;">0.0</div>
<div class="a" style="left:662px;top:1945px;width:72px;height:22px;background:#8a8b8e;border:1px solid #333"></div>
<svg class="a" style="left:662px;top:1945px;" width="72" height="22" viewBox="0 0 72 22"><path d="M0 22C10 0 40 -8 72 22Z" fill="#37383b"/></svg>
<div class="a" style="left:736px;top:1945px;width:1361px;height:22px;background:#6a6b6e;border:1px solid #444"></div>
<div class="a" style="left:1153px;top:1945px;width:463px;height:22px;background:linear-gradient(#8a8b8e,#707174);border:1px solid #555;border-radius:2px"></div>
<svg class="a" style="left:1378px;top:1948px;" width="6" height="16" viewBox="0 0 6 16"><path d="M1 0V16M4 0V16" stroke="#333" stroke-width="1"/></svg>
<div class="a" style="left:2097px;top:1944px;width:25px;height:24px;background:#6a6b6e;border:1px solid #555"></div>
<div class="a" style="left:430px;top:1968px;width:1692px;height:29px;background:#5a5a5a"></div>
<div class="a" style="left:432px;top:1969px;width:38px;height:28px;background:#6a6b6e"></div>
<svg class="a" style="left:436px;top:1972px;" width="30" height="22" viewBox="0 0 30 22"><path d="M15 1L28 10H22L15 5L8 10H2Z" fill="#999"/><path d="M15 11L28 20H22L15 15L8 20H2Z" fill="#999"/></svg>
<svg class="a" style="left:459px;top:229px" width="1638" height="1715" viewBox="459 229 1638 1715"><g transform="translate(700,330) scale(0.30612)"><path d="M 150 1300 C 150 800, 600 380, 1200 370 C 1800 380, 2200 700, 2250 1400" fill="none" stroke="#ecf0f6" stroke-width="7.19" stroke-linecap="round" stroke-linejoin="round" opacity="1"/><path d="M 100 1400 C 120 850, 500 420, 1150 400 C 1750 400, 2150 650, 2260 1300" fill="none" stroke="#ecf0f6" stroke-width="7.19" stroke-linecap="round" stroke-linejoin="round" opacity="1"/><path d="M 560 1568 L 540 1000" fill="none" stroke="#ecf0f6" stroke-width="7.19" stroke-linecap="round" stroke-linejoin="round" opacity="1"/><path d="M 1600 1568 C 1620 1300, 1600 1000, 1500 800" fill="none" stroke="#ecf0f6" stroke-width="7.19" stroke-linecap="round" stroke-linejoin="round" opacity="1"/><path d="M 1700 1568 C 1720 1300, 1720 1000, 1640 820" fill="none" stroke="#ecf0f6" stroke-width="7.19" stroke-linecap="round" stroke-linejoin="round" opacity="1"/><path d="M949.8 512.0 L969.1 514.6 L994.7 517.3 L1025.1 520.4 L1058.9 524.2 L1094.5 529.1 L1130.4 535.3 L1165.2 543.3 L1197.2 553.4 L1228.3 565.8 L1260.3 580.3 L1292.7 596.5 L1324.9 614.1 L1356.4 632.7 L1386.6 652.0 L1415.1 671.6 L1441.3 691.3 L1465.2 711.0 L1487.3 731.2 L1508.0 751.9 L1527.4 773.3 L1545.9 795.4 L1563.7 818.5 L1581.0 842.5 L1598.0 867.7 L1614.6 893.9 L1630.6 921.2 L1645.9 949.5 L1660.6 978.8 L1674.5 1008.8 L1687.7 1039.6 L1700.0 1070.9 L1711.5 1102.6 L1722.2 1137.0 L1732.0 1175.2 L1741.1 1215.5 L1749.3 1255.9 L1756.6 1294.4 L1763.0 1329.3 L1768.6 1358.6 L1773.0 1380.3 L1777.0 1379.7 L1773.7 1357.7 L1769.8 1328.2 L1765.0 1293.1 L1759.5 1254.1 L1753.1 1213.2 L1745.8 1172.3 L1737.6 1133.0 L1728.5 1097.4 L1718.4 1064.5 L1707.4 1032.0 L1695.5 1000.0 L1682.6 968.7 L1668.7 938.2 L1654.0 908.5 L1638.4 879.8 L1622.0 852.3 L1605.0 826.1 L1587.6 801.0 L1569.3 776.8 L1550.1 753.6 L1529.6 731.2 L1507.7 709.7 L1484.1 688.8 L1458.7 668.7 L1431.0 649.0 L1401.0 629.5 L1369.3 610.7 L1336.4 592.8 L1302.8 576.1 L1268.9 561.0 L1235.5 547.7 L1202.8 536.6 L1168.9 527.9 L1132.9 521.5 L1096.0 517.0 L1059.9 513.9 L1025.8 511.9 L995.2 510.6 L969.5 509.4 L950.2 508.0Z" fill="#faf1d2" opacity="1"/><path d="M 1955 240 C 1800 280, 1600 360, 1480 520 C 1450 580, 1500 610, 1550 570" fill="none" stroke="#faf1d2" stroke-width="9.80" stroke-linecap="round" stroke-linejoin="round" opacity="1"/><path d="M 2030 240 C 2050 180, 2080 120, 2100 75" fill="none" stroke="#faf1d2" stroke-width="9.80" stroke-linecap="round" stroke-linejoin="round" opacity="1"/><path d="M 2000 105 C 2040 120, 2080 135, 2110 140" fill="none" stroke="#faf1d2" stroke-width="9.80" stroke-linecap="round" stroke-linejoin="round" opacity="1"/><path d="M 200 1500 C 250 1200, 350 1000, 600 960 C 900 920, 1200 1000, 1350 1250 C 1400 1350, 1410 1450, 1400 1568" fill="none" stroke="#fbd5d5" stroke-width="4.90" stroke-linecap="round" stroke-linejoin="round" opacity="0.6"/><path d="M 650 900 C 700 800, 760 700, 830 600" fill="none" stroke="#fbd5d5" stroke-width="4.90" stroke-linecap="round" stroke-linejoin="round" opacity="0.6"/><path d="M 130 1000 C 200 820, 420 650, 700 540 C 900 480, 1000 470, 1150 465 C 1500 470, 1800 640, 2000 850 C 2150 1050, 2210 1300, 2215 1568" fill="none" stroke="#1e4a8e" stroke-width="9.15" stroke-linecap="round" stroke-linejoin="round" opacity="1"/><path d="M 150 1100 C 230 900, 400 740, 650 600" fill="none" stroke="#1e4a8e" stroke-width="5.55" stroke-linecap="round" stroke-linejoin="round" opacity="0.92"/><path d="M 200 980 C 280 800, 450 660, 660 590" fill="none" stroke="#1e4a8e" stroke-width="5.55" stroke-linecap="round" stroke-linejoin="round" opacity="0.92"/><path d="M 180 900 C 250 800, 330 720, 360 700" fill="none" stroke="#1e4a8e" stroke-width="5.55" stroke-linecap="round" stroke-linejoin="round" opacity="0.92"/><path d="M 830 540 C 900 500, 1000 480, 1100 490" fill="none" stroke="#1e4a8e" stroke-width="5.55" stroke-linecap="round" stroke-linejoin="round" opacity="0.92"/><path d="M 950 510 C 1200 490, 1450 560, 1580 720" fill="none" stroke="#1e4a8e" stroke-width="5.55" stroke-linecap="round" stroke-linejoin="round" opacity="0.92"/><path d="M 545 1010 C 480 900, 430 780, 500 640" fill="none" stroke="#1e4a8e" stroke-width="5.55" stroke-linecap="round" stroke-linejoin="round" opacity="0.92"/><path d="M 520 1000 C 430 880, 420 760, 470 660" fill="none" stroke="#1e4a8e" stroke-width="5.55" stroke-linecap="round" stroke-linejoin="round" opacity="0.92"/><path d="M 590 1020 C 560 850, 640 700, 960 510" fill="none" stroke="#1e4a8e" stroke-width="5.55" stroke-linecap="round" stroke-linejoin="round" opacity="0.92"/><path d="M 600 1000 C 650 880, 730 780, 850 700" fill="none" stroke="#1e4a8e" stroke-width="5.55" stroke-linecap="round" stroke-linejoin="round" opacity="0.92"/><path d="M 620 990 C 680 900, 750 830, 830 775" fill="none" stroke="#1e4a8e" stroke-width="5.55" stroke-linecap="round" stroke-linejoin="round" opacity="0.92"/><path d="M 540 1000 C 520 900, 530 790, 565 715" fill="none" stroke="#1e4a8e" stroke-width="5.55" stroke-linecap="round" stroke-linejoin="round" opacity="0.92"/><path d="M 410 1030 C 350 980, 340 900, 370 820" fill="none" stroke="#1e4a8e" stroke-width="5.55" stroke-linecap="round" stroke-linejoin="round" opacity="0.92"/><path d="M 370 1050 C 320 1020, 290 980, 295 935" fill="none" stroke="#1e4a8e" stroke-width="5.55" stroke-linecap="round" stroke-linejoin="round" opacity="0.92"/><path d="M 320 1090 C 270 1060, 250 1030, 250 1020" fill="none" stroke="#1e4a8e" stroke-width="5.55" stroke-linecap="round" stroke-linejoin="round" opacity="0.92"/><path d="M 260 1280 C 180 1200, 150 1100, 175 1100" fill="none" stroke="#1e4a8e" stroke-width="5.55" stroke-linecap="round" stroke-linejoin="round" opacity="0.92"/><path d="M 250 1210 C 210 1190, 190 1150, 200 1120" fill="none" stroke="#1e4a8e" stroke-width="5.55" stroke-linecap="round" stroke-linejoin="round" opacity="0.92"/><path d="M 190 1390 C 140 1340, 110 1300, 110 1260" fill="none" stroke="#1e4a8e" stroke-width="5.55" stroke-linecap="round" stroke-linejoin="round" opacity="0.92"/><path d="M 230 1330 C 180 1320, 160 1300, 150 1320" fill="none" stroke="#1e4a8e" stroke-width="5.55" stroke-linecap="round" stroke-linejoin="round" opacity="0.92"/><path d="M 170 1470 C 140 1450, 120 1430, 125 1415" fill="none" stroke="#1e4a8e" stroke-width="5.55" stroke-linecap="round" stroke-linejoin="round" opacity="0.92"/><path d="M 175 1530 C 150 1510, 130 1490, 130 1480" fill="none" stroke="#1e4a8e" stroke-width="5.55" stroke-linecap="round" stroke-linejoin="round" opacity="0.92"/><path d="M 640 1010 C 760 930, 850 900, 930 870" fill="none" stroke="#1e4a8e" stroke-width="5.55" stroke-linecap="round" stroke-linejoin="round" opacity="0.92"/><path d="M 700 1000 C 850 920, 950 890, 1100 860" fill="none" stroke="#1e4a8e" stroke-width="5.55" stroke-linecap="round" stroke-linejoin="round" opacity="0.92"/><path d="M 920 970 C 1100 910, 1300 880, 1550 755" fill="none" stroke="#1e4a8e" stroke-width="5.55" stroke-linecap="round" stroke-linejoin="round" opacity="0.92"/><path d="M 870 790 C 950 760, 1020 730, 1120 705" fill="none" stroke="#1e4a8e" stroke-width="5.55" stroke-linecap="round" stroke-linejoin="round" opacity="0.92"/><path d="M 1010 810 C 1200 740, 1450 700, 1650 590" fill="none" stroke="#1e4a8e" stroke-width="5.55" stroke-linecap="round" stroke-linejoin="round" opacity="0.92"/><path d="M 1620 660 C 1650 650, 1670 640, 1690 625" fill="none" stroke="#1e4a8e" stroke-width="5.55" stroke-linecap="round" stroke-linejoin="round" opacity="0.92"/><path d="M 1100 980 C 1200 950, 1260 940, 1300 940" fill="none" stroke="#1e4a8e" stroke-width="5.55" stroke-linecap="round" stroke-linejoin="round" opacity="0.92"/><path d="M 1120 1005 C 1200 990, 1260 980, 1320 970" fill="none" stroke="#1e4a8e" stroke-width="5.55" stroke-linecap="round" stroke-linejoin="round" opacity="0.92"/><path d="M 1200 1025 C 1300 1010, 1400 990, 1470 980" fill="none" stroke="#1e4a8e" stroke-width="5.55" stroke-linecap="round" stroke-linejoin="round" opacity="0.92"/><path d="M 1500 985 C 1650 940, 1760 840, 1810 680" fill="none" stroke="#1e4a8e" stroke-width="5.55" stroke-linecap="round" stroke-linejoin="round" opacity="0.92"/><path d="M 1650 945 C 1750 870, 1820 780, 1840 660" fill="none" stroke="#1e4a8e" stroke-width="5.55" stroke-linecap="round" stroke-linejoin="round" opacity="0.92"/><path d="M 1245 1105 C 1400 1110, 1550 1070, 1680 1020" fill="none" stroke="#1e4a8e" stroke-width="5.55" stroke-linecap="round" stroke-linejoin="round" opacity="0.92"/><path d="M 1330 1150 C 1400 1140, 1500 1120, 1560 1090" fill="none" stroke="#1e4a8e" stroke-width="5.55" stroke-linecap="round" stroke-linejoin="round" opacity="0.92"/><path d="M 1320 1200 C 1600 1150, 1850 1000, 1970 830" fill="none" stroke="#1e4a8e" stroke-width="5.55" stroke-linecap="round" stroke-linejoin="round" opacity="0.92"/><path d="M 1870 1090 C 1920 1020, 1980 960, 2010 900" fill="none" stroke="#1e4a8e" stroke-width="5.55" stroke-linecap="round" stroke-linejoin="round" opacity="0.92"/><path d="M 1380 1280 C 1430 1270, 1500 1250, 1540 1225" fill="none" stroke="#1e4a8e" stroke-width="5.55" stroke-linecap="round" stroke-linejoin="round" opacity="0.92"/><path d="M 1390 1330 C 1450 1300, 1530 1270, 1590 1245" fill="none" stroke="#1e4a8e" stroke-width="5.55" stroke-linecap="round" stroke-linejoin="round" opacity="0.92"/><path d="M 1390 1390 C 1500 1340, 1620 1270, 1730 1200" fill="none" stroke="#1e4a8e" stroke-width="5.55" stroke-linecap="round" stroke-linejoin="round" opacity="0.92"/><path d="M 1390 1460 C 1420 1455, 1450 1455, 1470 1450" fill="none" stroke="#1e4a8e" stroke-width="5.55" stroke-linecap="round" stroke-linejoin="round" opacity="0.92"/><path d="M 1410 1500 C 1450 1490, 1510 1480, 1550 1470" fill="none" stroke="#1e4a8e" stroke-width="5.55" stroke-linecap="round" stroke-linejoin="round" opacity="0.92"/><path d="M 1440 1540 C 1650 1480, 1850 1350, 1940 1220" fill="none" stroke="#1e4a8e" stroke-width="5.55" stroke-linecap="round" stroke-linejoin="round" opacity="0.92"/><path d="M 1770 1568 C 1790 1480, 1780 1400, 1775 1340" fill="none" stroke="#1e4a8e" stroke-width="5.55" stroke-linecap="round" stroke-linejoin="round" opacity="0.92"/><path d="M 1850 1568 C 1950 1450, 2060 1250, 2080 1060" fill="none" stroke="#1e4a8e" stroke-width="5.55" stroke-linecap="round" stroke-linejoin="round" opacity="0.92"/><path d="M 1900 1568 C 1960 1500, 2010 1400, 2030 1300" fill="none" stroke="#1e4a8e" stroke-width="5.55" stroke-linecap="round" stroke-linejoin="round" opacity="0.92"/><path d="M 2120 1100 C 2170 1200, 2230 1350, 2260 1420" fill="none" stroke="#1e4a8e" stroke-width="5.55" stroke-linecap="round" stroke-linejoin="round" opacity="0.92"/><path d="M 370 1350 C 400 1390, 430 1420, 455 1440" fill="none" stroke="#1e4a8e" stroke-width="5.55" stroke-linecap="round" stroke-linejoin="round" opacity="0.92"/><path d="M 180 1540 C 200 1450, 230 1400, 265 1370 L 265 1330 C 270 1200, 320 1100, 420 1050 C 460 1035, 500 1030, 530 1040" fill="none" stroke="#ff1020" stroke-width="8.49" stroke-linecap="round" stroke-linejoin="round" opacity="1"/><path d="M 650 1060 C 800 1030, 920 1010, 1000 1030 C 1150 1070, 1300 1200, 1325 1380 L 1330 1440 C 1380 1460, 1420 1520, 1440 1568" fill="none" stroke="#ff1020" stroke-width="8.49" stroke-linecap="round" stroke-linejoin="round" opacity="1"/></g><g transform="translate(500,760) scale(0.30612)"><path d="M 900 500 C 1100 620, 1400 680, 1700 620 C 1900 580, 2100 480, 2200 400" fill="none" stroke="#ecf0f6" stroke-width="7.19" stroke-linecap="round" stroke-linejoin="round" opacity="0.8"/><path d="M 1190 0 C 1250 400, 1350 1000, 1450 1300" fill="none" stroke="#ecf0f6" stroke-width="7.19" stroke-linecap="round" stroke-linejoin="round" opacity="0.8"/><path d="M 750 100 C 780 600, 900 1000, 1150 1300" fill="none" stroke="#ecf0f6" stroke-width="7.19" stroke-linecap="round" stroke-linejoin="round" opacity="0.8"/><path d="M 1150 470 C 1500 460, 1900 440, 2150 420" fill="none" stroke="#ecf0f6" stroke-width="7.19" stroke-linecap="round" stroke-linejoin="round" opacity="0.8"/><path d="M 1250 1000 C 1350 1010, 1450 1030, 1500 1060" fill="none" stroke="#ecf0f6" stroke-width="7.19" stroke-linecap="round" stroke-linejoin="round" opacity="0.8"/><path d="M 1620 1400 C 1900 1200, 2100 1000, 2300 900" fill="none" stroke="#ecf0f6" stroke-width="7.19" stroke-linecap="round" stroke-linejoin="round" opacity="0.8"/><path d="M 2200 1200 C 2250 1350, 2280 1450, 2300 1568" fill="none" stroke="#ecf0f6" stroke-width="7.19" stroke-linecap="round" stroke-linejoin="round" opacity="0.8"/><path d="M 290 350 C 330 365, 360 370, 385 375 C 390 300, 390 220, 395 140" fill="none" stroke="#fbd5d5" stroke-width="7.19" stroke-linecap="round" stroke-linejoin="round" opacity="1"/><path d="M 560 210 C 620 130, 680 70, 760 25" fill="none" stroke="#fbd5d5" stroke-width="7.19" stroke-linecap="round" stroke-linejoin="round" opacity="1"/><path d="M 720 20 C 760 15, 790 20, 800 30" fill="none" stroke="#fbd5d5" stroke-width="6.53" stroke-linecap="round" stroke-linejoin="round" opacity="1"/><path d="M 2160 630 C 2200 600, 2230 560, 2250 520 M 2300 560 C 2280 540, 2260 520, 2290 500 M 2352 600 C 2320 580, 2300 560, 2290 530" fill="none" stroke="#fbd5d5" stroke-width="6.53" stroke-linecap="round" stroke-linejoin="round" opacity="0.8"/><path d="M 2130 250 C 2150 400, 2150 500, 2150 640" fill="none" stroke="#fbd5d5" stroke-width="5.23" stroke-linecap="round" stroke-linejoin="round" opacity="0.7"/><path d="M 850 260 C 880 400, 890 600, 895 760 C 920 900, 1000 1050, 1150 1250 C 1230 1350, 1280 1450, 1330 1510 C 1370 1540, 1430 1540, 1500 1490" fill="none" stroke="#1e4a8e" stroke-width="9.80" stroke-linecap="round" stroke-linejoin="round" opacity="1"/><path d="M 1500 1490 C 1700 1350, 1900 1220, 2020 1100 C 2150 980, 2200 850, 2210 780 C 2230 650, 2250 550, 2260 480" fill="none" stroke="#1e4a8e" stroke-width="9.80" stroke-linecap="round" stroke-linejoin="round" opacity="1"/><path d="M 2210 850 C 2260 800, 2320 740, 2352 700" fill="none" stroke="#1e4a8e" stroke-width="9.80" stroke-linecap="round" stroke-linejoin="round" opacity="1"/><path d="M 1180 230 C 1230 300, 1230 450, 1160 560 C 1100 650, 1050 750, 1070 820 C 1100 860, 1150 880, 1200 920" fill="none" stroke="#1e4a8e" stroke-width="9.80" stroke-linecap="round" stroke-linejoin="round" opacity="1"/><path d="M 865 610 C 880 800, 950 1000, 1100 1200 C 1150 1260, 1200 1330, 1250 1400" fill="none" stroke="#1e4a8e" stroke-width="5.23" stroke-linecap="round" stroke-linejoin="round" opacity="0.9"/><path d="M 1100 700 C 1150 620, 1190 580, 1210 570" fill="none" stroke="#1e4a8e" stroke-width="5.23" stroke-linecap="round" stroke-linejoin="round" opacity="0.9"/><path d="M 1150 710 C 1180 680, 1200 660, 1210 650" fill="none" stroke="#1e4a8e" stroke-width="5.23" stroke-linecap="round" stroke-linejoin="round" opacity="0.9"/><path d="M 1140 230 C 1180 300, 1200 380, 1190 470" fill="none" stroke="#1e4a8e" stroke-width="5.23" stroke-linecap="round" stroke-linejoin="round" opacity="0.9"/><path d="M 1185 880 L 1225 875" fill="none" stroke="#1e4a8e" stroke-width="5.23" stroke-linecap="round" stroke-linejoin="round" opacity="0.9"/><path d="M 1180 1040 C 1220 1080, 1250 1090, 1270 1080 C 1350 1070, 1450 1100, 1515 1110" fill="none" stroke="#1e4a8e" stroke-width="5.23" stroke-linecap="round" stroke-linejoin="round" opacity="0.9"/><path d="M 1230 1100 C 1250 1090, 1270 1085, 1290 1080" fill="none" stroke="#1e4a8e" stroke-width="5.23" stroke-linecap="round" stroke-linejoin="round" opacity="0.9"/><path d="M 1215 1160 C 1240 1200, 1280 1215, 1320 1225" fill="none" stroke="#1e4a8e" stroke-width="5.23" stroke-linecap="round" stroke-linejoin="round" opacity="0.9"/><path d="M 860 330 C 950 300, 1050 290, 1160 340" fill="none" stroke="#1e4a8e" stroke-width="5.23" stroke-linecap="round" stroke-linejoin="round" opacity="0.9"/><path d="M 880 390 C 950 350, 1050 340, 1150 390" fill="none" stroke="#1e4a8e" stroke-width="5.23" stroke-linecap="round" stroke-linejoin="round" opacity="0.9"/><path d="M 880 430 C 950 440, 1050 430, 1120 420" fill="none" stroke="#1e4a8e" stroke-width="5.23" stroke-linecap="round" stroke-linejoin="round" opacity="0.9"/><path d="M 850 450 C 900 400, 950 380, 1000 370" fill="none" stroke="#1e4a8e" stroke-width="5.23" stroke-linecap="round" stroke-linejoin="round" opacity="0.9"/><path d="M 1020 360 C 1000 390, 1010 410, 1030 420" fill="none" stroke="#1e4a8e" stroke-width="5.23" stroke-linecap="round" stroke-linejoin="round" opacity="0.9"/><path d="M 930 480 L 940 465 M 1020 480 L 1025 470 M 1100 490 L 1095 470" fill="none" stroke="#1e4a8e" stroke-width="5.23" stroke-linecap="round" stroke-linejoin="round" opacity="0.9"/><path d="M 1400 300 C 1550 280, 1750 300, 1980 350" fill="none" stroke="#1e4a8e" stroke-width="5.23" stroke-linecap="round" stroke-linejoin="round" opacity="0.9"/><path d="M 1370 370 C 1500 320, 1700 310, 1850 380" fill="none" stroke="#1e4a8e" stroke-width="5.23" stroke-linecap="round" stroke-linejoin="round" opacity="0.9"/><path d="M 1360 420 C 1450 390, 1520 370, 1560 360" fill="none" stroke="#1e4a8e" stroke-width="5.23" stroke-linecap="round" stroke-linejoin="round" opacity="0.9"/><path d="M 1430 490 C 1550 470, 1700 450, 1820 420" fill="none" stroke="#1e4a8e" stroke-width="5.23" stroke-linecap="round" stroke-linejoin="round" opacity="0.9"/><path d="M 1480 440 C 1550 430, 1650 450, 1750 470" fill="none" stroke="#1e4a8e" stroke-width="5.23" stroke-linecap="round" stroke-linejoin="round" opacity="0.9"/><path d="M 1500 510 C 1520 500, 1530 490, 1540 480" fill="none" stroke="#1e4a8e" stroke-width="5.23" stroke-linecap="round" stroke-linejoin="round" opacity="0.9"/><path d="M 1510 1490 C 1520 1520, 1530 1550, 1540 1568" fill="none" stroke="#1e4a8e" stroke-width="5.23" stroke-linecap="round" stroke-linejoin="round" opacity="0.9"/><path d="M 1540 1568 C 1620 1480, 1700 1420, 1760 1360" fill="none" stroke="#1e4a8e" stroke-width="5.23" stroke-linecap="round" stroke-linejoin="round" opacity="0.9"/><path d="M 1600 1568 C 1700 1460, 1780 1380, 1830 1300" fill="none" stroke="#1e4a8e" stroke-width="5.23" stroke-linecap="round" stroke-linejoin="round" opacity="0.9"/><path d="M 1660 1568 C 1760 1450, 1860 1340, 1920 1250" fill="none" stroke="#1e4a8e" stroke-width="5.23" stroke-linecap="round" stroke-linejoin="round" opacity="0.9"/><path d="M 1560 1500 C 1620 1450, 1680 1400, 1700 1380" fill="none" stroke="#1e4a8e" stroke-width="5.23" stroke-linecap="round" stroke-linejoin="round" opacity="0.9"/><path d="M 2040 50 C 2100 45, 2150 45, 2190 50" fill="none" stroke="#1e4a8e" stroke-width="5.23" stroke-linecap="round" stroke-linejoin="round" opacity="0.9"/><path d="M 2080 90 C 2150 80, 2200 70, 2240 60" fill="none" stroke="#1e4a8e" stroke-width="5.23" stroke-linecap="round" stroke-linejoin="round" opacity="0.9"/><path d="M 2140 150 C 2220 120, 2300 80, 2352 50" fill="none" stroke="#1e4a8e" stroke-width="5.23" stroke-linecap="round" stroke-linejoin="round" opacity="0.9"/><path d="M 2150 240 C 2250 200, 2300 170, 2352 130" fill="none" stroke="#1e4a8e" stroke-width="5.23" stroke-linecap="round" stroke-linejoin="round" opacity="0.9"/><path d="M 2160 280 C 2250 260, 2310 230, 2352 200" fill="none" stroke="#1e4a8e" stroke-width="5.23" stroke-linecap="round" stroke-linejoin="round" opacity="0.9"/><path d="M 2150 420 C 2250 390, 2300 360, 2352 340" fill="none" stroke="#1e4a8e" stroke-width="5.23" stroke-linecap="round" stroke-linejoin="round" opacity="0.9"/><path d="M 2150 460 C 2250 440, 2300 420, 2352 400" fill="none" stroke="#1e4a8e" stroke-width="5.23" stroke-linecap="round" stroke-linejoin="round" opacity="0.9"/><path d="M 2140 500 C 2250 480, 2310 460, 2352 440" fill="none" stroke="#1e4a8e" stroke-width="5.23" stroke-linecap="round" stroke-linejoin="round" opacity="0.9"/><path d="M 2160 550 C 2250 530, 2310 510, 2352 490" fill="none" stroke="#1e4a8e" stroke-width="5.23" stroke-linecap="round" stroke-linejoin="round" opacity="0.9"/><path d="M829.8 170.0 L842.3 180.1 L860.4 187.0 L881.9 193.1 L904.6 198.7 L926.7 203.6 L946.0 207.9 L963.1 211.6 L979.7 214.9 L996.0 217.6 L1012.2 219.7 L1028.4 221.2 L1044.6 222.1 L1061.8 222.7 L1080.2 222.9 L1098.9 222.0 L1116.5 220.3 L1129.8 224.1 L1139.4 226.9 L1140.6 223.1 L1130.9 220.3 L1117.6 216.4 L1103.6 205.5 L1088.0 194.9 L1071.4 185.7 L1055.4 177.9 L1039.9 171.3 L1024.1 165.6 L1007.7 160.8 L990.6 156.9 L972.8 154.0 L954.0 152.1 L932.8 151.2 L909.4 151.2 L885.6 152.4 L863.3 154.6 L844.2 158.4 L830.2 166.0Z" fill="#1e4a8e" opacity="0.88"/><path d="M1320.4 189.5 L1335.2 192.2 L1354.4 193.2 L1376.9 192.9 L1401.5 192.1 L1427.3 190.3 L1453.1 185.2 L1481.4 181.2 L1513.0 177.6 L1546.7 174.5 L1581.7 171.7 L1616.7 168.9 L1650.9 166.1 L1684.2 163.2 L1717.4 160.2 L1750.6 157.4 L1783.8 154.8 L1817.0 152.4 L1850.1 150.4 L1885.6 148.8 L1924.0 147.7 L1962.4 146.8 L1998.1 145.9 L2028.2 144.9 L2050.0 143.5 L2050.0 140.5 L2028.3 138.4 L1998.2 136.3 L1962.6 134.2 L1924.1 132.3 L1885.6 130.7 L1849.9 129.6 L1816.4 129.0 L1782.9 128.8 L1749.4 128.8 L1715.9 129.1 L1682.5 129.5 L1649.1 129.9 L1615.0 130.2 L1579.8 130.5 L1544.5 131.0 L1510.0 131.7 L1477.2 132.9 L1446.9 134.8 L1418.3 137.8 L1391.8 146.3 L1368.1 156.6 L1347.8 167.1 L1331.4 177.3 L1319.6 186.5Z" fill="#1e4a8e" opacity="0.88"/><path d="M1590.0 360.0 L1594.9 368.1 L1603.0 378.7 L1613.3 389.7 L1624.5 399.3 L1636.6 407.2 L1650.1 414.0 L1664.5 418.9 L1679.1 420.8 L1693.1 418.1 L1705.0 412.2 L1714.2 405.5 L1720.0 400.0 L1720.0 400.0 L1711.9 399.5 L1701.2 400.3 L1690.2 400.7 L1680.9 399.2 L1671.4 395.8 L1659.9 391.0 L1647.4 385.6 L1635.5 380.7 L1623.4 375.3 L1610.7 368.8 L1599.0 363.1 L1590.0 360.0Z" fill="#1e4a8e" opacity="0.8"/><path d="M1030.0 350.0 L1033.3 356.2 L1039.0 363.9 L1046.3 372.0 L1054.6 379.4 L1063.9 385.9 L1074.4 391.8 L1085.3 396.6 L1095.8 400.0 L1105.9 401.8 L1115.6 402.2 L1123.9 401.5 L1130.0 400.0 L1130.0 400.0 L1125.8 395.3 L1119.4 390.3 L1111.9 385.1 L1104.2 380.0 L1095.6 374.8 L1085.6 369.4 L1075.2 364.6 L1065.4 360.6 L1055.9 357.1 L1046.0 353.6 L1037.0 350.9 L1030.0 350.0Z" fill="#1e4a8e" opacity="0.75"/><path d="M 540 700 C 530 550, 620 380, 800 250" fill="none" stroke="#ff1020" stroke-width="8.49" stroke-linecap="round" stroke-linejoin="round" opacity="1"/><path d="M 730 225 C 760 215, 790 210, 805 215 C 800 240, 795 260, 795 280" fill="none" stroke="#ff1020" stroke-width="8.49" stroke-linecap="round" stroke-linejoin="round" opacity="1"/><path d="M 835 130 C 850 60, 870 20, 890 0" fill="none" stroke="#ff1020" stroke-width="7.84" stroke-linecap="round" stroke-linejoin="round" opacity="1"/><path d="M 1985 0 L 1990 40 C 2050 60, 2100 120, 2130 250 C 2140 320, 2145 380, 2140 430" fill="none" stroke="#ff1020" stroke-width="7.84" stroke-linecap="round" stroke-linejoin="round" opacity="1"/></g><g transform="translate(500,1020) scale(0.15309)"><path d="M 380 380 C 330 350, 270 380, 240 470 C 220 560, 240 650, 300 700" fill="none" stroke="#ff1020" stroke-width="23.52" stroke-linecap="round" stroke-linejoin="round" opacity="1"/><path d="M 290 650 C 330 570, 400 525, 470 540 C 520 560, 530 610, 490 625 C 450 635, 440 580, 470 545" fill="none" stroke="#ff1020" stroke-width="23.52" stroke-linecap="round" stroke-linejoin="round" opacity="1"/><path d="M 500 310 C 540 400, 590 500, 640 580" fill="none" stroke="#ff1020" stroke-width="23.52" stroke-linecap="round" stroke-linejoin="round" opacity="1"/><path d="M 565 200 C 600 300, 650 420, 710 530" fill="none" stroke="#ff1020" stroke-width="23.52" stroke-linecap="round" stroke-linejoin="round" opacity="1"/><path d="M 800 370 C 740 380, 720 450, 770 490 C 820 500, 860 440, 850 390 C 840 360, 800 360, 780 380" fill="none" stroke="#ff1020" stroke-width="23.52" stroke-linecap="round" stroke-linejoin="round" opacity="1"/><path d="M 860 320 C 880 360, 920 380, 950 360 C 980 340, 990 330, 1000 340 C 1020 350, 1050 330, 1060 260 C 1070 200, 1040 150, 1000 140" fill="none" stroke="#ff1020" stroke-width="23.52" stroke-linecap="round" stroke-linejoin="round" opacity="1"/><path d="M 120 1140 C 150 1220, 190 1310, 260 1350 C 270 1280, 280 1220, 320 1190 C 350 1180, 380 1210, 400 1240" fill="none" stroke="#ff1020" stroke-width="23.52" stroke-linecap="round" stroke-linejoin="round" opacity="1"/><path d="M 400 1240 C 440 1250, 480 1230, 500 1200 C 510 1160, 480 1130, 440 1140 C 400 1160, 420 1230, 480 1210 C 530 1190, 580 1180, 620 1185" fill="none" stroke="#ff1020" stroke-width="23.52" stroke-linecap="round" stroke-linejoin="round" opacity="1"/><path d="M 600 1020 C 630 1080, 660 1120, 700 1150" fill="none" stroke="#ff1020" stroke-width="23.52" stroke-linecap="round" stroke-linejoin="round" opacity="1"/><path d="M 730 1100 C 715 1040, 720 980, 790 935" fill="none" stroke="#ff1020" stroke-width="23.52" stroke-linecap="round" stroke-linejoin="round" opacity="1"/><path d="M 800 720 C 830 850, 880 970, 960 1010 C 990 1010, 1000 990, 1000 970" fill="none" stroke="#ff1020" stroke-width="23.52" stroke-linecap="round" stroke-linejoin="round" opacity="1"/><path d="M 990 800 C 1000 880, 1010 940, 1020 970" fill="none" stroke="#ff1020" stroke-width="23.52" stroke-linecap="round" stroke-linejoin="round" opacity="1"/><path d="M 1040 780 C 1050 850, 1060 920, 1080 930 C 1120 900, 1130 820, 1140 800 C 1160 850, 1180 880, 1220 840" fill="none" stroke="#ff1020" stroke-width="23.52" stroke-linecap="round" stroke-linejoin="round" opacity="1"/><path d="M 1220 840 C 1280 790, 1280 680, 1260 640 C 1230 630, 1240 730, 1330 780 C 1400 760, 1470 700, 1520 625" fill="none" stroke="#ff1020" stroke-width="23.52" stroke-linecap="round" stroke-linejoin="round" opacity="1"/><path d="M 570 935 L 572 940 M 965 700 L 967 706" fill="none" stroke="#ff1020" stroke-width="32.66" stroke-linecap="round" stroke-linejoin="round" opacity="1"/></g><g transform="translate(500,760) scale(0.30612)"><path d="M 967 331 L 1030 302" fill="none" stroke="#1e4a8e" stroke-width="3.92" stroke-linecap="round" stroke-linejoin="round" opacity="0.8"/><path d="M 1025 361 L 1058 358" fill="none" stroke="#1e4a8e" stroke-width="3.92" stroke-linecap="round" stroke-linejoin="round" opacity="0.8"/><path d="M 890 371 L 921 357" fill="none" stroke="#1e4a8e" stroke-width="3.92" stroke-linecap="round" stroke-linejoin="round" opacity="0.8"/><path d="M 995 426 L 1030 414" fill="none" stroke="#1e4a8e" stroke-width="3.92" stroke-linecap="round" stroke-linejoin="round" opacity="0.8"/><path d="M 1049 443 L 1113 431" fill="none" stroke="#1e4a8e" stroke-width="3.92" stroke-linecap="round" stroke-linejoin="round" opacity="0.8"/><path d="M 1144 317 L 1222 295" fill="none" stroke="#1e4a8e" stroke-width="3.92" stroke-linecap="round" stroke-linejoin="round" opacity="0.8"/><path d="M 919 326 L 967 334" fill="none" stroke="#1e4a8e" stroke-width="3.92" stroke-linecap="round" stroke-linejoin="round" opacity="0.8"/><path d="M 929 391 L 996 378" fill="none" stroke="#1e4a8e" stroke-width="3.92" stroke-linecap="round" stroke-linejoin="round" opacity="0.8"/><path d="M 1028 319 L 1060 308" fill="none" stroke="#1e4a8e" stroke-width="3.92" stroke-linecap="round" stroke-linejoin="round" opacity="0.8"/><path d="M 1064 370 L 1113 368" fill="none" stroke="#1e4a8e" stroke-width="3.92" stroke-linecap="round" stroke-linejoin="round" opacity="0.8"/><path d="M 1002 352 L 1080 357" fill="none" stroke="#1e4a8e" stroke-width="3.92" stroke-linecap="round" stroke-linejoin="round" opacity="0.8"/><path d="M 946 390 L 1006 403" fill="none" stroke="#1e4a8e" stroke-width="3.92" stroke-linecap="round" stroke-linejoin="round" opacity="0.8"/><path d="M 1077 350 L 1159 315" fill="none" stroke="#1e4a8e" stroke-width="3.92" stroke-linecap="round" stroke-linejoin="round" opacity="0.8"/><path d="M 993 416 L 1032 412" fill="none" stroke="#1e4a8e" stroke-width="3.92" stroke-linecap="round" stroke-linejoin="round" opacity="0.8"/><path d="M 891 404 L 966 400" fill="none" stroke="#1e4a8e" stroke-width="3.92" stroke-linecap="round" stroke-linejoin="round" opacity="0.8"/><path d="M 1116 354 L 1188 352" fill="none" stroke="#1e4a8e" stroke-width="3.92" stroke-linecap="round" stroke-linejoin="round" opacity="0.8"/><path d="M 1037 374 L 1114 394" fill="none" stroke="#1e4a8e" stroke-width="3.92" stroke-linecap="round" stroke-linejoin="round" opacity="0.8"/><path d="M 1008 403 L 1042 405" fill="none" stroke="#1e4a8e" stroke-width="3.92" stroke-linecap="round" stroke-linejoin="round" opacity="0.8"/><path d="M 1055 449 L 1131 428" fill="none" stroke="#1e4a8e" stroke-width="3.92" stroke-linecap="round" stroke-linejoin="round" opacity="0.8"/><path d="M 984 404 L 1015 400" fill="none" stroke="#1e4a8e" stroke-width="3.92" stroke-linecap="round" stroke-linejoin="round" opacity="0.8"/><path d="M 925 326 L 959 330" fill="none" stroke="#1e4a8e" stroke-width="3.92" stroke-linecap="round" stroke-linejoin="round" opacity="0.8"/><path d="M 915 345 L 967 355" fill="none" stroke="#1e4a8e" stroke-width="3.92" stroke-linecap="round" stroke-linejoin="round" opacity="0.8"/><path d="M 902 373 L 963 386" fill="none" stroke="#1e4a8e" stroke-width="3.92" stroke-linecap="round" stroke-linejoin="round" opacity="0.8"/><path d="M 1101 431 L 1147 423" fill="none" stroke="#1e4a8e" stroke-width="3.92" stroke-linecap="round" stroke-linejoin="round" opacity="0.8"/><path d="M 977 434 L 1058 401" fill="none" stroke="#1e4a8e" stroke-width="3.92" stroke-linecap="round" stroke-linejoin="round" opacity="0.8"/><path d="M 928 342 L 971 338" fill="none" stroke="#1e4a8e" stroke-width="3.92" stroke-linecap="round" stroke-linejoin="round" opacity="0.8"/><path d="M 1039 347 L 1069 342" fill="none" stroke="#1e4a8e" stroke-width="3.92" stroke-linecap="round" stroke-linejoin="round" opacity="0.8"/><path d="M 980 389 L 1067 394" fill="none" stroke="#1e4a8e" stroke-width="3.92" stroke-linecap="round" stroke-linejoin="round" opacity="0.8"/><path d="M 1613 431 L 1676 400" fill="none" stroke="#1e4a8e" stroke-width="3.92" stroke-linecap="round" stroke-linejoin="round" opacity="0.8"/><path d="M 1801 460 L 1882 472" fill="none" stroke="#1e4a8e" stroke-width="3.92" stroke-linecap="round" stroke-linejoin="round" opacity="0.8"/><path d="M 1552 392 L 1588 392" fill="none" stroke="#1e4a8e" stroke-width="3.92" stroke-linecap="round" stroke-linejoin="round" opacity="0.8"/><path d="M 1391 332 L 1430 317" fill="none" stroke="#1e4a8e" stroke-width="3.92" stroke-linecap="round" stroke-linejoin="round" opacity="0.8"/><path d="M 1527 329 L 1555 318" fill="none" stroke="#1e4a8e" stroke-width="3.92" stroke-linecap="round" stroke-linejoin="round" opacity="0.8"/><path d="M 1410 385 L 1441 392" fill="none" stroke="#1e4a8e" stroke-width="3.92" stroke-linecap="round" stroke-linejoin="round" opacity="0.8"/><path d="M 1661 347 L 1705 337" fill="none" stroke="#1e4a8e" stroke-width="3.92" stroke-linecap="round" stroke-linejoin="round" opacity="0.8"/><path d="M 1538 342 L 1616 366" fill="none" stroke="#1e4a8e" stroke-width="3.92" stroke-linecap="round" stroke-linejoin="round" opacity="0.8"/><path d="M 1588 407 L 1620 393" fill="none" stroke="#1e4a8e" stroke-width="3.92" stroke-linecap="round" stroke-linejoin="round" opacity="0.8"/><path d="M 1528 368 L 1602 339" fill="none" stroke="#1e4a8e" stroke-width="3.92" stroke-linecap="round" stroke-linejoin="round" opacity="0.8"/><path d="M 1371 491 L 1429 468" fill="none" stroke="#1e4a8e" stroke-width="3.92" stroke-linecap="round" stroke-linejoin="round" opacity="0.8"/><path d="M 1626 325 L 1685 342" fill="none" stroke="#1e4a8e" stroke-width="3.92" stroke-linecap="round" stroke-linejoin="round" opacity="0.8"/><path d="M 1783 445 L 1828 436" fill="none" stroke="#1e4a8e" stroke-width="3.92" stroke-linecap="round" stroke-linejoin="round" opacity="0.8"/><path d="M 1442 459 L 1503 467" fill="none" stroke="#1e4a8e" stroke-width="3.92" stroke-linecap="round" stroke-linejoin="round" opacity="0.8"/><path d="M 1522 360 L 1597 382" fill="none" stroke="#1e4a8e" stroke-width="3.92" stroke-linecap="round" stroke-linejoin="round" opacity="0.8"/><path d="M 1778 465 L 1857 472" fill="none" stroke="#1e4a8e" stroke-width="3.92" stroke-linecap="round" stroke-linejoin="round" opacity="0.8"/><path d="M 1471 413 L 1517 390" fill="none" stroke="#1e4a8e" stroke-width="3.92" stroke-linecap="round" stroke-linejoin="round" opacity="0.8"/><path d="M 1374 370 L 1419 373" fill="none" stroke="#1e4a8e" stroke-width="3.92" stroke-linecap="round" stroke-linejoin="round" opacity="0.8"/><path d="M 1829 401 L 1911 425" fill="none" stroke="#1e4a8e" stroke-width="3.92" stroke-linecap="round" stroke-linejoin="round" opacity="0.8"/><path d="M 1828 386 L 1869 372" fill="none" stroke="#1e4a8e" stroke-width="3.92" stroke-linecap="round" stroke-linejoin="round" opacity="0.8"/><path d="M 1456 357 L 1522 372" fill="none" stroke="#1e4a8e" stroke-width="3.92" stroke-linecap="round" stroke-linejoin="round" opacity="0.8"/><path d="M 1772 406 L 1840 416" fill="none" stroke="#1e4a8e" stroke-width="3.92" stroke-linecap="round" stroke-linejoin="round" opacity="0.8"/><path d="M 1402 439 L 1485 450" fill="none" stroke="#1e4a8e" stroke-width="3.92" stroke-linecap="round" stroke-linejoin="round" opacity="0.8"/><path d="M 1728 406 L 1768 411" fill="none" stroke="#1e4a8e" stroke-width="3.92" stroke-linecap="round" stroke-linejoin="round" opacity="0.8"/><path d="M 1523 464 L 1610 448" fill="none" stroke="#1e4a8e" stroke-width="3.92" stroke-linecap="round" stroke-linejoin="round" opacity="0.8"/><path d="M 1557 490 L 1625 464" fill="none" stroke="#1e4a8e" stroke-width="3.92" stroke-linecap="round" stroke-linejoin="round" opacity="0.8"/><path d="M 1422 347 L 1506 359" fill="none" stroke="#1e4a8e" stroke-width="3.92" stroke-linecap="round" stroke-linejoin="round" opacity="0.8"/><path d="M 1432 469 L 1520 471" fill="none" stroke="#1e4a8e" stroke-width="3.92" stroke-linecap="round" stroke-linejoin="round" opacity="0.8"/><path d="M 1532 419 L 1565 401" fill="none" stroke="#1e4a8e" stroke-width="3.92" stroke-linecap="round" stroke-linejoin="round" opacity="0.8"/><path d="M 1836 437 L 1895 452" fill="none" stroke="#1e4a8e" stroke-width="3.92" stroke-linecap="round" stroke-linejoin="round" opacity="0.8"/><path d="M 1573 477 L 1648 451" fill="none" stroke="#1e4a8e" stroke-width="3.92" stroke-linecap="round" stroke-linejoin="round" opacity="0.8"/><path d="M 1483 373 L 1528 371" fill="none" stroke="#1e4a8e" stroke-width="3.92" stroke-linecap="round" stroke-linejoin="round" opacity="0.8"/><path d="M 1487 395 L 1524 404" fill="none" stroke="#1e4a8e" stroke-width="3.92" stroke-linecap="round" stroke-linejoin="round" opacity="0.8"/><path d="M 1533 402 L 1597 417" fill="none" stroke="#1e4a8e" stroke-width="3.92" stroke-linecap="round" stroke-linejoin="round" opacity="0.8"/><path d="M 1566 485 L 1626 481" fill="none" stroke="#1e4a8e" stroke-width="3.92" stroke-linecap="round" stroke-linejoin="round" opacity="0.8"/><path d="M 1617 323 L 1669 304" fill="none" stroke="#1e4a8e" stroke-width="3.92" stroke-linecap="round" stroke-linejoin="round" opacity="0.8"/><path d="M 1362 464 L 1402 459" fill="none" stroke="#1e4a8e" stroke-width="3.92" stroke-linecap="round" stroke-linejoin="round" opacity="0.8"/><path d="M 1715 420 L 1765 416" fill="none" stroke="#1e4a8e" stroke-width="3.92" stroke-linecap="round" stroke-linejoin="round" opacity="0.8"/><path d="M 1632 461 L 1668 459" fill="none" stroke="#1e4a8e" stroke-width="3.92" stroke-linecap="round" stroke-linejoin="round" opacity="0.8"/><path d="M 1482 370 L 1558 363" fill="none" stroke="#1e4a8e" stroke-width="3.92" stroke-linecap="round" stroke-linejoin="round" opacity="0.8"/><path d="M 870 380 C 950 340, 1050 330, 1160 385" fill="none" stroke="#1e4a8e" stroke-width="7.84" stroke-linecap="round" stroke-linejoin="round" opacity="1"/><path d="M 1340 385 C 1450 340, 1600 320, 1700 322 C 1780 330, 1830 360, 1860 385" fill="none" stroke="#1e4a8e" stroke-width="7.84" stroke-linecap="round" stroke-linejoin="round" opacity="1"/><path d="M1600.0 350.0 L1605.0 362.0 L1614.6 375.3 L1626.8 387.6 L1639.7 397.1 L1654.2 404.0 L1670.8 409.0 L1687.1 411.2 L1700.0 410.0 L1700.0 410.0 L1695.0 398.0 L1685.4 384.7 L1673.2 372.4 L1660.3 362.9 L1645.8 356.0 L1629.2 351.0 L1612.9 348.8 L1600.0 350.0Z" fill="#1e4a8e" opacity="0.7"/><path d="M1040.0 350.0 L1043.0 360.9 L1049.9 373.5 L1059.6 385.6 L1070.7 394.8 L1083.4 400.5 L1097.2 403.0 L1110.0 402.7 L1120.0 400.0 L1120.0 400.0 L1115.6 390.6 L1107.8 380.7 L1098.5 371.9 L1089.3 365.2 L1078.5 359.4 L1065.1 354.0 L1051.3 350.4 L1040.0 350.0Z" fill="#1e4a8e" opacity="0.7"/></g><g transform="translate(800,1180) scale(0.30612)"><path d="M 460 940 C 500 800, 560 650, 600 540" fill="none" stroke="#ecf0f6" stroke-width="7.19" stroke-linecap="round" stroke-linejoin="round" opacity="0.7"/><path d="M 640 380 C 620 600, 560 900, 490 1130" fill="none" stroke="#ecf0f6" stroke-width="7.19" stroke-linecap="round" stroke-linejoin="round" opacity="0.7"/><path d="M 1270 0 C 1350 300, 1420 500, 1500 720" fill="none" stroke="#ecf0f6" stroke-width="7.19" stroke-linecap="round" stroke-linejoin="round" opacity="0.7"/><path d="M 1700 1060 C 1850 1250, 1950 1400, 2040 1568" fill="none" stroke="#ecf0f6" stroke-width="7.19" stroke-linecap="round" stroke-linejoin="round" opacity="0.7"/><path d="M 1800 1300 C 1880 1400, 1950 1500, 1990 1568" fill="none" stroke="#ecf0f6" stroke-width="7.19" stroke-linecap="round" stroke-linejoin="round" opacity="0.7"/><path d="M 220 0 C 270 60, 320 140, 380 160 C 430 170, 480 160, 530 120 C 600 80, 650 50, 720 5" fill="none" stroke="#1e4a8e" stroke-width="9.80" stroke-linecap="round" stroke-linejoin="round" opacity="1"/><path d="M538.7 120.7 L541.2 128.1 L545.7 137.2 L551.4 147.7 L557.6 159.5 L564.0 172.1 L570.2 185.3 L575.6 198.5 L580.1 211.6 L583.7 224.8 L586.9 238.7 L589.8 253.0 L592.3 267.8 L594.5 283.0 L596.3 298.5 L597.7 314.3 L598.7 330.4 L599.4 346.5 L599.7 363.0 L599.6 379.6 L599.2 396.6 L598.3 414.1 L597.1 431.9 L595.5 450.3 L593.6 469.3 L591.2 488.7 L588.4 508.5 L585.2 528.7 L581.7 549.5 L577.8 570.8 L573.6 592.8 L569.1 615.4 L564.3 638.8 L559.4 662.8 L554.5 687.4 L549.3 712.5 L543.8 738.2 L537.8 764.7 L531.3 791.9 L524.1 819.9 L516.1 848.8 L506.6 880.8 L495.2 916.5 L482.8 954.4 L470.5 992.6 L457.5 1028.8 L445.7 1061.6 L435.8 1089.1 L428.6 1109.5 L431.4 1110.5 L438.6 1090.1 L448.5 1062.6 L460.3 1029.9 L473.3 993.6 L487.7 956.1 L501.2 918.6 L513.5 883.0 L523.9 851.2 L532.5 822.2 L540.3 794.2 L547.3 767.0 L553.7 740.5 L559.7 714.8 L565.2 689.7 L570.5 665.2 L575.7 641.2 L580.7 617.8 L585.4 595.2 L589.9 573.2 L594.0 551.7 L597.7 530.8 L601.0 510.4 L604.0 490.4 L606.4 470.7 L608.5 451.5 L610.1 432.9 L611.3 414.8 L612.1 397.1 L612.5 379.8 L612.5 362.8 L612.1 346.1 L611.3 329.6 L610.0 313.3 L608.4 297.2 L606.4 281.4 L603.9 265.9 L601.0 250.8 L597.8 236.2 L594.1 222.0 L589.9 208.4 L584.9 194.9 L578.8 181.3 L572.0 168.1 L564.9 155.5 L558.0 143.9 L551.6 133.8 L546.1 125.3 L541.3 119.3Z" fill="#1e4a8e" opacity="1"/><path d="M 572 160 L 669 38" fill="none" stroke="#1e4a8e" stroke-width="4.25" stroke-linecap="round" stroke-linejoin="round" opacity="0.85"/><path d="M 575 175 L 697 22" fill="none" stroke="#1e4a8e" stroke-width="4.25" stroke-linecap="round" stroke-linejoin="round" opacity="0.85"/><path d="M 577 190 L 724 7" fill="none" stroke="#1e4a8e" stroke-width="4.25" stroke-linecap="round" stroke-linejoin="round" opacity="0.85"/><path d="M 580 205 L 751 -9" fill="none" stroke="#1e4a8e" stroke-width="4.25" stroke-linecap="round" stroke-linejoin="round" opacity="0.85"/><path d="M 582 220 L 779 -25" fill="none" stroke="#1e4a8e" stroke-width="4.25" stroke-linecap="round" stroke-linejoin="round" opacity="0.85"/><path d="M 585 235 L 806 -41" fill="none" stroke="#1e4a8e" stroke-width="4.25" stroke-linecap="round" stroke-linejoin="round" opacity="0.85"/><path d="M 588 250 L 833 -57" fill="none" stroke="#1e4a8e" stroke-width="4.25" stroke-linecap="round" stroke-linejoin="round" opacity="0.85"/><path d="M 590 265 L 860 -73" fill="none" stroke="#1e4a8e" stroke-width="4.25" stroke-linecap="round" stroke-linejoin="round" opacity="0.85"/><path d="M 593 280 L 888 -89" fill="none" stroke="#1e4a8e" stroke-width="4.25" stroke-linecap="round" stroke-linejoin="round" opacity="0.85"/><path d="M 595 295 L 915 -105" fill="none" stroke="#1e4a8e" stroke-width="4.25" stroke-linecap="round" stroke-linejoin="round" opacity="0.85"/><path d="M 598 310 L 942 -121" fill="none" stroke="#1e4a8e" stroke-width="4.25" stroke-linecap="round" stroke-linejoin="round" opacity="0.85"/><path d="M 601 325 L 970 -136" fill="none" stroke="#1e4a8e" stroke-width="4.25" stroke-linecap="round" stroke-linejoin="round" opacity="0.85"/><path d="M 1346 -483 C 1355 -250, 1375 -60, 1410 80 C 1470 360, 1560 650, 1660 940" fill="none" stroke="#1e4a8e" stroke-width="7.84" stroke-linecap="round" stroke-linejoin="round" opacity="1"/><path d="M 1405 90 C 1440 200, 1460 300, 1480 420" fill="none" stroke="#1e4a8e" stroke-width="4.57" stroke-linecap="round" stroke-linejoin="round" opacity="0.9"/><path d="M1679.0 1025.2 L1681.4 1038.5 L1684.8 1056.3 L1689.0 1077.6 L1693.8 1101.2 L1699.3 1126.2 L1705.2 1151.3 L1711.1 1176.3 L1717.2 1202.1 L1723.9 1229.2 L1732.2 1257.9 L1741.9 1288.8 L1753.4 1322.4 L1768.4 1362.2 L1786.8 1408.7 L1806.6 1457.3 L1825.8 1503.5 L1842.1 1542.8 L1853.5 1570.7 L1866.5 1565.3 L1855.0 1537.4 L1838.7 1498.1 L1819.6 1452.0 L1799.8 1403.5 L1781.5 1357.2 L1766.6 1317.6 L1755.2 1284.4 L1745.6 1253.9 L1737.4 1225.4 L1729.5 1198.8 L1722.1 1173.4 L1714.8 1148.7 L1707.7 1124.1 L1701.0 1099.5 L1694.8 1076.2 L1689.3 1055.2 L1684.7 1037.7 L1681.0 1024.8Z" fill="#1e4a8e" opacity="1"/></g><g transform="translate(1100,1450) scale(0.31510)"><path d="M 700 200 C 900 500, 1100 800, 1200 1200 C 1250 1400, 1250 1500, 1240 1568" fill="none" stroke="#ecf0f6" stroke-width="6.98" stroke-linecap="round" stroke-linejoin="round" opacity="0.7"/><path d="M 800 400 C 950 600, 1050 800, 1130 930" fill="none" stroke="#ecf0f6" stroke-width="6.35" stroke-linecap="round" stroke-linejoin="round" opacity="0.6"/><path d="M678.5 140.3 L681.1 155.0 L684.3 174.5 L688.1 197.7 L692.5 223.6 L697.6 251.0 L703.3 278.7 L709.6 305.8 L716.6 331.1 L724.6 355.0 L733.6 378.8 L743.5 402.6 L753.9 426.3 L764.6 450.0 L775.1 473.9 L785.3 497.8 L794.8 522.0 L803.7 546.8 L812.4 572.2 L820.9 598.1 L829.3 624.0 L837.6 649.7 L846.1 674.9 L854.7 699.2 L863.5 722.6 L872.5 744.6 L881.7 765.5 L891.0 785.5 L900.2 804.9 L909.2 824.0 L917.8 843.0 L925.9 862.4 L933.4 882.4 L940.4 903.0 L947.1 923.9 L953.5 945.0 L959.5 966.2 L965.0 987.5 L970.0 1008.8 L974.3 1030.0 L978.1 1051.1 L981.2 1072.1 L983.7 1093.0 L985.7 1113.9 L987.1 1134.8 L988.0 1155.7 L988.4 1176.9 L988.4 1198.2 L988.0 1219.8 L987.0 1241.7 L985.4 1264.0 L983.2 1286.6 L980.6 1309.3 L977.6 1332.0 L974.5 1354.6 L971.3 1377.0 L968.1 1399.0 L964.6 1421.6 L960.6 1445.6 L956.3 1470.0 L951.9 1494.0 L947.6 1516.5 L943.7 1536.8 L940.5 1553.8 L938.1 1566.7 L951.9 1569.3 L954.3 1556.4 L957.5 1539.4 L961.4 1519.1 L965.6 1496.5 L970.1 1472.5 L974.4 1448.0 L978.4 1423.8 L981.9 1401.0 L985.1 1379.0 L988.3 1356.6 L991.5 1333.9 L994.4 1311.0 L997.1 1288.0 L999.3 1265.2 L1001.0 1242.5 L1002.0 1220.2 L1002.4 1198.3 L1002.4 1176.7 L1002.0 1155.3 L1001.1 1134.0 L999.6 1112.7 L997.6 1091.5 L995.1 1070.3 L991.9 1048.9 L988.1 1027.4 L983.6 1005.8 L978.6 984.1 L973.0 962.6 L967.0 941.1 L960.5 919.7 L953.7 898.6 L946.6 877.6 L939.0 857.2 L930.7 837.4 L921.9 818.1 L912.9 798.9 L903.7 779.5 L894.5 759.7 L885.4 739.1 L876.5 717.4 L867.9 694.5 L859.3 670.3 L850.7 645.3 L841.9 619.8 L833.0 594.0 L824.0 568.2 L814.8 542.8 L805.2 518.0 L795.2 493.7 L784.4 469.7 L773.4 446.0 L762.3 422.5 L751.5 399.1 L741.2 375.7 L731.7 352.4 L723.4 328.9 L716.0 304.1 L709.2 277.4 L703.0 249.8 L697.5 222.7 L692.6 196.9 L688.2 173.8 L684.5 154.3 L681.5 139.7Z" fill="#1e4a8e" opacity="1"/><path d="M 240 730 C 320 690, 400 650, 495 645" fill="none" stroke="#1e4a8e" stroke-width="5.08" stroke-linecap="round" stroke-linejoin="round" opacity="1"/></g><g transform="translate(1150,760) scale(0.20408)"><path d="M 1100 100 C 1000 400, 800 700, 400 1000" fill="none" stroke="#ecf0f6" stroke-width="12.25" stroke-linecap="round" stroke-linejoin="round" opacity="0.6"/><path d="M 1000 200 C 900 500, 700 800, 350 1100" fill="none" stroke="#ecf0f6" stroke-width="12.25" stroke-linecap="round" stroke-linejoin="round" opacity="0.6"/><path d="M 600 100 C 650 400, 500 700, 200 1000" fill="none" stroke="#ecf0f6" stroke-width="12.25" stroke-linecap="round" stroke-linejoin="round" opacity="0.6"/><path d="M 1540 400 C 1525 450, 1530 500, 1545 550 M 1690 320 C 1680 380, 1690 430, 1700 470 M 1855 280 C 1850 330, 1860 390, 1865 440" fill="none" stroke="#fbd5d5" stroke-width="10.78" stroke-linecap="round" stroke-linejoin="round" opacity="1"/><path d="M 1560 680 C 1550 710, 1590 720, 1595 690 M 1740 630 C 1735 660, 1770 665, 1775 630 M 1900 600 C 1900 640, 1935 640, 1935 610" fill="none" stroke="#fbd5d5" stroke-width="11.76" stroke-linecap="round" stroke-linejoin="round" opacity="1"/><path d="M 1380 720 C 1300 800, 1100 850, 800 870 C 600 870, 400 850, 260 810 M 320 750 C 260 770, 230 820, 260 860 C 280 880, 300 900, 320 920 M 30 940 C 80 950, 150 900, 200 800" fill="none" stroke="#fbd5d5" stroke-width="10.78" stroke-linecap="round" stroke-linejoin="round" opacity="1"/><path d="M 300 550 C 380 480, 450 430, 510 440 C 570 460, 610 560, 610 650 C 610 750, 590 830, 540 890 C 450 970, 350 1050, 280 1100 C 220 1150, 170 1200, 140 1280 C 180 1260, 220 1230, 230 1220" fill="none" stroke="#1e4a8e" stroke-width="14.70" stroke-linecap="round" stroke-linejoin="round" opacity="1"/><path d="M 1100 0 C 1120 100, 1130 300, 1100 450 C 1080 580, 1030 680, 950 780 C 850 880, 700 1000, 550 1120 C 480 1180, 420 1250, 390 1290" fill="none" stroke="#1e4a8e" stroke-width="14.70" stroke-linecap="round" stroke-linejoin="round" opacity="1"/><path d="M 200 720 C 180 900, 160 1050, 140 1200 C 120 1350, 60 1450, 0 1500" fill="none" stroke="#1e4a8e" stroke-width="14.70" stroke-linecap="round" stroke-linejoin="round" opacity="1"/><path d="M 400 450 C 550 300, 700 150, 800 0" fill="none" stroke="#1e4a8e" stroke-width="7.35" stroke-linecap="round" stroke-linejoin="round" opacity="0.9"/><path d="M 550 430 C 650 350, 750 200, 800 30" fill="none" stroke="#1e4a8e" stroke-width="7.35" stroke-linecap="round" stroke-linejoin="round" opacity="0.9"/><path d="M 460 0 C 470 150, 440 300, 400 450" fill="none" stroke="#1e4a8e" stroke-width="7.35" stroke-linecap="round" stroke-linejoin="round" opacity="0.9"/><path d="M 20 230 C 150 170, 300 80, 440 0" fill="none" stroke="#1e4a8e" stroke-width="7.35" stroke-linecap="round" stroke-linejoin="round" opacity="0.9"/><path d="M 80 420 C 200 350, 320 280, 410 230" fill="none" stroke="#1e4a8e" stroke-width="7.35" stroke-linecap="round" stroke-linejoin="round" opacity="0.9"/><path d="M 60 350 C 120 330, 180 310, 220 290" fill="none" stroke="#1e4a8e" stroke-width="7.35" stroke-linecap="round" stroke-linejoin="round" opacity="0.9"/><path d="M 0 140 C 50 120, 100 110, 130 100" fill="none" stroke="#1e4a8e" stroke-width="7.35" stroke-linecap="round" stroke-linejoin="round" opacity="0.9"/><path d="M 30 180 C 80 170, 140 150, 180 140" fill="none" stroke="#1e4a8e" stroke-width="7.35" stroke-linecap="round" stroke-linejoin="round" opacity="0.9"/><path d="M 40 690 C 150 650, 280 560, 440 490" fill="none" stroke="#1e4a8e" stroke-width="7.35" stroke-linecap="round" stroke-linejoin="round" opacity="0.9"/><path d="M 40 760 C 120 730, 180 700, 230 660" fill="none" stroke="#1e4a8e" stroke-width="7.35" stroke-linecap="round" stroke-linejoin="round" opacity="0.9"/><path d="M 50 830 C 200 780, 350 680, 430 500" fill="none" stroke="#1e4a8e" stroke-width="7.35" stroke-linecap="round" stroke-linejoin="round" opacity="0.9"/><path d="M 30 660 C 100 620, 130 600, 160 590" fill="none" stroke="#1e4a8e" stroke-width="7.35" stroke-linecap="round" stroke-linejoin="round" opacity="0.9"/><path d="M 50 560 C 80 555, 110 550, 130 545" fill="none" stroke="#1e4a8e" stroke-width="7.35" stroke-linecap="round" stroke-linejoin="round" opacity="0.9"/><path d="M 220 590 C 300 540, 380 500, 440 470" fill="none" stroke="#1e4a8e" stroke-width="7.35" stroke-linecap="round" stroke-linejoin="round" opacity="0.9"/><path d="M 330 1330 C 325 1360, 322 1380, 320 1400" fill="none" stroke="#1e4a8e" stroke-width="7.35" stroke-linecap="round" stroke-linejoin="round" opacity="0.9"/></g></svg>
<div class="a" style="left:2122px;top:96px;width:474px;height:40px;background:linear-gradient(#5d5d5d,#4a4a4a);border-top:1px solid #3e3e3e;border-bottom:1px solid #3f3f3f;border-left:1px solid #444;border-right:1px solid #444"></div>
<svg class="a" style="left:2126px;top:103px;" width="24" height="28" viewBox="0 0 24 28"><path d="M9 1L1 14L9 27H14L7 14L14 1Z M19 1L11 14L19 27H24L17 14L24 1Z" fill="#8c8c8c"/></svg>
<svg class="a" style="left:2154px;top:105px;" width="16" height="22" viewBox="0 0 16 22"><path d="M2 2V20M7 2V20M12 2V20" stroke="#8a8a8a" stroke-width="1.4"/></svg>
<svg class="a" style="left:2520px;top:103px;" width="14" height="28" viewBox="0 0 14 28"><path d="M5 1L13 14L5 27H0L7 14L0 1Z" fill="#8c8c8c"/></svg>
<svg class="a" style="left:2572px;top:103px;" width="24" height="28" viewBox="0 0 24 28"><path d="M15 1L23 14L15 27H10L17 14L10 1Z M5 1L13 14L5 27H0L7 14L0 1Z" fill="#8c8c8c"/></svg>
<div class="a" style="left:2597px;top:96px;width:403px;height:40px;background:linear-gradient(#5d5d5d,#4a4a4a);border-top:1px solid #3e3e3e;border-bottom:1px solid #3f3f3f;border-left:1px solid #444;border-right:1px solid #444"></div>
<svg class="a" style="left:2602px;top:105px;" width="16" height="22" viewBox="0 0 16 22"><path d="M2 2V20M7 2V20M12 2V20" stroke="#8a8a8a" stroke-width="1.4"/></svg>
<svg class="a" style="left:2923px;top:103px;" width="14" height="28" viewBox="0 0 14 28"><path d="M5 1L13 14L5 27H0L7 14L0 1Z" fill="#8c8c8c"/></svg>
<svg class="a" style="left:2976px;top:103px;" width="24" height="28" viewBox="0 0 24 28"><path d="M15 1L23 14L15 27H10L17 14L10 1Z M5 1L13 14L5 27H0L7 14L0 1Z" fill="#8c8c8c"/></svg>
<div class="a" style="left:2122px;top:136px;width:29px;height:1861px;background:#5b5b5b;border-right:1px solid #4a4a4a"></div>
<div class="a" style="left:2150px;top:136px;width:360px;height:1861px;background:#76777b"></div>
<div class="a" style="left:2151px;top:137px;width:358px;height:10px;background:repeating-linear-gradient(#4a4a4a 0 1px,#6a6a6a 1px 3px)"></div>
<div class="a" style="left:2151px;top:147px;width:358px;height:43px;background:linear-gradient(#5d5d5d,#4c4c4c)"></div>
<div class="a" style="left:2152px;top:157px;width:40px;height:33px;background:#4b4b4b"></div>
<svg class="a" style="left:2163px;top:163px;" width="20" height="20" viewBox="0 0 20 20"><path d="M1 3L7 9L1 15Z" fill="#8c8c8c"/><rect x="9" y="2" width="9" height="3" fill="#8c8c8c"/><rect x="9" y="8" width="9" height="3" fill="#8c8c8c"/><rect x="9" y="14" width="9" height="3" fill="#8c8c8c"/></svg>
<div class="a" style="left:2192px;top:157px;width:207px;height:41px;background:#76777b"></div>
<svg class="a" style="left:2204px;top:165px;" width="30" height="22" viewBox="0 0 30 22"><g transform="scale(1.0)"><circle cx="5" cy="17" r="4" fill="#222" stroke="#888" stroke-width="1"/><circle cx="12" cy="9" r="3.5" fill="#555" stroke="#ccc" stroke-width="1"/><circle cx="20" cy="4" r="3" fill="#eee" stroke="#555" stroke-width="1"/><circle cx="27" cy="6" r="2" fill="#fff" stroke="#555" stroke-width="0.8"/></g></svg>
<div class="t" style="left:2246px;top:168px;font-size:19.5px;color:#eeeeee;">Material [Motion]</div>
<div class="a" style="left:2150px;top:190px;width:360px;height:10px;background:#76777b"></div>
<div class="a" style="left:2152px;top:200px;width:189px;height:71px;background:linear-gradient(#7f8084,#6c6d70);border:1px solid #555;border-radius:3px"></div>
<div class="a" style="left:2165px;top:210px;width:50px;height:50px;border-radius:50%;background:radial-gradient(#eee 60%,#cfcfcf);box-shadow:0 0 2px #333"></div>
<svg class="a" style="left:2172px;top:222px;" width="36" height="24" viewBox="0 0 36 24"><g transform="scale(0.82)"><path d="M22 27C10 27 3 22 3 15C3 7 11 3 21 3C31 3 39 7 39 13C39 19 33 22 25 22C18 22 13 19 13 15C13 11 17 9 22 9C26 9 29 11 29 14C29 16 26 17 23 16" fill="none" stroke="#3a3a3a" stroke-width="4.5" stroke-linecap="round"/></g></svg>
<div class="a" style="left:2226px;top:226px;width:110px;height:24px;overflow:hidden"><div class="t" style="font-size:19px;color:#eee;transform:scaleX(0.88);transform-origin:left">Search for Additional materials</div></div>
<div class="a" style="left:2152px;top:276px;width:189px;height:710px;background:#76777b;border:1px solid #4a4a4a"></div>
<div class="a" style="left:2328px;top:277px;width:12px;height:690px;background:#6a6b6e;border-left:1px solid #555"></div>
<div class="a" style="left:2329px;top:282px;width:10px;height:536px;background:linear-gradient(90deg,#7a7b7e,#6d6e71);border:1px solid #5c5c5c"></div>
<div class="a" style="left:2153px;top:966px;width:175px;height:18px;background:#6d6e71;border-top:1px solid #555"></div>
<div class="a" style="left:2155px;top:968px;width:88px;height:14px;background:#808184;border:1px solid #5a5a5a;border-radius:2px"></div>
<div class="a" style="left:2155px;top:853px;width:173px;height:46px;background:linear-gradient(#8598a5,#6b7f8e)"></div>
<svg class="a" style="left:2168px;top:298px;" width="20" height="14" viewBox="0 0 20 14"><path d="M1 1H19L10 13Z" fill="#eee"/></svg>
<svg class="a" style="left:2192px;top:290px;" width="28" height="28" viewBox="0 0 28 28"><circle cx="14" cy="14" r="12" fill="#333"/><circle cx="14" cy="14" r="9" fill="url(#ag)"/><defs><radialGradient id="ag" cx="40%" cy="35%"><stop offset="0" stop-color="#ddd"/><stop offset="1" stop-color="#222"/></radialGradient></defs></svg>
<div class="a" style="left:2226px;top:291px;width:102px;height:28px;overflow:hidden"><div class="t" style="top:2px;font-size:21px;color:#f0f0f0">All materials</div></div>
<svg class="a" style="left:2188px;top:345px;" width="14" height="20" viewBox="0 0 14 20"><path d="M1 1L13 10L1 19Z" fill="#eee"/></svg>
<svg class="a" style="left:2210px;top:340px;" width="32" height="32" viewBox="0 0 32 32"><rect width="32" height="32" fill="#3aa0e0"/><path d="M16 16C8 6 3 2 1 1C2 3 6 8 16 16C6 24 2 29 1 31C3 30 8 26 16 16C24 26 29 30 31 31C30 29 26 24 16 16C26 8 30 3 31 1C29 2 24 6 16 16Z" fill="#fbe9a8"/><path d="M16 16L1 8C1 3 3 1 8 1ZM16 16L24 1C29 1 31 3 31 8ZM16 16L31 24C31 29 29 31 24 31ZM16 16L8 31C3 31 1 29 1 24Z" fill="#fbe9a8"/></svg>
<div class="a" style="left:2246px;top:343px;width:82px;height:28px;overflow:hidden"><div class="t" style="top:2px;font-size:21px;color:#f0f0f0">Color pattern</div></div>
<svg class="a" style="left:2188px;top:397px;" width="14" height="20" viewBox="0 0 14 20"><path d="M1 1L13 10L1 19Z" fill="#eee"/></svg>
<svg class="a" style="left:2210px;top:392px;" width="32" height="32" viewBox="0 0 32 32"><rect width="32" height="32" fill="#aaa"/><path d="M16 16L1 8C1 3 3 1 8 1ZM16 16L24 1C29 1 31 3 31 8ZM16 16L31 24C31 29 29 31 24 31ZM16 16L8 31C3 31 1 29 1 24Z" fill="#555"/></svg>
<div class="a" style="left:2246px;top:395px;width:82px;height:28px;overflow:hidden"><div class="t" style="top:2px;font-size:21px;color:#f0f0f0">Monochromatic</div></div>
<svg class="a" style="left:2188px;top:449px;" width="14" height="20" viewBox="0 0 14 20"><path d="M1 1L13 10L1 19Z" fill="#eee"/></svg>
<svg class="a" style="left:2212px;top:442px;" width="28" height="34" viewBox="0 0 28 34"><rect x="1" y="1" width="12" height="12" fill="#fff" stroke="#222" stroke-width="2"/><rect x="15" y="1" width="12" height="12" fill="#fff" stroke="#222" stroke-width="2"/><path d="M1 18L27 15V21L1 24Z" fill="#fff" stroke="#222" stroke-width="2"/><path d="M1 26L18 24V33H1Z" fill="#fff" stroke="#222" stroke-width="2"/><rect x="21" y="23" width="6" height="10" fill="#fff" stroke="#222" stroke-width="2"/></svg>
<div class="a" style="left:2246px;top:447px;width:82px;height:28px;overflow:hidden"><div class="t" style="top:2px;font-size:21px;color:#f0f0f0">Manga materials</div></div>
<svg class="a" style="left:2188px;top:501px;" width="14" height="20" viewBox="0 0 14 20"><path d="M1 1L13 10L1 19Z" fill="#eee"/></svg>
<svg class="a" style="left:2210px;top:496px;" width="32" height="30" viewBox="0 0 32 30"><rect x="1" y="1" width="30" height="28" fill="#fff" stroke="#444" stroke-width="2"/><path d="M4 26L13 8L19 18L23 12L28 26Z" fill="#222"/></svg>
<div class="a" style="left:2246px;top:499px;width:82px;height:28px;overflow:hidden"><div class="t" style="top:2px;font-size:21px;color:#f0f0f0">Image materials</div></div>
<svg class="a" style="left:2186px;top:558px;" width="20" height="14" viewBox="0 0 20 14"><path d="M1 1H19L10 13Z" fill="#eee"/></svg>
<svg class="a" style="left:2210px;top:547px;" width="32" height="32" viewBox="0 0 32 32"><path d="M2 10L12 2H30V22L20 30H2Z" fill="#f4f4f4" stroke="#222" stroke-width="2"/><path d="M2 10H20V30M20 10L30 2" fill="none" stroke="#222" stroke-width="2"/></svg>
<div class="a" style="left:2246px;top:551px;width:82px;height:28px;overflow:hidden"><div class="t" style="top:2px;font-size:21px;color:#f0f0f0">3D</div></div>
<svg class="a" style="left:2233px;top:604px;" width="32" height="24" viewBox="0 0 32 24"><circle cx="10" cy="6" r="5" fill="#222"/><path d="M1 22C1 14 5 12 10 12C15 12 19 14 19 22Z" fill="#222"/><circle cx="22" cy="5" r="5" fill="#333"/><path d="M13 20C13 13 17 11 22 11C27 11 31 13 31 20Z" fill="#333"/></svg>
<div class="a" style="left:2267px;top:604px;width:61px;height:28px;overflow:hidden"><div class="t" style="top:2px;font-size:21px;color:#f0f0f0">Body type</div></div>
<svg class="a" style="left:2208px;top:658px;" width="14" height="20" viewBox="0 0 14 20"><path d="M1 1L13 10L1 19Z" fill="#eee"/></svg>
<svg class="a" style="left:2235px;top:651px;" width="30" height="34" viewBox="0 0 30 34"><circle cx="15" cy="4" r="3.5" fill="#222"/><path d="M1 10H29V13H19V20L21 33H17L15 22L13 33H9L11 20V13H1Z" fill="#222"/></svg>
<div class="a" style="left:2267px;top:656px;width:61px;height:28px;overflow:hidden"><div class="t" style="top:2px;font-size:21px;color:#f0f0f0">Pose</div></div>
<svg class="a" style="left:2233px;top:702px;" width="34" height="36" viewBox="0 0 34 36"><circle cx="15" cy="10" r="8" fill="#fff" stroke="#222" stroke-width="1.5"/><path d="M3 34C3 24 8 21 15 21C22 21 27 24 27 34Z" fill="#fff" stroke="#222" stroke-width="1.5"/><path d="M24 28L29 23L34 28L29 33Z" fill="#222" stroke="#fff"/></svg>
<div class="a" style="left:2267px;top:708px;width:61px;height:28px;overflow:hidden"><div class="t" style="top:2px;font-size:21px;color:#f0f0f0">Character</div></div>
<svg class="a" style="left:2208px;top:762px;" width="14" height="20" viewBox="0 0 14 20"><path d="M1 1L13 10L1 19Z" fill="#eee"/></svg>
<svg class="a" style="left:2233px;top:754px;" width="34" height="36" viewBox="0 0 34 36"><path d="M5 12H23L25 32H3Z" fill="#f4f4f4" stroke="#222" stroke-width="1.5"/><path d="M9 14C9 3 19 3 19 14" fill="none" stroke="#222" stroke-width="2"/><path d="M24 28L29 23L34 28L29 33Z" fill="#222" stroke="#fff"/></svg>
<div class="a" style="left:2267px;top:760px;width:61px;height:28px;overflow:hidden"><div class="t" style="top:2px;font-size:21px;color:#f0f0f0">Small objects</div></div>
<svg class="a" style="left:2208px;top:814px;" width="14" height="20" viewBox="0 0 14 20"><path d="M1 1L13 10L1 19Z" fill="#eee"/></svg>
<svg class="a" style="left:2233px;top:806px;" width="34" height="36" viewBox="0 0 34 36"><path d="M3 8L14 2L24 6V32H3Z" fill="#ddd" stroke="#222" stroke-width="1.5"/><path d="M7 12H10M13 12H16M19 12H21M7 18H10M13 18H16M19 18H21M7 24H10M13 24H16M19 24H21" stroke="#222" stroke-width="2"/><path d="M24 28L29 23L34 28L29 33Z" fill="#222" stroke="#fff"/></svg>
<div class="a" style="left:2267px;top:812px;width:61px;height:28px;overflow:hidden"><div class="t" style="top:2px;font-size:21px;color:#f0f0f0">Background</div></div>
<svg class="a" style="left:2206px;top:871px;" width="20" height="14" viewBox="0 0 20 14"><path d="M1 1H19L10 13Z" fill="#eee"/></svg>
<svg class="a" style="left:2233px;top:864px;" width="33" height="24" viewBox="0 0 33 24"><g transform="scale(1.1)"><circle cx="5" cy="17" r="4" fill="#222" stroke="#888" stroke-width="1"/><circle cx="12" cy="9" r="3.5" fill="#555" stroke="#ccc" stroke-width="1"/><circle cx="20" cy="4" r="3" fill="#eee" stroke="#555" stroke-width="1"/><circle cx="27" cy="6" r="2" fill="#fff" stroke="#555" stroke-width="0.8"/></g></svg>
<div class="a" style="left:2267px;top:864px;width:61px;height:28px;overflow:hidden"><div class="t" style="top:2px;font-size:21px;color:#f0f0f0">Motion</div></div>
<svg class="a" style="left:2253px;top:916px;" width="33" height="24" viewBox="0 0 33 24"><g transform="scale(1.1)"><circle cx="5" cy="17" r="4" fill="#222" stroke="#888" stroke-width="1"/><circle cx="12" cy="9" r="3.5" fill="#555" stroke="#ccc" stroke-width="1"/><circle cx="20" cy="4" r="3" fill="#eee" stroke="#555" stroke-width="1"/><circle cx="27" cy="6" r="2" fill="#fff" stroke="#555" stroke-width="0.8"/></g></svg>
<div class="a" style="left:2287px;top:916px;width:41px;height:28px;overflow:hidden"><div class="t" style="top:2px;font-size:21px;color:#f0f0f0">Character</div></div>
<svg class="a" style="left:2230px;top:986px;" width="40" height="6" viewBox="0 0 40 6"><path d="M2 3H4M8 3H10M14 3H16M20 3H22M26 3H28" stroke="#333"/></svg>
<div class="a" style="left:2152px;top:993px;width:189px;height:46px;background:#76777b;border:1px solid #4a4a4a"></div>
<svg class="a" style="left:2164px;top:1003px;" width="28" height="28" viewBox="0 0 28 28"><circle cx="11" cy="11" r="8" fill="#fff" stroke="#333" stroke-width="2"/><path d="M17 17L24 24" stroke="#333" stroke-width="4" stroke-linecap="round"/></svg>
<div class="a" style="left:2202px;top:1005px;width:130px;height:26px;overflow:hidden"><div class="t" style="font-size:19px;color:#a8a9ac;transform:scaleX(0.9);transform-origin:left">Type search keywords</div></div>
<div class="a" style="left:2152px;top:1040px;width:189px;height:903px;background:#76777b;border:1px solid #4a4a4a"></div>
<div class="a" style="left:2328px;top:1041px;width:12px;height:901px;background:#6a6b6e;border-left:1px solid #555"></div>
<div class="a" style="left:2349px;top:200px;width:159px;height:1743px;background:#76777b;border:1px solid #4a4a4a"></div>
<div class="a" style="left:2495px;top:201px;width:12px;height:1741px;background:#6a6b6e;border-left:1px solid #555"></div>
<div class="a" style="left:2351px;top:242px;width:143px;height:26px;overflow:hidden"><div class="t" style="font-size:19px;color:#f0f0f0;transform:scaleX(0.88);transform-origin:left">Show all the materials</div></div>
<div class="a" style="left:2353px;top:308px;width:46px;height:46px;border-radius:50%;background:radial-gradient(#eee 60%,#cfcfcf);box-shadow:0 0 2px #333"></div>
<svg class="a" style="left:2358px;top:318px;" width="36" height="24" viewBox="0 0 36 24"><g transform="scale(0.82)"><path d="M22 27C10 27 3 22 3 15C3 7 11 3 21 3C31 3 39 7 39 13C39 19 33 22 25 22C18 22 13 19 13 15C13 11 17 9 22 9C26 9 29 11 29 14C29 16 26 17 23 16" fill="none" stroke="#3a3a3a" stroke-width="4.5" stroke-linecap="round"/></g></svg>
<div class="a" style="left:2413px;top:320px;width:82px;height:26px;overflow:hidden"><div class="t" style="font-size:19px;color:#f0f0f0;transform:scaleX(0.88);transform-origin:left">Search for Additional</div></div>
<div class="a" style="left:2150px;top:1943px;width:360px;height:54px;background:#76777b;border-top:1px solid #4a4a4a"></div>
<div class="a" style="left:2176px;top:1945px;width:77px;height:45px;background:linear-gradient(#808184,#6d6e71);border:1px solid #555;border-radius:2px"></div>
<svg class="a" style="left:2184px;top:1953px;" width="30" height="30" viewBox="0 0 30 30"><rect x="1" y="1" width="12" height="12" fill="#222"/><rect x="16" y="1" width="12" height="12" fill="#222"/><rect x="1" y="16" width="12" height="12" fill="#222"/><rect x="16" y="16" width="12" height="12" fill="#222"/></svg>
<svg class="a" style="left:2224px;top:1962px;" width="22" height="12" viewBox="0 0 22 12"><path d="M0 0H22L11.0 12Z" fill="#333"/></svg>
<div class="a" style="left:2262px;top:1948px;width:2px;height:44px;background:#666"></div>
<div class="a" style="left:2387px;top:1948px;width:2px;height:44px;background:#666"></div>
<svg class="a" style="left:2282px;top:1950px;" width="30" height="36" viewBox="0 0 30 36"><circle cx="11" cy="6" r="4" fill="none" stroke="#555" stroke-width="1.5"/><rect x="3" y="11" width="18" height="5" fill="#8a8a8a" stroke="#555"/><rect x="2" y="15" width="16" height="16" fill="#7a7a7a" stroke="#555"/><rect x="15" y="19" width="14" height="15" fill="#8a8a8a" stroke="#555"/><path d="M17 23H27M17 26H27M17 29H27" stroke="#555"/></svg>
<svg class="a" style="left:2338px;top:1950px;" width="32" height="34" viewBox="0 0 32 34"><rect x="3" y="3" width="18" height="22" fill="#8a8a8a" stroke="#555" stroke-width="1.5"/><path d="M6 8H18M6 12H18M6 16H18" stroke="#555"/><path d="M14 26C18 30 24 30 28 26" stroke="#555" stroke-width="2" fill="none"/><path d="M26 22L30 27L24 29Z" fill="#555"/></svg>
<svg class="a" style="left:2405px;top:1948px;" width="40" height="40" viewBox="0 0 40 40"><path d="M20 4L24 9L30 7L31 13L37 15L34 20L37 25L31 27L30 33L24 31L20 36L16 31L10 33L9 27L3 25L6 20L3 15L9 13L10 7L16 9Z" fill="#8a8a8a" stroke="#555" stroke-width="1.2"/><circle cx="20" cy="20" r="6" fill="#76777b" stroke="#555" stroke-width="1.2"/></svg>
<svg class="a" style="left:2463px;top:1946px;" width="36" height="42" viewBox="0 0 36 42"><path d="M6 14H30L27 40H9Z" fill="#8a8a8a" stroke="#555" stroke-width="1.5"/><path d="M12 17L13 37M18 17V37M24 17L23 37" stroke="#666"/><rect x="3" y="10" width="30" height="6" rx="3" fill="#8a8a8a" stroke="#555" stroke-width="1.5"/><path d="M11 10C11 3 25 3 25 10" fill="none" stroke="#555" stroke-width="3"/></svg>
<div class="a" style="left:2510px;top:136px;width:86px;height:1861px;background:#5b5b5b;border-left:1px solid #4a4a4a"></div>
<div class="a" style="left:2513px;top:139px;width:80px;height:78px;background:linear-gradient(#727377,#67686b);border:1px solid #4a4a4a;border-top-color:#858689"></div>
<div class="a" style="left:2513px;top:222px;width:80px;height:79px;background:linear-gradient(#727377,#67686b);border:1px solid #4a4a4a;border-top-color:#858689"></div>
<div class="a" style="left:2513px;top:306px;width:80px;height:80px;background:linear-gradient(#727377,#67686b);border:1px solid #4a4a4a;border-top-color:#858689"></div>
<div class="a" style="left:2513px;top:391px;width:80px;height:150px;background:linear-gradient(#727377,#67686b);border:1px solid #4a4a4a;border-top-color:#858689"></div>
<div class="a" style="left:2513px;top:547px;width:80px;height:78px;background:linear-gradient(#727377,#67686b);border:1px solid #4a4a4a;border-top-color:#858689"></div>
<div class="a" style="left:2513px;top:714px;width:80px;height:79px;background:linear-gradient(#727377,#67686b);border:1px solid #4a4a4a;border-top-color:#858689"></div>
<div class="a" style="left:2513px;top:798px;width:80px;height:79px;background:linear-gradient(#727377,#67686b);border:1px solid #4a4a4a;border-top-color:#858689"></div>
<div class="a" style="left:2513px;top:882px;width:80px;height:79px;background:linear-gradient(#727377,#67686b);border:1px solid #4a4a4a;border-top-color:#858689"></div>
<div class="a" style="left:2511px;top:633px;width:76px;height:70px;background:linear-gradient(#7d7e82,#727377);border:1px solid #4a4a4a;border-radius:0 6px 6px 0"></div>
<svg class="a" style="left:2524px;top:147px;" width="58" height="58" viewBox="0 0 58 58"><circle cx="27" cy="27" r="21" fill="none" stroke="#505052" stroke-width="6"/><path d="M24 22L44 44" stroke="#505052" stroke-width="6"/><path d="M22 20L36 22L24 36Z" fill="#505052"/></svg>
<svg class="a" style="left:2527px;top:236px;" width="54" height="50" viewBox="0 0 54 50"><path d="M4 6H18L22 11H42V20H14L4 40Z" fill="#8e8f92" stroke="#505052" stroke-width="2"/><path d="M14 20H50L40 40H4Z" fill="#8e8f92" stroke="#505052" stroke-width="2"/></svg>
<svg class="a" style="left:2527px;top:320px;" width="54" height="50" viewBox="0 0 54 50"><path d="M4 6H18L22 11H42V20H14L4 40Z" fill="#8e8f92" stroke="#505052" stroke-width="2"/><path d="M14 20H50L40 40H4Z" fill="#8e8f92" stroke="#505052" stroke-width="2"/></svg>
<svg class="a" style="left:2530px;top:405px;" width="60" height="50" viewBox="0 0 60 50"><defs><linearGradient id="fd" x1="0" y1="0" x2="1" y2="1"><stop offset="0" stop-color="#c8c8c8"/><stop offset="1" stop-color="#6a6a6a"/></linearGradient></defs><path d="M4 8H18L22 13H40V40H4Z" fill="url(#fd)" stroke="#555" stroke-width="1.5"/><rect x="20" y="22" width="26" height="20" fill="#999" stroke="#555"/><path d="M38 14V30M33 25L38 32L43 25" stroke="#333" stroke-width="3" fill="none"/></svg>
<svg class="a" style="left:2530px;top:485px;" width="60" height="50" viewBox="0 0 60 50"><defs><linearGradient id="fd" x1="0" y1="0" x2="1" y2="1"><stop offset="0" stop-color="#c8c8c8"/><stop offset="1" stop-color="#6a6a6a"/></linearGradient></defs><path d="M4 8H18L22 13H40V40H4Z" fill="url(#fd)" stroke="#555" stroke-width="1.5"/><circle cx="36" cy="34" r="11" fill="#555" stroke="#444" stroke-width="2"/><circle cx="34" cy="31" r="5" fill="#888"/></svg>
<svg class="a" style="left:2530px;top:560px;" width="60" height="50" viewBox="0 0 60 50"><defs><linearGradient id="fd" x1="0" y1="0" x2="1" y2="1"><stop offset="0" stop-color="#c8c8c8"/><stop offset="1" stop-color="#6a6a6a"/></linearGradient></defs><path d="M4 8H18L22 13H40V40H4Z" fill="url(#fd)" stroke="#555" stroke-width="1.5"/><rect x="18" y="20" width="28" height="26" fill="#aaa"/><path d="M32 33L20 22C20 28 22 32 32 33C22 34 20 38 20 44ZM32 33L44 22C38 22 34 24 32 33C34 42 38 44 44 44Z" fill="#666"/></svg>
<svg class="a" style="left:2530px;top:645px;" width="60" height="50" viewBox="0 0 60 50"><defs><linearGradient id="fd" x1="0" y1="0" x2="1" y2="1"><stop offset="0" stop-color="#c8c8c8"/><stop offset="1" stop-color="#6a6a6a"/></linearGradient></defs><path d="M4 8H18L22 13H40V40H4Z" fill="url(#fd)" stroke="#555" stroke-width="1.5"/><circle cx="22" cy="36" r="4" fill="#222" stroke="#ccc"/><circle cx="30" cy="28" r="3.5" fill="#555" stroke="#ddd"/><circle cx="38" cy="23" r="3" fill="#eee" stroke="#555"/><circle cx="45" cy="25" r="2" fill="#fff" stroke="#555"/></svg>
<svg class="a" style="left:2530px;top:728px;" width="60" height="50" viewBox="0 0 60 50"><defs><linearGradient id="fd" x1="0" y1="0" x2="1" y2="1"><stop offset="0" stop-color="#c8c8c8"/><stop offset="1" stop-color="#6a6a6a"/></linearGradient></defs><path d="M4 8H18L22 13H40V40H4Z" fill="url(#fd)" stroke="#555" stroke-width="1.5"/><rect x="20" y="22" width="26" height="20" fill="#999" stroke="#555"/><path d="M38 14V30M33 25L38 32L43 25" stroke="#333" stroke-width="3" fill="none"/></svg>
<svg class="a" style="left:2530px;top:812px;" width="60" height="50" viewBox="0 0 60 50"><defs><linearGradient id="fd" x1="0" y1="0" x2="1" y2="1"><stop offset="0" stop-color="#c8c8c8"/><stop offset="1" stop-color="#6a6a6a"/></linearGradient></defs><path d="M4 8H18L22 13H40V40H4Z" fill="url(#fd)" stroke="#555" stroke-width="1.5"/><path d="M30 30L20 18M30 30L44 20M30 30L46 30M30 30L20 44M30 30L44 44M30 30L32 46" stroke="#333" stroke-width="2.5"/></svg>
<svg class="a" style="left:2530px;top:896px;" width="60" height="50" viewBox="0 0 60 50"><defs><linearGradient id="fd" x1="0" y1="0" x2="1" y2="1"><stop offset="0" stop-color="#c8c8c8"/><stop offset="1" stop-color="#6a6a6a"/></linearGradient></defs><path d="M4 8H18L22 13H40V40H4Z" fill="url(#fd)" stroke="#555" stroke-width="1.5"/><rect x="18" y="20" width="28" height="26" fill="#aaa"/><path d="M32 33L20 22C20 28 22 32 32 33C22 34 20 38 20 44ZM32 33L44 22C38 22 34 24 32 33C34 42 38 44 44 44Z" fill="#666"/></svg>
<div class="a" style="left:2597px;top:136px;width:403px;height:752px;background:#76777b"></div>
<div class="a" style="left:2598px;top:137px;width:401px;height:10px;background:repeating-linear-gradient(#4a4a4a 0 1px,#6a6a6a 1px 3px)"></div>
<div class="a" style="left:2598px;top:147px;width:401px;height:32px;background:linear-gradient(#5d5d5d,#4c4c4c)"></div>
<div class="a" style="left:2598px;top:147px;width:41px;height:32px;background:#4b4b4b"></div>
<svg class="a" style="left:2609px;top:153px;" width="20" height="20" viewBox="0 0 20 20"><path d="M1 3L7 9L1 15Z" fill="#8c8c8c"/><rect x="9" y="2" width="9" height="3" fill="#8c8c8c"/><rect x="9" y="8" width="9" height="3" fill="#8c8c8c"/><rect x="9" y="14" width="9" height="3" fill="#8c8c8c"/></svg>
<div class="a" style="left:2639px;top:147px;width:141px;height:32px;background:#76777b"></div>
<div class="a" style="left:2598px;top:179px;width:401px;height:10px;background:#76777b"></div>
<svg class="a" style="left:2649px;top:151px;" width="34" height="30" viewBox="0 0 34 30"><rect x="10" y="9" width="22" height="18" fill="#ddd"/><rect x="6" y="5" width="22" height="18" fill="#f2f2f2" stroke="#aaa"/><rect x="2" y="2" width="22" height="17" fill="#fff" stroke="#ff0000" stroke-width="3"/></svg>
<div class="t" style="left:2691px;top:158px;font-size:20px;color:#eeeeee;">Navigator</div>
<div class="a" style="left:2598px;top:189px;width:401px;height:96px;background:#434343"></div>
<div class="a" style="left:2598px;top:285px;width:401px;height:400px;background:#fff"></div>
<div class="a" style="left:2598px;top:685px;width:401px;height:95px;background:#434343"></div>
<div class="a" style="left:2639px;top:288px;width:282px;height:292px;border:2px solid #ff0000"></div>
<svg class="a" style="left:2598px;top:285px" width="401" height="400" viewBox="2598 285 401 400"><g transform="translate(2560.96,247.69) scale(0.17118)"><g transform="translate(700,330) scale(0.30612)"><path d="M 150 1300 C 150 800, 600 380, 1200 370 C 1800 380, 2200 700, 2250 1400" fill="none" stroke="#ecf0f6" stroke-width="11.50" stroke-linecap="round" stroke-linejoin="round" opacity="1"/><path d="M 100 1400 C 120 850, 500 420, 1150 400 C 1750 400, 2150 650, 2260 1300" fill="none" stroke="#ecf0f6" stroke-width="11.50" stroke-linecap="round" stroke-linejoin="round" opacity="1"/><path d="M 560 1568 L 540 1000" fill="none" stroke="#ecf0f6" stroke-width="11.50" stroke-linecap="round" stroke-linejoin="round" opacity="1"/><path d="M 1600 1568 C 1620 1300, 1600 1000, 1500 800" fill="none" stroke="#ecf0f6" stroke-width="11.50" stroke-linecap="round" stroke-linejoin="round" opacity="1"/><path d="M 1700 1568 C 1720 1300, 1720 1000, 1640 820" fill="none" stroke="#ecf0f6" stroke-width="11.50" stroke-linecap="round" stroke-linejoin="round" opacity="1"/><path d="M949.8 512.0 L969.1 514.6 L994.7 517.3 L1025.1 520.4 L1058.9 524.2 L1094.5 529.1 L1130.4 535.3 L1165.2 543.3 L1197.2 553.4 L1228.3 565.8 L1260.3 580.3 L1292.7 596.5 L1324.9 614.1 L1356.4 632.7 L1386.6 652.0 L1415.1 671.6 L1441.3 691.3 L1465.2 711.0 L1487.3 731.2 L1508.0 751.9 L1527.4 773.3 L1545.9 795.4 L1563.7 818.5 L1581.0 842.5 L1598.0 867.7 L1614.6 893.9 L1630.6 921.2 L1645.9 949.5 L1660.6 978.8 L1674.5 1008.8 L1687.7 1039.6 L1700.0 1070.9 L1711.5 1102.6 L1722.2 1137.0 L1732.0 1175.2 L1741.1 1215.5 L1749.3 1255.9 L1756.6 1294.4 L1763.0 1329.3 L1768.6 1358.6 L1773.0 1380.3 L1777.0 1379.7 L1773.7 1357.7 L1769.8 1328.2 L1765.0 1293.1 L1759.5 1254.1 L1753.1 1213.2 L1745.8 1172.3 L1737.6 1133.0 L1728.5 1097.4 L1718.4 1064.5 L1707.4 1032.0 L1695.5 1000.0 L1682.6 968.7 L1668.7 938.2 L1654.0 908.5 L1638.4 879.8 L1622.0 852.3 L1605.0 826.1 L1587.6 801.0 L1569.3 776.8 L1550.1 753.6 L1529.6 731.2 L1507.7 709.7 L1484.1 688.8 L1458.7 668.7 L1431.0 649.0 L1401.0 629.5 L1369.3 610.7 L1336.4 592.8 L1302.8 576.1 L1268.9 561.0 L1235.5 547.7 L1202.8 536.6 L1168.9 527.9 L1132.9 521.5 L1096.0 517.0 L1059.9 513.9 L1025.8 511.9 L995.2 510.6 L969.5 509.4 L950.2 508.0Z" fill="#faf1d2" opacity="1" stroke="#faf1d2" stroke-width="2.35"/><path d="M 1955 240 C 1800 280, 1600 360, 1480 520 C 1450 580, 1500 610, 1550 570" fill="none" stroke="#faf1d2" stroke-width="15.68" stroke-linecap="round" stroke-linejoin="round" opacity="1"/><path d="M 2030 240 C 2050 180, 2080 120, 2100 75" fill="none" stroke="#faf1d2" stroke-width="15.68" stroke-linecap="round" stroke-linejoin="round" opacity="1"/><path d="M 2000 105 C 2040 120, 2080 135, 2110 140" fill="none" stroke="#faf1d2" stroke-width="15.68" stroke-linecap="round" stroke-linejoin="round" opacity="1"/><path d="M 200 1500 C 250 1200, 350 1000, 600 960 C 900 920, 1200 1000, 1350 1250 C 1400 1350, 1410 1450, 1400 1568" fill="none" stroke="#fbd5d5" stroke-width="7.84" stroke-linecap="round" stroke-linejoin="round" opacity="0.6"/><path d="M 650 900 C 700 800, 760 700, 830 600" fill="none" stroke="#fbd5d5" stroke-width="7.84" stroke-linecap="round" stroke-linejoin="round" opacity="0.6"/><path d="M 130 1000 C 200 820, 420 650, 700 540 C 900 480, 1000 470, 1150 465 C 1500 470, 1800 640, 2000 850 C 2150 1050, 2210 1300, 2215 1568" fill="none" stroke="#1e4a8e" stroke-width="14.63" stroke-linecap="round" stroke-linejoin="round" opacity="1"/><path d="M 150 1100 C 230 900, 400 740, 650 600" fill="none" stroke="#1e4a8e" stroke-width="8.89" stroke-linecap="round" stroke-linejoin="round" opacity="0.92"/><path d="M 200 980 C 280 800, 450 660, 660 590" fill="none" stroke="#1e4a8e" stroke-width="8.89" stroke-linecap="round" stroke-linejoin="round" opacity="0.92"/><path d="M 180 900 C 250 800, 330 720, 360 700" fill="none" stroke="#1e4a8e" stroke-width="8.89" stroke-linecap="round" stroke-linejoin="round" opacity="0.92"/><path d="M 830 540 C 900 500, 1000 480, 1100 490" fill="none" stroke="#1e4a8e" stroke-width="8.89" stroke-linecap="round" stroke-linejoin="round" opacity="0.92"/><path d="M 950 510 C 1200 490, 1450 560, 1580 720" fill="none" stroke="#1e4a8e" stroke-width="8.89" stroke-linecap="round" stroke-linejoin="round" opacity="0.92"/><path d="M 545 1010 C 480 900, 430 780, 500 640" fill="none" stroke="#1e4a8e" stroke-width="8.89" stroke-linecap="round" stroke-linejoin="round" opacity="0.92"/><path d="M 520 1000 C 430 880, 420 760, 470 660" fill="none" stroke="#1e4a8e" stroke-width="8.89" stroke-linecap="round" stroke-linejoin="round" opacity="0.92"/><path d="M 590 1020 C 560 850, 640 700, 960 510" fill="none" stroke="#1e4a8e" stroke-width="8.89" stroke-linecap="round" stroke-linejoin="round" opacity="0.92"/><path d="M 600 1000 C 650 880, 730 780, 850 700" fill="none" stroke="#1e4a8e" stroke-width="8.89" stroke-linecap="round" stroke-linejoin="round" opacity="0.92"/><path d="M 620 990 C 680 900, 750 830, 830 775" fill="none" stroke="#1e4a8e" stroke-width="8.89" stroke-linecap="round" stroke-linejoin="round" opacity="0.92"/><path d="M 540 1000 C 520 900, 530 790, 565 715" fill="none" stroke="#1e4a8e" stroke-width="8.89" stroke-linecap="round" stroke-linejoin="round" opacity="0.92"/><path d="M 410 1030 C 350 980, 340 900, 370 820" fill="none" stroke="#1e4a8e" stroke-width="8.89" stroke-linecap="round" stroke-linejoin="round" opacity="0.92"/><path d="M 370 1050 C 320 1020, 290 980, 295 935" fill="none" stroke="#1e4a8e" stroke-width="8.89" stroke-linecap="round" stroke-linejoin="round" opacity="0.92"/><path d="M 320 1090 C 270 1060, 250 1030, 250 1020" fill="none" stroke="#1e4a8e" stroke-width="8.89" stroke-linecap="round" stroke-linejoin="round" opacity="0.92"/><path d="M 260 1280 C 180 1200, 150 1100, 175 1100" fill="none" stroke="#1e4a8e" stroke-width="8.89" stroke-linecap="round" stroke-linejoin="round" opacity="0.92"/><path d="M 250 1210 C 210 1190, 190 1150, 200 1120" fill="none" stroke="#1e4a8e" stroke-width="8.89" stroke-linecap="round" stroke-linejoin="round" opacity="0.92"/><path d="M 190 1390 C 140 1340, 110 1300, 110 1260" fill="none" stroke="#1e4a8e" stroke-width="8.89" stroke-linecap="round" stroke-linejoin="round" opacity="0.92"/><path d="M 230 1330 C 180 1320, 160 1300, 150 1320" fill="none" stroke="#1e4a8e" stroke-width="8.89" stroke-linecap="round" stroke-linejoin="round" opacity="0.92"/><path d="M 170 1470 C 140 1450, 120 1430, 125 1415" fill="none" stroke="#1e4a8e" stroke-width="8.89" stroke-linecap="round" stroke-linejoin="round" opacity="0.92"/><path d="M 175 1530 C 150 1510, 130 1490, 130 1480" fill="none" stroke="#1e4a8e" stroke-width="8.89" stroke-linecap="round" stroke-linejoin="round" opacity="0.92"/><path d="M 640 1010 C 760 930, 850 900, 930 870" fill="none" stroke="#1e4a8e" stroke-width="8.89" stroke-linecap="round" stroke-linejoin="round" opacity="0.92"/><path d="M 700 1000 C 850 920, 950 890, 1100 860" fill="none" stroke="#1e4a8e" stroke-width="8.89" stroke-linecap="round" stroke-linejoin="round" opacity="0.92"/><path d="M 920 970 C 1100 910, 1300 880, 1550 755" fill="none" stroke="#1e4a8e" stroke-width="8.89" stroke-linecap="round" stroke-linejoin="round" opacity="0.92"/><path d="M 870 790 C 950 760, 1020 730, 1120 705" fill="none" stroke="#1e4a8e" stroke-width="8.89" stroke-linecap="round" stroke-linejoin="round" opacity="0.92"/><path d="M 1010 810 C 1200 740, 1450 700, 1650 590" fill="none" stroke="#1e4a8e" stroke-width="8.89" stroke-linecap="round" stroke-linejoin="round" opacity="0.92"/><path d="M 1620 660 C 1650 650, 1670 640, 1690 625" fill="none" stroke="#1e4a8e" stroke-width="8.89" stroke-linecap="round" stroke-linejoin="round" opacity="0.92"/><path d="M 1100 980 C 1200 950, 1260 940, 1300 940" fill="none" stroke="#1e4a8e" stroke-width="8.89" stroke-linecap="round" stroke-linejoin="round" opacity="0.92"/><path d="M 1120 1005 C 1200 990, 1260 980, 1320 970" fill="none" stroke="#1e4a8e" stroke-width="8.89" stroke-linecap="round" stroke-linejoin="round" opacity="0.92"/><path d="M 1200 1025 C 1300 1010, 1400 990, 1470 980" fill="none" stroke="#1e4a8e" stroke-width="8.89" stroke-linecap="round" stroke-linejoin="round" opacity="0.92"/><path d="M 1500 985 C 1650 940, 1760 840, 1810 680" fill="none" stroke="#1e4a8e" stroke-width="8.89" stroke-linecap="round" stroke-linejoin="round" opacity="0.92"/><path d="M 1650 945 C 1750 870, 1820 780, 1840 660" fill="none" stroke="#1e4a8e" stroke-width="8.89" stroke-linecap="round" stroke-linejoin="round" opacity="0.92"/><path d="M 1245 1105 C 1400 1110, 1550 1070, 1680 1020" fill="none" stroke="#1e4a8e" stroke-width="8.89" stroke-linecap="round" stroke-linejoin="round" opacity="0.92"/><path d="M 1330 1150 C 1400 1140, 1500 1120, 1560 1090" fill="none" stroke="#1e4a8e" stroke-width="8.89" stroke-linecap="round" stroke-linejoin="round" opacity="0.92"/><path d="M 1320 1200 C 1600 1150, 1850 1000, 1970 830" fill="none" stroke="#1e4a8e" stroke-width="8.89" stroke-linecap="round" stroke-linejoin="round" opacity="0.92"/><path d="M 1870 1090 C 1920 1020, 1980 960, 2010 900" fill="none" stroke="#1e4a8e" stroke-width="8.89" stroke-linecap="round" stroke-linejoin="round" opacity="0.92"/><path d="M 1380 1280 C 1430 1270, 1500 1250, 1540 1225" fill="none" stroke="#1e4a8e" stroke-width="8.89" stroke-linecap="round" stroke-linejoin="round" opacity="0.92"/><path d="M 1390 1330 C 1450 1300, 1530 1270, 1590 1245" fill="none" stroke="#1e4a8e" stroke-width="8.89" stroke-linecap="round" stroke-linejoin="round" opacity="0.92"/><path d="M 1390 1390 C 1500 1340, 1620 1270, 1730 1200" fill="none" stroke="#1e4a8e" stroke-width="8.89" stroke-linecap="round" stroke-linejoin="round" opacity="0.92"/><path d="M 1390 1460 C 1420 1455, 1450 1455, 1470 1450" fill="none" stroke="#1e4a8e" stroke-width="8.89" stroke-linecap="round" stroke-linejoin="round" opacity="0.92"/><path d="M 1410 1500 C 1450 1490, 1510 1480, 1550 1470" fill="none" stroke="#1e4a8e" stroke-width="8.89" stroke-linecap="round" stroke-linejoin="round" opacity="0.92"/><path d="M 1440 1540 C 1650 1480, 1850 1350, 1940 1220" fill="none" stroke="#1e4a8e" stroke-width="8.89" stroke-linecap="round" stroke-linejoin="round" opacity="0.92"/><path d="M 1770 1568 C 1790 1480, 1780 1400, 1775 1340" fill="none" stroke="#1e4a8e" stroke-width="8.89" stroke-linecap="round" stroke-linejoin="round" opacity="0.92"/><path d="M 1850 1568 C 1950 1450, 2060 1250, 2080 1060" fill="none" stroke="#1e4a8e" stroke-width="8.89" stroke-linecap="round" stroke-linejoin="round" opacity="0.92"/><path d="M 1900 1568 C 1960 1500, 2010 1400, 2030 1300" fill="none" stroke="#1e4a8e" stroke-width="8.89" stroke-linecap="round" stroke-linejoin="round" opacity="0.92"/><path d="M 2120 1100 C 2170 1200, 2230 1350, 2260 1420" fill="none" stroke="#1e4a8e" stroke-width="8.89" stroke-linecap="round" stroke-linejoin="round" opacity="0.92"/><path d="M 370 1350 C 400 1390, 430 1420, 455 1440" fill="none" stroke="#1e4a8e" stroke-width="8.89" stroke-linecap="round" stroke-linejoin="round" opacity="0.92"/><path d="M 180 1540 C 200 1450, 230 1400, 265 1370 L 265 1330 C 270 1200, 320 1100, 420 1050 C 460 1035, 500 1030, 530 1040" fill="none" stroke="#ff1020" stroke-width="13.59" stroke-linecap="round" stroke-linejoin="round" opacity="1"/><path d="M 650 1060 C 800 1030, 920 1010, 1000 1030 C 1150 1070, 1300 1200, 1325 1380 L 1330 1440 C 1380 1460, 1420 1520, 1440 1568" fill="none" stroke="#ff1020" stroke-width="13.59" stroke-linecap="round" stroke-linejoin="round" opacity="1"/></g><g transform="translate(500,760) scale(0.30612)"><path d="M 900 500 C 1100 620, 1400 680, 1700 620 C 1900 580, 2100 480, 2200 400" fill="none" stroke="#ecf0f6" stroke-width="11.50" stroke-linecap="round" stroke-linejoin="round" opacity="0.8"/><path d="M 1190 0 C 1250 400, 1350 1000, 1450 1300" fill="none" stroke="#ecf0f6" stroke-width="11.50" stroke-linecap="round" stroke-linejoin="round" opacity="0.8"/><path d="M 750 100 C 780 600, 900 1000, 1150 1300" fill="none" stroke="#ecf0f6" stroke-width="11.50" stroke-linecap="round" stroke-linejoin="round" opacity="0.8"/><path d="M 1150 470 C 1500 460, 1900 440, 2150 420" fill="none" stroke="#ecf0f6" stroke-width="11.50" stroke-linecap="round" stroke-linejoin="round" opacity="0.8"/><path d="M 1250 1000 C 1350 1010, 1450 1030, 1500 1060" fill="none" stroke="#ecf0f6" stroke-width="11.50" stroke-linecap="round" stroke-linejoin="round" opacity="0.8"/><path d="M 1620 1400 C 1900 1200, 2100 1000, 2300 900" fill="none" stroke="#ecf0f6" stroke-width="11.50" stroke-linecap="round" stroke-linejoin="round" opacity="0.8"/><path d="M 2200 1200 C 2250 1350, 2280 1450, 2300 1568" fill="none" stroke="#ecf0f6" stroke-width="11.50" stroke-linecap="round" stroke-linejoin="round" opacity="0.8"/><path d="M 290 350 C 330 365, 360 370, 385 375 C 390 300, 390 220, 395 140" fill="none" stroke="#fbd5d5" stroke-width="11.50" stroke-linecap="round" stroke-linejoin="round" opacity="1"/><path d="M 560 210 C 620 130, 680 70, 760 25" fill="none" stroke="#fbd5d5" stroke-width="11.50" stroke-linecap="round" stroke-linejoin="round" opacity="1"/><path d="M 720 20 C 760 15, 790 20, 800 30" fill="none" stroke="#fbd5d5" stroke-width="10.45" stroke-linecap="round" stroke-linejoin="round" opacity="1"/><path d="M 2160 630 C 2200 600, 2230 560, 2250 520 M 2300 560 C 2280 540, 2260 520, 2290 500 M 2352 600 C 2320 580, 2300 560, 2290 530" fill="none" stroke="#fbd5d5" stroke-width="10.45" stroke-linecap="round" stroke-linejoin="round" opacity="0.8"/><path d="M 2130 250 C 2150 400, 2150 500, 2150 640" fill="none" stroke="#fbd5d5" stroke-width="8.36" stroke-linecap="round" stroke-linejoin="round" opacity="0.7"/><path d="M 850 260 C 880 400, 890 600, 895 760 C 920 900, 1000 1050, 1150 1250 C 1230 1350, 1280 1450, 1330 1510 C 1370 1540, 1430 1540, 1500 1490" fill="none" stroke="#1e4a8e" stroke-width="15.68" stroke-linecap="round" stroke-linejoin="round" opacity="1"/><path d="M 1500 1490 C 1700 1350, 1900 1220, 2020 1100 C 2150 980, 2200 850, 2210 780 C 2230 650, 2250 550, 2260 480" fill="none" stroke="#1e4a8e" stroke-width="15.68" stroke-linecap="round" stroke-linejoin="round" opacity="1"/><path d="M 2210 850 C 2260 800, 2320 740, 2352 700" fill="none" stroke="#1e4a8e" stroke-width="15.68" stroke-linecap="round" stroke-linejoin="round" opacity="1"/><path d="M 1180 230 C 1230 300, 1230 450, 1160 560 C 1100 650, 1050 750, 1070 820 C 1100 860, 1150 880, 1200 920" fill="none" stroke="#1e4a8e" stroke-width="15.68" stroke-linecap="round" stroke-linejoin="round" opacity="1"/><path d="M 865 610 C 880 800, 950 1000, 1100 1200 C 1150 1260, 1200 1330, 1250 1400" fill="none" stroke="#1e4a8e" stroke-width="8.36" stroke-linecap="round" stroke-linejoin="round" opacity="0.9"/><path d="M 1100 700 C 1150 620, 1190 580, 1210 570" fill="none" stroke="#1e4a8e" stroke-width="8.36" stroke-linecap="round" stroke-linejoin="round" opacity="0.9"/><path d="M 1150 710 C 1180 680, 1200 660, 1210 650" fill="none" stroke="#1e4a8e" stroke-width="8.36" stroke-linecap="round" stroke-linejoin="round" opacity="0.9"/><path d="M 1140 230 C 1180 300, 1200 380, 1190 470" fill="none" stroke="#1e4a8e" stroke-width="8.36" stroke-linecap="round" stroke-linejoin="round" opacity="0.9"/><path d="M 1185 880 L 1225 875" fill="none" stroke="#1e4a8e" stroke-width="8.36" stroke-linecap="round" stroke-linejoin="round" opacity="0.9"/><path d="M 1180 1040 C 1220 1080, 1250 1090, 1270 1080 C 1350 1070, 1450 1100, 1515 1110" fill="none" stroke="#1e4a8e" stroke-width="8.36" stroke-linecap="round" stroke-linejoin="round" opacity="0.9"/><path d="M 1230 1100 C 1250 1090, 1270 1085, 1290 1080" fill="none" stroke="#1e4a8e" stroke-width="8.36" stroke-linecap="round" stroke-linejoin="round" opacity="0.9"/><path d="M 1215 1160 C 1240 1200, 1280 1215, 1320 1225" fill="none" stroke="#1e4a8e" stroke-width="8.36" stroke-linecap="round" stroke-linejoin="round" opacity="0.9"/><path d="M 860 330 C 950 300, 1050 290, 1160 340" fill="none" stroke="#1e4a8e" stroke-width="8.36" stroke-linecap="round" stroke-linejoin="round" opacity="0.9"/><path d="M 880 390 C 950 350, 1050 340, 1150 390" fill="none" stroke="#1e4a8e" stroke-width="8.36" stroke-linecap="round" stroke-linejoin="round" opacity="0.9"/><path d="M 880 430 C 950 440, 1050 430, 1120 420" fill="none" stroke="#1e4a8e" stroke-width="8.36" stroke-linecap="round" stroke-linejoin="round" opacity="0.9"/><path d="M 850 450 C 900 400, 950 380, 1000 370" fill="none" stroke="#1e4a8e" stroke-width="8.36" stroke-linecap="round" stroke-linejoin="round" opacity="0.9"/><path d="M 1020 360 C 1000 390, 1010 410, 1030 420" fill="none" stroke="#1e4a8e" stroke-width="8.36" stroke-linecap="round" stroke-linejoin="round" opacity="0.9"/><path d="M 930 480 L 940 465 M 1020 480 L 1025 470 M 1100 490 L 1095 470" fill="none" stroke="#1e4a8e" stroke-width="8.36" stroke-linecap="round" stroke-linejoin="round" opacity="0.9"/><path d="M 1400 300 C 1550 280, 1750 300, 1980 350" fill="none" stroke="#1e4a8e" stroke-width="8.36" stroke-linecap="round" stroke-linejoin="round" opacity="0.9"/><path d="M 1370 370 C 1500 320, 1700 310, 1850 380" fill="none" stroke="#1e4a8e" stroke-width="8.36" stroke-linecap="round" stroke-linejoin="round" opacity="0.9"/><path d="M 1360 420 C 1450 390, 1520 370, 1560 360" fill="none" stroke="#1e4a8e" stroke-width="8.36" stroke-linecap="round" stroke-linejoin="round" opacity="0.9"/><path d="M 1430 490 C 1550 470, 1700 450, 1820 420" fill="none" stroke="#1e4a8e" stroke-width="8.36" stroke-linecap="round" stroke-linejoin="round" opacity="0.9"/><path d="M 1480 440 C 1550 430, 1650 450, 1750 470" fill="none" stroke="#1e4a8e" stroke-width="8.36" stroke-linecap="round" stroke-linejoin="round" opacity="0.9"/><path d="M 1500 510 C 1520 500, 1530 490, 1540 480" fill="none" stroke="#1e4a8e" stroke-width="8.36" stroke-linecap="round" stroke-linejoin="round" opacity="0.9"/><path d="M 1510 1490 C 1520 1520, 1530 1550, 1540 1568" fill="none" stroke="#1e4a8e" stroke-width="8.36" stroke-linecap="round" stroke-linejoin="round" opacity="0.9"/><path d="M 1540 1568 C 1620 1480, 1700 1420, 1760 1360" fill="none" stroke="#1e4a8e" stroke-width="8.36" stroke-linecap="round" stroke-linejoin="round" opacity="0.9"/><path d="M 1600 1568 C 1700 1460, 1780 1380, 1830 1300" fill="none" stroke="#1e4a8e" stroke-width="8.36" stroke-linecap="round" stroke-linejoin="round" opacity="0.9"/><path d="M 1660 1568 C 1760 1450, 1860 1340, 1920 1250" fill="none" stroke="#1e4a8e" stroke-width="8.36" stroke-linecap="round" stroke-linejoin="round" opacity="0.9"/><path d="M 1560 1500 C 1620 1450, 1680 1400, 1700 1380" fill="none" stroke="#1e4a8e" stroke-width="8.36" stroke-linecap="round" stroke-linejoin="round" opacity="0.9"/><path d="M 2040 50 C 2100 45, 2150 45, 2190 50" fill="none" stroke="#1e4a8e" stroke-width="8.36" stroke-linecap="round" stroke-linejoin="round" opacity="0.9"/><path d="M 2080 90 C 2150 80, 2200 70, 2240 60" fill="none" stroke="#1e4a8e" stroke-width="8.36" stroke-linecap="round" stroke-linejoin="round" opacity="0.9"/><path d="M 2140 150 C 2220 120, 2300 80, 2352 50" fill="none" stroke="#1e4a8e" stroke-width="8.36" stroke-linecap="round" stroke-linejoin="round" opacity="0.9"/><path d="M 2150 240 C 2250 200, 2300 170, 2352 130" fill="none" stroke="#1e4a8e" stroke-width="8.36" stroke-linecap="round" stroke-linejoin="round" opacity="0.9"/><path d="M 2160 280 C 2250 260, 2310 230, 2352 200" fill="none" stroke="#1e4a8e" stroke-width="8.36" stroke-linecap="round" stroke-linejoin="round" opacity="0.9"/><path d="M 2150 420 C 2250 390, 2300 360, 2352 340" fill="none" stroke="#1e4a8e" stroke-width="8.36" stroke-linecap="round" stroke-linejoin="round" opacity="0.9"/><path d="M 2150 460 C 2250 440, 2300 420, 2352 400" fill="none" stroke="#1e4a8e" stroke-width="8.36" stroke-linecap="round" stroke-linejoin="round" opacity="0.9"/><path d="M 2140 500 C 2250 480, 2310 460, 2352 440" fill="none" stroke="#1e4a8e" stroke-width="8.36" stroke-linecap="round" stroke-linejoin="round" opacity="0.9"/><path d="M 2160 550 C 2250 530, 2310 510, 2352 490" fill="none" stroke="#1e4a8e" stroke-width="8.36" stroke-linecap="round" stroke-linejoin="round" opacity="0.9"/><path d="M829.8 170.0 L842.3 180.1 L860.4 187.0 L881.9 193.1 L904.6 198.7 L926.7 203.6 L946.0 207.9 L963.1 211.6 L979.7 214.9 L996.0 217.6 L1012.2 219.7 L1028.4 221.2 L1044.6 222.1 L1061.8 222.7 L1080.2 222.9 L1098.9 222.0 L1116.5 220.3 L1129.8 224.1 L1139.4 226.9 L1140.6 223.1 L1130.9 220.3 L1117.6 216.4 L1103.6 205.5 L1088.0 194.9 L1071.4 185.7 L1055.4 177.9 L1039.9 171.3 L1024.1 165.6 L1007.7 160.8 L990.6 156.9 L972.8 154.0 L954.0 152.1 L932.8 151.2 L909.4 151.2 L885.6 152.4 L863.3 154.6 L844.2 158.4 L830.2 166.0Z" fill="#1e4a8e" opacity="0.88" stroke="#1e4a8e" stroke-width="2.35"/><path d="M1320.4 189.5 L1335.2 192.2 L1354.4 193.2 L1376.9 192.9 L1401.5 192.1 L1427.3 190.3 L1453.1 185.2 L1481.4 181.2 L1513.0 177.6 L1546.7 174.5 L1581.7 171.7 L1616.7 168.9 L1650.9 166.1 L1684.2 163.2 L1717.4 160.2 L1750.6 157.4 L1783.8 154.8 L1817.0 152.4 L1850.1 150.4 L1885.6 148.8 L1924.0 147.7 L1962.4 146.8 L1998.1 145.9 L2028.2 144.9 L2050.0 143.5 L2050.0 140.5 L2028.3 138.4 L1998.2 136.3 L1962.6 134.2 L1924.1 132.3 L1885.6 130.7 L1849.9 129.6 L1816.4 129.0 L1782.9 128.8 L1749.4 128.8 L1715.9 129.1 L1682.5 129.5 L1649.1 129.9 L1615.0 130.2 L1579.8 130.5 L1544.5 131.0 L1510.0 131.7 L1477.2 132.9 L1446.9 134.8 L1418.3 137.8 L1391.8 146.3 L1368.1 156.6 L1347.8 167.1 L1331.4 177.3 L1319.6 186.5Z" fill="#1e4a8e" opacity="0.88" stroke="#1e4a8e" stroke-width="2.35"/><path d="M1590.0 360.0 L1594.9 368.1 L1603.0 378.7 L1613.3 389.7 L1624.5 399.3 L1636.6 407.2 L1650.1 414.0 L1664.5 418.9 L1679.1 420.8 L1693.1 418.1 L1705.0 412.2 L1714.2 405.5 L1720.0 400.0 L1720.0 400.0 L1711.9 399.5 L1701.2 400.3 L1690.2 400.7 L1680.9 399.2 L1671.4 395.8 L1659.9 391.0 L1647.4 385.6 L1635.5 380.7 L1623.4 375.3 L1610.7 368.8 L1599.0 363.1 L1590.0 360.0Z" fill="#1e4a8e" opacity="0.8" stroke="#1e4a8e" stroke-width="2.35"/><path d="M1030.0 350.0 L1033.3 356.2 L1039.0 363.9 L1046.3 372.0 L1054.6 379.4 L1063.9 385.9 L1074.4 391.8 L1085.3 396.6 L1095.8 400.0 L1105.9 401.8 L1115.6 402.2 L1123.9 401.5 L1130.0 400.0 L1130.0 400.0 L1125.8 395.3 L1119.4 390.3 L1111.9 385.1 L1104.2 380.0 L1095.6 374.8 L1085.6 369.4 L1075.2 364.6 L1065.4 360.6 L1055.9 357.1 L1046.0 353.6 L1037.0 350.9 L1030.0 350.0Z" fill="#1e4a8e" opacity="0.75" stroke="#1e4a8e" stroke-width="2.35"/><path d="M 540 700 C 530 550, 620 380, 800 250" fill="none" stroke="#ff1020" stroke-width="13.59" stroke-linecap="round" stroke-linejoin="round" opacity="1"/><path d="M 730 225 C 760 215, 790 210, 805 215 C 800 240, 795 260, 795 280" fill="none" stroke="#ff1020" stroke-width="13.59" stroke-linecap="round" stroke-linejoin="round" opacity="1"/><path d="M 835 130 C 850 60, 870 20, 890 0" fill="none" stroke="#ff1020" stroke-width="12.54" stroke-linecap="round" stroke-linejoin="round" opacity="1"/><path d="M 1985 0 L 1990 40 C 2050 60, 2100 120, 2130 250 C 2140 320, 2145 380, 2140 430" fill="none" stroke="#ff1020" stroke-width="12.54" stroke-linecap="round" stroke-linejoin="round" opacity="1"/></g><g transform="translate(500,1020) scale(0.15309)"><path d="M 380 380 C 330 350, 270 380, 240 470 C 220 560, 240 650, 300 700" fill="none" stroke="#ff1020" stroke-width="37.62" stroke-linecap="round" stroke-linejoin="round" opacity="1"/><path d="M 290 650 C 330 570, 400 525, 470 540 C 520 560, 530 610, 490 625 C 450 635, 440 580, 470 545" fill="none" stroke="#ff1020" stroke-width="37.62" stroke-linecap="round" stroke-linejoin="round" opacity="1"/><path d="M 500 310 C 540 400, 590 500, 640 580" fill="none" stroke="#ff1020" stroke-width="37.62" stroke-linecap="round" stroke-linejoin="round" opacity="1"/><path d="M 565 200 C 600 300, 650 420, 710 530" fill="none" stroke="#ff1020" stroke-width="37.62" stroke-linecap="round" stroke-linejoin="round" opacity="1"/><path d="M 800 370 C 740 380, 720 450, 770 490 C 820 500, 860 440, 850 390 C 840 360, 800 360, 780 380" fill="none" stroke="#ff1020" stroke-width="37.62" stroke-linecap="round" stroke-linejoin="round" opacity="1"/><path d="M 860 320 C 880 360, 920 380, 950 360 C 980 340, 990 330, 1000 340 C 1020 350, 1050 330, 1060 260 C 1070 200, 1040 150, 1000 140" fill="none" stroke="#ff1020" stroke-width="37.62" stroke-linecap="round" stroke-linejoin="round" opacity="1"/><path d="M 120 1140 C 150 1220, 190 1310, 260 1350 C 270 1280, 280 1220, 320 1190 C 350 1180, 380 1210, 400 1240" fill="none" stroke="#ff1020" stroke-width="37.62" stroke-linecap="round" stroke-linejoin="round" opacity="1"/><path d="M 400 1240 C 440 1250, 480 1230, 500 1200 C 510 1160, 480 1130, 440 1140 C 400 1160, 420 1230, 480 1210 C 530 1190, 580 1180, 620 1185" fill="none" stroke="#ff1020" stroke-width="37.62" stroke-linecap="round" stroke-linejoin="round" opacity="1"/><path d="M 600 1020 C 630 1080, 660 1120, 700 1150" fill="none" stroke="#ff1020" stroke-width="37.62" stroke-linecap="round" stroke-linejoin="round" opacity="1"/><path d="M 730 1100 C 715 1040, 720 980, 790 935" fill="none" stroke="#ff1020" stroke-width="37.62" stroke-linecap="round" stroke-linejoin="round" opacity="1"/><path d="M 800 720 C 830 850, 880 970, 960 1010 C 990 1010, 1000 990, 1000 970" fill="none" stroke="#ff1020" stroke-width="37.62" stroke-linecap="round" stroke-linejoin="round" opacity="1"/><path d="M 990 800 C 1000 880, 1010 940, 1020 970" fill="none" stroke="#ff1020" stroke-width="37.62" stroke-linecap="round" stroke-linejoin="round" opacity="1"/><path d="M 1040 780 C 1050 850, 1060 920, 1080 930 C 1120 900, 1130 820, 1140 800 C 1160 850, 1180 880, 1220 840" fill="none" stroke="#ff1020" stroke-width="37.62" stroke-linecap="round" stroke-linejoin="round" opacity="1"/><path d="M 1220 840 C 1280 790, 1280 680, 1260 640 C 1230 630, 1240 730, 1330 780 C 1400 760, 1470 700, 1520 625" fill="none" stroke="#ff1020" stroke-width="37.62" stroke-linecap="round" stroke-linejoin="round" opacity="1"/><path d="M 570 935 L 572 940 M 965 700 L 967 706" fill="none" stroke="#ff1020" stroke-width="52.26" stroke-linecap="round" stroke-linejoin="round" opacity="1"/></g><g transform="translate(500,760) scale(0.30612)"><path d="M 967 331 L 1030 302" fill="none" stroke="#1e4a8e" stroke-width="6.27" stroke-linecap="round" stroke-linejoin="round" opacity="0.8"/><path d="M 1025 361 L 1058 358" fill="none" stroke="#1e4a8e" stroke-width="6.27" stroke-linecap="round" stroke-linejoin="round" opacity="0.8"/><path d="M 890 371 L 921 357" fill="none" stroke="#1e4a8e" stroke-width="6.27" stroke-linecap="round" stroke-linejoin="round" opacity="0.8"/><path d="M 995 426 L 1030 414" fill="none" stroke="#1e4a8e" stroke-width="6.27" stroke-linecap="round" stroke-linejoin="round" opacity="0.8"/><path d="M 1049 443 L 1113 431" fill="none" stroke="#1e4a8e" stroke-width="6.27" stroke-linecap="round" stroke-linejoin="round" opacity="0.8"/><path d="M 1144 317 L 1222 295" fill="none" stroke="#1e4a8e" stroke-width="6.27" stroke-linecap="round" stroke-linejoin="round" opacity="0.8"/><path d="M 919 326 L 967 334" fill="none" stroke="#1e4a8e" stroke-width="6.27" stroke-linecap="round" stroke-linejoin="round" opacity="0.8"/><path d="M 929 391 L 996 378" fill="none" stroke="#1e4a8e" stroke-width="6.27" stroke-linecap="round" stroke-linejoin="round" opacity="0.8"/><path d="M 1028 319 L 1060 308" fill="none" stroke="#1e4a8e" stroke-width="6.27" stroke-linecap="round" stroke-linejoin="round" opacity="0.8"/><path d="M 1064 370 L 1113 368" fill="none" stroke="#1e4a8e" stroke-width="6.27" stroke-linecap="round" stroke-linejoin="round" opacity="0.8"/><path d="M 1002 352 L 1080 357" fill="none" stroke="#1e4a8e" stroke-width="6.27" stroke-linecap="round" stroke-linejoin="round" opacity="0.8"/><path d="M 946 390 L 1006 403" fill="none" stroke="#1e4a8e" stroke-width="6.27" stroke-linecap="round" stroke-linejoin="round" opacity="0.8"/><path d="M 1077 350 L 1159 315" fill="none" stroke="#1e4a8e" stroke-width="6.27" stroke-linecap="round" stroke-linejoin="round" opacity="0.8"/><path d="M 993 416 L 1032 412" fill="none" stroke="#1e4a8e" stroke-width="6.27" stroke-linecap="round" stroke-linejoin="round" opacity="0.8"/><path d="M 891 404 L 966 400" fill="none" stroke="#1e4a8e" stroke-width="6.27" stroke-linecap="round" stroke-linejoin="round" opacity="0.8"/><path d="M 1116 354 L 1188 352" fill="none" stroke="#1e4a8e" stroke-width="6.27" stroke-linecap="round" stroke-linejoin="round" opacity="0.8"/><path d="M 1037 374 L 1114 394" fill="none" stroke="#1e4a8e" stroke-width="6.27" stroke-linecap="round" stroke-linejoin="round" opacity="0.8"/><path d="M 1008 403 L 1042 405" fill="none" stroke="#1e4a8e" stroke-width="6.27" stroke-linecap="round" stroke-linejoin="round" opacity="0.8"/><path d="M 1055 449 L 1131 428" fill="none" stroke="#1e4a8e" stroke-width="6.27" stroke-linecap="round" stroke-linejoin="round" opacity="0.8"/><path d="M 984 404 L 1015 400" fill="none" stroke="#1e4a8e" stroke-width="6.27" stroke-linecap="round" stroke-linejoin="round" opacity="0.8"/><path d="M 925 326 L 959 330" fill="none" stroke="#1e4a8e" stroke-width="6.27" stroke-linecap="round" stroke-linejoin="round" opacity="0.8"/><path d="M 915 345 L 967 355" fill="none" stroke="#1e4a8e" stroke-width="6.27" stroke-linecap="round" stroke-linejoin="round" opacity="0.8"/><path d="M 902 373 L 963 386" fill="none" stroke="#1e4a8e" stroke-width="6.27" stroke-linecap="round" stroke-linejoin="round" opacity="0.8"/><path d="M 1101 431 L 1147 423" fill="none" stroke="#1e4a8e" stroke-width="6.27" stroke-linecap="round" stroke-linejoin="round" opacity="0.8"/><path d="M 977 434 L 1058 401" fill="none" stroke="#1e4a8e" stroke-width="6.27" stroke-linecap="round" stroke-linejoin="round" opacity="0.8"/><path d="M 928 342 L 971 338" fill="none" stroke="#1e4a8e" stroke-width="6.27" stroke-linecap="round" stroke-linejoin="round" opacity="0.8"/><path d="M 1039 347 L 1069 342" fill="none" stroke="#1e4a8e" stroke-width="6.27" stroke-linecap="round" stroke-linejoin="round" opacity="0.8"/><path d="M 980 389 L 1067 394" fill="none" stroke="#1e4a8e" stroke-width="6.27" stroke-linecap="round" stroke-linejoin="round" opacity="0.8"/><path d="M 1613 431 L 1676 400" fill="none" stroke="#1e4a8e" stroke-width="6.27" stroke-linecap="round" stroke-linejoin="round" opacity="0.8"/><path d="M 1801 460 L 1882 472" fill="none" stroke="#1e4a8e" stroke-width="6.27" stroke-linecap="round" stroke-linejoin="round" opacity="0.8"/><path d="M 1552 392 L 1588 392" fill="none" stroke="#1e4a8e" stroke-width="6.27" stroke-linecap="round" stroke-linejoin="round" opacity="0.8"/><path d="M 1391 332 L 1430 317" fill="none" stroke="#1e4a8e" stroke-width="6.27" stroke-linecap="round" stroke-linejoin="round" opacity="0.8"/><path d="M 1527 329 L 1555 318" fill="none" stroke="#1e4a8e" stroke-width="6.27" stroke-linecap="round" stroke-linejoin="round" opacity="0.8"/><path d="M 1410 385 L 1441 392" fill="none" stroke="#1e4a8e" stroke-width="6.27" stroke-linecap="round" stroke-linejoin="round" opacity="0.8"/><path d="M 1661 347 L 1705 337" fill="none" stroke="#1e4a8e" stroke-width="6.27" stroke-linecap="round" stroke-linejoin="round" opacity="0.8"/><path d="M 1538 342 L 1616 366" fill="none" stroke="#1e4a8e" stroke-width="6.27" stroke-linecap="round" stroke-linejoin="round" opacity="0.8"/><path d="M 1588 407 L 1620 393" fill="none" stroke="#1e4a8e" stroke-width="6.27" stroke-linecap="round" stroke-linejoin="round" opacity="0.8"/><path d="M 1528 368 L 1602 339" fill="none" stroke="#1e4a8e" stroke-width="6.27" stroke-linecap="round" stroke-linejoin="round" opacity="0.8"/><path d="M 1371 491 L 1429 468" fill="none" stroke="#1e4a8e" stroke-width="6.27" stroke-linecap="round" stroke-linejoin="round" opacity="0.8"/><path d="M 1626 325 L 1685 342" fill="none" stroke="#1e4a8e" stroke-width="6.27" stroke-linecap="round" stroke-linejoin="round" opacity="0.8"/><path d="M 1783 445 L 1828 436" fill="none" stroke="#1e4a8e" stroke-width="6.27" stroke-linecap="round" stroke-linejoin="round" opacity="0.8"/><path d="M 1442 459 L 1503 467" fill="none" stroke="#1e4a8e" stroke-width="6.27" stroke-linecap="round" stroke-linejoin="round" opacity="0.8"/><path d="M 1522 360 L 1597 382" fill="none" stroke="#1e4a8e" stroke-width="6.27" stroke-linecap="round" stroke-linejoin="round" opacity="0.8"/><path d="M 1778 465 L 1857 472" fill="none" stroke="#1e4a8e" stroke-width="6.27" stroke-linecap="round" stroke-linejoin="round" opacity="0.8"/><path d="M 1471 413 L 1517 390" fill="none" stroke="#1e4a8e" stroke-width="6.27" stroke-linecap="round" stroke-linejoin="round" opacity="0.8"/><path d="M 1374 370 L 1419 373" fill="none" stroke="#1e4a8e" stroke-width="6.27" stroke-linecap="round" stroke-linejoin="round" opacity="0.8"/><path d="M 1829 401 L 1911 425" fill="none" stroke="#1e4a8e" stroke-width="6.27" stroke-linecap="round" stroke-linejoin="round" opacity="0.8"/><path d="M 1828 386 L 1869 372" fill="none" stroke="#1e4a8e" stroke-width="6.27" stroke-linecap="round" stroke-linejoin="round" opacity="0.8"/><path d="M 1456 357 L 1522 372" fill="none" stroke="#1e4a8e" stroke-width="6.27" stroke-linecap="round" stroke-linejoin="round" opacity="0.8"/><path d="M 1772 406 L 1840 416" fill="none" stroke="#1e4a8e" stroke-width="6.27" stroke-linecap="round" stroke-linejoin="round" opacity="0.8"/><path d="M 1402 439 L 1485 450" fill="none" stroke="#1e4a8e" stroke-width="6.27" stroke-linecap="round" stroke-linejoin="round" opacity="0.8"/><path d="M 1728 406 L 1768 411" fill="none" stroke="#1e4a8e" stroke-width="6.27" stroke-linecap="round" stroke-linejoin="round" opacity="0.8"/><path d="M 1523 464 L 1610 448" fill="none" stroke="#1e4a8e" stroke-width="6.27" stroke-linecap="round" stroke-linejoin="round" opacity="0.8"/><path d="M 1557 490 L 1625 464" fill="none" stroke="#1e4a8e" stroke-width="6.27" stroke-linecap="round" stroke-linejoin="round" opacity="0.8"/><path d="M 1422 347 L 1506 359" fill="none" stroke="#1e4a8e" stroke-width="6.27" stroke-linecap="round" stroke-linejoin="round" opacity="0.8"/><path d="M 1432 469 L 1520 471" fill="none" stroke="#1e4a8e" stroke-width="6.27" stroke-linecap="round" stroke-linejoin="round" opacity="0.8"/><path d="M 1532 419 L 1565 401" fill="none" stroke="#1e4a8e" stroke-width="6.27" stroke-linecap="round" stroke-linejoin="round" opacity="0.8"/><path d="M 1836 437 L 1895 452" fill="none" stroke="#1e4a8e" stroke-width="6.27" stroke-linecap="round" stroke-linejoin="round" opacity="0.8"/><path d="M 1573 477 L 1648 451" fill="none" stroke="#1e4a8e" stroke-width="6.27" stroke-linecap="round" stroke-linejoin="round" opacity="0.8"/><path d="M 1483 373 L 1528 371" fill="none" stroke="#1e4a8e" stroke-width="6.27" stroke-linecap="round" stroke-linejoin="round" opacity="0.8"/><path d="M 1487 395 L 1524 404" fill="none" stroke="#1e4a8e" stroke-width="6.27" stroke-linecap="round" stroke-linejoin="round" opacity="0.8"/><path d="M 1533 402 L 1597 417" fill="none" stroke="#1e4a8e" stroke-width="6.27" stroke-linecap="round" stroke-linejoin="round" opacity="0.8"/><path d="M 1566 485 L 1626 481" fill="none" stroke="#1e4a8e" stroke-width="6.27" stroke-linecap="round" stroke-linejoin="round" opacity="0.8"/><path d="M 1617 323 L 1669 304" fill="none" stroke="#1e4a8e" stroke-width="6.27" stroke-linecap="round" stroke-linejoin="round" opacity="0.8"/><path d="M 1362 464 L 1402 459" fill="none" stroke="#1e4a8e" stroke-width="6.27" stroke-linecap="round" stroke-linejoin="round" opacity="0.8"/><path d="M 1715 420 L 1765 416" fill="none" stroke="#1e4a8e" stroke-width="6.27" stroke-linecap="round" stroke-linejoin="round" opacity="0.8"/><path d="M 1632 461 L 1668 459" fill="none" stroke="#1e4a8e" stroke-width="6.27" stroke-linecap="round" stroke-linejoin="round" opacity="0.8"/><path d="M 1482 370 L 1558 363" fill="none" stroke="#1e4a8e" stroke-width="6.27" stroke-linecap="round" stroke-linejoin="round" opacity="0.8"/><path d="M 870 380 C 950 340, 1050 330, 1160 385" fill="none" stroke="#1e4a8e" stroke-width="12.54" stroke-linecap="round" stroke-linejoin="round" opacity="1"/><path d="M 1340 385 C 1450 340, 1600 320, 1700 322 C 1780 330, 1830 360, 1860 385" fill="none" stroke="#1e4a8e" stroke-width="12.54" stroke-linecap="round" stroke-linejoin="round" opacity="1"/><path d="M1600.0 350.0 L1605.0 362.0 L1614.6 375.3 L1626.8 387.6 L1639.7 397.1 L1654.2 404.0 L1670.8 409.0 L1687.1 411.2 L1700.0 410.0 L1700.0 410.0 L1695.0 398.0 L1685.4 384.7 L1673.2 372.4 L1660.3 362.9 L1645.8 356.0 L1629.2 351.0 L1612.9 348.8 L1600.0 350.0Z" fill="#1e4a8e" opacity="0.7" stroke="#1e4a8e" stroke-width="2.35"/><path d="M1040.0 350.0 L1043.0 360.9 L1049.9 373.5 L1059.6 385.6 L1070.7 394.8 L1083.4 400.5 L1097.2 403.0 L1110.0 402.7 L1120.0 400.0 L1120.0 400.0 L1115.6 390.6 L1107.8 380.7 L1098.5 371.9 L1089.3 365.2 L1078.5 359.4 L1065.1 354.0 L1051.3 350.4 L1040.0 350.0Z" fill="#1e4a8e" opacity="0.7" stroke="#1e4a8e" stroke-width="2.35"/></g><g transform="translate(800,1180) scale(0.30612)"><path d="M 460 940 C 500 800, 560 650, 600 540" fill="none" stroke="#ecf0f6" stroke-width="11.50" stroke-linecap="round" stroke-linejoin="round" opacity="0.7"/><path d="M 640 380 C 620 600, 560 900, 490 1130" fill="none" stroke="#ecf0f6" stroke-width="11.50" stroke-linecap="round" stroke-linejoin="round" opacity="0.7"/><path d="M 1270 0 C 1350 300, 1420 500, 1500 720" fill="none" stroke="#ecf0f6" stroke-width="11.50" stroke-linecap="round" stroke-linejoin="round" opacity="0.7"/><path d="M 1700 1060 C 1850 1250, 1950 1400, 2040 1568" fill="none" stroke="#ecf0f6" stroke-width="11.50" stroke-linecap="round" stroke-linejoin="round" opacity="0.7"/><path d="M 1800 1300 C 1880 1400, 1950 1500, 1990 1568" fill="none" stroke="#ecf0f6" stroke-width="11.50" stroke-linecap="round" stroke-linejoin="round" opacity="0.7"/><path d="M 220 0 C 270 60, 320 140, 380 160 C 430 170, 480 160, 530 120 C 600 80, 650 50, 720 5" fill="none" stroke="#1e4a8e" stroke-width="15.68" stroke-linecap="round" stroke-linejoin="round" opacity="1"/><path d="M538.7 120.7 L541.2 128.1 L545.7 137.2 L551.4 147.7 L557.6 159.5 L564.0 172.1 L570.2 185.3 L575.6 198.5 L580.1 211.6 L583.7 224.8 L586.9 238.7 L589.8 253.0 L592.3 267.8 L594.5 283.0 L596.3 298.5 L597.7 314.3 L598.7 330.4 L599.4 346.5 L599.7 363.0 L599.6 379.6 L599.2 396.6 L598.3 414.1 L597.1 431.9 L595.5 450.3 L593.6 469.3 L591.2 488.7 L588.4 508.5 L585.2 528.7 L581.7 549.5 L577.8 570.8 L573.6 592.8 L569.1 615.4 L564.3 638.8 L559.4 662.8 L554.5 687.4 L549.3 712.5 L543.8 738.2 L537.8 764.7 L531.3 791.9 L524.1 819.9 L516.1 848.8 L506.6 880.8 L495.2 916.5 L482.8 954.4 L470.5 992.6 L457.5 1028.8 L445.7 1061.6 L435.8 1089.1 L428.6 1109.5 L431.4 1110.5 L438.6 1090.1 L448.5 1062.6 L460.3 1029.9 L473.3 993.6 L487.7 956.1 L501.2 918.6 L513.5 883.0 L523.9 851.2 L532.5 822.2 L540.3 794.2 L547.3 767.0 L553.7 740.5 L559.7 714.8 L565.2 689.7 L570.5 665.2 L575.7 641.2 L580.7 617.8 L585.4 595.2 L589.9 573.2 L594.0 551.7 L597.7 530.8 L601.0 510.4 L604.0 490.4 L606.4 470.7 L608.5 451.5 L610.1 432.9 L611.3 414.8 L612.1 397.1 L612.5 379.8 L612.5 362.8 L612.1 346.1 L611.3 329.6 L610.0 313.3 L608.4 297.2 L606.4 281.4 L603.9 265.9 L601.0 250.8 L597.8 236.2 L594.1 222.0 L589.9 208.4 L584.9 194.9 L578.8 181.3 L572.0 168.1 L564.9 155.5 L558.0 143.9 L551.6 133.8 L546.1 125.3 L541.3 119.3Z" fill="#1e4a8e" opacity="1" stroke="#1e4a8e" stroke-width="2.35"/><path d="M 572 160 L 669 38" fill="none" stroke="#1e4a8e" stroke-width="6.79" stroke-linecap="round" stroke-linejoin="round" opacity="0.85"/><path d="M 575 175 L 697 22" fill="none" stroke="#1e4a8e" stroke-width="6.79" stroke-linecap="round" stroke-linejoin="round" opacity="0.85"/><path d="M 577 190 L 724 7" fill="none" stroke="#1e4a8e" stroke-width="6.79" stroke-linecap="round" stroke-linejoin="round" opacity="0.85"/><path d="M 580 205 L 751 -9" fill="none" stroke="#1e4a8e" stroke-width="6.79" stroke-linecap="round" stroke-linejoin="round" opacity="0.85"/><path d="M 582 220 L 779 -25" fill="none" stroke="#1e4a8e" stroke-width="6.79" stroke-linecap="round" stroke-linejoin="round" opacity="0.85"/><path d="M 585 235 L 806 -41" fill="none" stroke="#1e4a8e" stroke-width="6.79" stroke-linecap="round" stroke-linejoin="round" opacity="0.85"/><path d="M 588 250 L 833 -57" fill="none" stroke="#1e4a8e" stroke-width="6.79" stroke-linecap="round" stroke-linejoin="round" opacity="0.85"/><path d="M 590 265 L 860 -73" fill="none" stroke="#1e4a8e" stroke-width="6.79" stroke-linecap="round" stroke-linejoin="round" opacity="0.85"/><path d="M 593 280 L 888 -89" fill="none" stroke="#1e4a8e" stroke-width="6.79" stroke-linecap="round" stroke-linejoin="round" opacity="0.85"/><path d="M 595 295 L 915 -105" fill="none" stroke="#1e4a8e" stroke-width="6.79" stroke-linecap="round" stroke-linejoin="round" opacity="0.85"/><path d="M 598 310 L 942 -121" fill="none" stroke="#1e4a8e" stroke-width="6.79" stroke-linecap="round" stroke-linejoin="round" opacity="0.85"/><path d="M 601 325 L 970 -136" fill="none" stroke="#1e4a8e" stroke-width="6.79" stroke-linecap="round" stroke-linejoin="round" opacity="0.85"/><path d="M 1346 -483 C 1355 -250, 1375 -60, 1410 80 C 1470 360, 1560 650, 1660 940" fill="none" stroke="#1e4a8e" stroke-width="12.54" stroke-linecap="round" stroke-linejoin="round" opacity="1"/><path d="M 1405 90 C 1440 200, 1460 300, 1480 420" fill="none" stroke="#1e4a8e" stroke-width="7.32" stroke-linecap="round" stroke-linejoin="round" opacity="0.9"/><path d="M1679.0 1025.2 L1681.4 1038.5 L1684.8 1056.3 L1689.0 1077.6 L1693.8 1101.2 L1699.3 1126.2 L1705.2 1151.3 L1711.1 1176.3 L1717.2 1202.1 L1723.9 1229.2 L1732.2 1257.9 L1741.9 1288.8 L1753.4 1322.4 L1768.4 1362.2 L1786.8 1408.7 L1806.6 1457.3 L1825.8 1503.5 L1842.1 1542.8 L1853.5 1570.7 L1866.5 1565.3 L1855.0 1537.4 L1838.7 1498.1 L1819.6 1452.0 L1799.8 1403.5 L1781.5 1357.2 L1766.6 1317.6 L1755.2 1284.4 L1745.6 1253.9 L1737.4 1225.4 L1729.5 1198.8 L1722.1 1173.4 L1714.8 1148.7 L1707.7 1124.1 L1701.0 1099.5 L1694.8 1076.2 L1689.3 1055.2 L1684.7 1037.7 L1681.0 1024.8Z" fill="#1e4a8e" opacity="1" stroke="#1e4a8e" stroke-width="2.35"/></g><g transform="translate(1100,1450) scale(0.31510)"><path d="M 700 200 C 900 500, 1100 800, 1200 1200 C 1250 1400, 1250 1500, 1240 1568" fill="none" stroke="#ecf0f6" stroke-width="11.17" stroke-linecap="round" stroke-linejoin="round" opacity="0.7"/><path d="M 800 400 C 950 600, 1050 800, 1130 930" fill="none" stroke="#ecf0f6" stroke-width="10.16" stroke-linecap="round" stroke-linejoin="round" opacity="0.6"/><path d="M678.5 140.3 L681.1 155.0 L684.3 174.5 L688.1 197.7 L692.5 223.6 L697.6 251.0 L703.3 278.7 L709.6 305.8 L716.6 331.1 L724.6 355.0 L733.6 378.8 L743.5 402.6 L753.9 426.3 L764.6 450.0 L775.1 473.9 L785.3 497.8 L794.8 522.0 L803.7 546.8 L812.4 572.2 L820.9 598.1 L829.3 624.0 L837.6 649.7 L846.1 674.9 L854.7 699.2 L863.5 722.6 L872.5 744.6 L881.7 765.5 L891.0 785.5 L900.2 804.9 L909.2 824.0 L917.8 843.0 L925.9 862.4 L933.4 882.4 L940.4 903.0 L947.1 923.9 L953.5 945.0 L959.5 966.2 L965.0 987.5 L970.0 1008.8 L974.3 1030.0 L978.1 1051.1 L981.2 1072.1 L983.7 1093.0 L985.7 1113.9 L987.1 1134.8 L988.0 1155.7 L988.4 1176.9 L988.4 1198.2 L988.0 1219.8 L987.0 1241.7 L985.4 1264.0 L983.2 1286.6 L980.6 1309.3 L977.6 1332.0 L974.5 1354.6 L971.3 1377.0 L968.1 1399.0 L964.6 1421.6 L960.6 1445.6 L956.3 1470.0 L951.9 1494.0 L947.6 1516.5 L943.7 1536.8 L940.5 1553.8 L938.1 1566.7 L951.9 1569.3 L954.3 1556.4 L957.5 1539.4 L961.4 1519.1 L965.6 1496.5 L970.1 1472.5 L974.4 1448.0 L978.4 1423.8 L981.9 1401.0 L985.1 1379.0 L988.3 1356.6 L991.5 1333.9 L994.4 1311.0 L997.1 1288.0 L999.3 1265.2 L1001.0 1242.5 L1002.0 1220.2 L1002.4 1198.3 L1002.4 1176.7 L1002.0 1155.3 L1001.1 1134.0 L999.6 1112.7 L997.6 1091.5 L995.1 1070.3 L991.9 1048.9 L988.1 1027.4 L983.6 1005.8 L978.6 984.1 L973.0 962.6 L967.0 941.1 L960.5 919.7 L953.7 898.6 L946.6 877.6 L939.0 857.2 L930.7 837.4 L921.9 818.1 L912.9 798.9 L903.7 779.5 L894.5 759.7 L885.4 739.1 L876.5 717.4 L867.9 694.5 L859.3 670.3 L850.7 645.3 L841.9 619.8 L833.0 594.0 L824.0 568.2 L814.8 542.8 L805.2 518.0 L795.2 493.7 L784.4 469.7 L773.4 446.0 L762.3 422.5 L751.5 399.1 L741.2 375.7 L731.7 352.4 L723.4 328.9 L716.0 304.1 L709.2 277.4 L703.0 249.8 L697.5 222.7 L692.6 196.9 L688.2 173.8 L684.5 154.3 L681.5 139.7Z" fill="#1e4a8e" opacity="1" stroke="#1e4a8e" stroke-width="2.28"/><path d="M 240 730 C 320 690, 400 650, 495 645" fill="none" stroke="#1e4a8e" stroke-width="8.12" stroke-linecap="round" stroke-linejoin="round" opacity="1"/></g><g transform="translate(1150,760) scale(0.20408)"><path d="M 1100 100 C 1000 400, 800 700, 400 1000" fill="none" stroke="#ecf0f6" stroke-width="19.60" stroke-linecap="round" stroke-linejoin="round" opacity="0.6"/><path d="M 1000 200 C 900 500, 700 800, 350 1100" fill="none" stroke="#ecf0f6" stroke-width="19.60" stroke-linecap="round" stroke-linejoin="round" opacity="0.6"/><path d="M 600 100 C 650 400, 500 700, 200 1000" fill="none" stroke="#ecf0f6" stroke-width="19.60" stroke-linecap="round" stroke-linejoin="round" opacity="0.6"/><path d="M 1540 400 C 1525 450, 1530 500, 1545 550 M 1690 320 C 1680 380, 1690 430, 1700 470 M 1855 280 C 1850 330, 1860 390, 1865 440" fill="none" stroke="#fbd5d5" stroke-width="17.25" stroke-linecap="round" stroke-linejoin="round" opacity="1"/><path d="M 1560 680 C 1550 710, 1590 720, 1595 690 M 1740 630 C 1735 660, 1770 665, 1775 630 M 1900 600 C 1900 640, 1935 640, 1935 610" fill="none" stroke="#fbd5d5" stroke-width="18.82" stroke-linecap="round" stroke-linejoin="round" opacity="1"/><path d="M 1380 720 C 1300 800, 1100 850, 800 870 C 600 870, 400 850, 260 810 M 320 750 C 260 770, 230 820, 260 860 C 280 880, 300 900, 320 920 M 30 940 C 80 950, 150 900, 200 800" fill="none" stroke="#fbd5d5" stroke-width="17.25" stroke-linecap="round" stroke-linejoin="round" opacity="1"/><path d="M 300 550 C 380 480, 450 430, 510 440 C 570 460, 610 560, 610 650 C 610 750, 590 830, 540 890 C 450 970, 350 1050, 280 1100 C 220 1150, 170 1200, 140 1280 C 180 1260, 220 1230, 230 1220" fill="none" stroke="#1e4a8e" stroke-width="23.52" stroke-linecap="round" stroke-linejoin="round" opacity="1"/><path d="M 1100 0 C 1120 100, 1130 300, 1100 450 C 1080 580, 1030 680, 950 780 C 850 880, 700 1000, 550 1120 C 480 1180, 420 1250, 390 1290" fill="none" stroke="#1e4a8e" stroke-width="23.52" stroke-linecap="round" stroke-linejoin="round" opacity="1"/><path d="M 200 720 C 180 900, 160 1050, 140 1200 C 120 1350, 60 1450, 0 1500" fill="none" stroke="#1e4a8e" stroke-width="23.52" stroke-linecap="round" stroke-linejoin="round" opacity="1"/><path d="M 400 450 C 550 300, 700 150, 800 0" fill="none" stroke="#1e4a8e" stroke-width="11.76" stroke-linecap="round" stroke-linejoin="round" opacity="0.9"/><path d="M 550 430 C 650 350, 750 200, 800 30" fill="none" stroke="#1e4a8e" stroke-width="11.76" stroke-linecap="round" stroke-linejoin="round" opacity="0.9"/><path d="M 460 0 C 470 150, 440 300, 400 450" fill="none" stroke="#1e4a8e" stroke-width="11.76" stroke-linecap="round" stroke-linejoin="round" opacity="0.9"/><path d="M 20 230 C 150 170, 300 80, 440 0" fill="none" stroke="#1e4a8e" stroke-width="11.76" stroke-linecap="round" stroke-linejoin="round" opacity="0.9"/><path d="M 80 420 C 200 350, 320 280, 410 230" fill="none" stroke="#1e4a8e" stroke-width="11.76" stroke-linecap="round" stroke-linejoin="round" opacity="0.9"/><path d="M 60 350 C 120 330, 180 310, 220 290" fill="none" stroke="#1e4a8e" stroke-width="11.76" stroke-linecap="round" stroke-linejoin="round" opacity="0.9"/><path d="M 0 140 C 50 120, 100 110, 130 100" fill="none" stroke="#1e4a8e" stroke-width="11.76" stroke-linecap="round" stroke-linejoin="round" opacity="0.9"/><path d="M 30 180 C 80 170, 140 150, 180 140" fill="none" stroke="#1e4a8e" stroke-width="11.76" stroke-linecap="round" stroke-linejoin="round" opacity="0.9"/><path d="M 40 690 C 150 650, 280 560, 440 490" fill="none" stroke="#1e4a8e" stroke-width="11.76" stroke-linecap="round" stroke-linejoin="round" opacity="0.9"/><path d="M 40 760 C 120 730, 180 700, 230 660" fill="none" stroke="#1e4a8e" stroke-width="11.76" stroke-linecap="round" stroke-linejoin="round" opacity="0.9"/><path d="M 50 830 C 200 780, 350 680, 430 500" fill="none" stroke="#1e4a8e" stroke-width="11.76" stroke-linecap="round" stroke-linejoin="round" opacity="0.9"/><path d="M 30 660 C 100 620, 130 600, 160 590" fill="none" stroke="#1e4a8e" stroke-width="11.76" stroke-linecap="round" stroke-linejoin="round" opacity="0.9"/><path d="M 50 560 C 80 555, 110 550, 130 545" fill="none" stroke="#1e4a8e" stroke-width="11.76" stroke-linecap="round" stroke-linejoin="round" opacity="0.9"/><path d="M 220 590 C 300 540, 380 500, 440 470" fill="none" stroke="#1e4a8e" stroke-width="11.76" stroke-linecap="round" stroke-linejoin="round" opacity="0.9"/><path d="M 330 1330 C 325 1360, 322 1380, 320 1400" fill="none" stroke="#1e4a8e" stroke-width="11.76" stroke-linecap="round" stroke-linejoin="round" opacity="0.9"/></g></g></svg>
<div class="a" style="left:2639px;top:288px;width:282px;height:292px;border:2px solid #ff0000"></div>
<div class="a" style="left:2598px;top:780px;width:401px;height:108px;background:#76777b"></div>
<div class="a" style="left:2602px;top:788px;width:108px;height:33px;background:linear-gradient(to top left,#333437 50%,#7b7c80 50.5%);border:1px solid #2a2a2a"></div>
<div class="a" style="left:2667px;top:784px;width:8px;height:40px;background:#68696c;border:1px solid #555"></div>
<div class="t" style="left:2604px;top:793px;font-size:22px;color:#f4f4f4;">155.8</div>
<div class="a" style="left:2602px;top:836px;width:108px;height:33px;background:#7b7c80;border:1px solid #2a2a2a"></div>
<svg class="a" style="left:2602px;top:837px;" width="108" height="32" viewBox="0 0 108 32"><path d="M0 1C8 12 18 30 28 31H39C48 30 58 4 69 1H82C92 2 100 18 107 28V32H0Z" fill="#333437"/></svg>
<div class="a" style="left:2652px;top:832px;width:8px;height:40px;background:#68696c;border:1px solid #555"></div>
<div class="t" style="left:2609px;top:841px;font-size:22px;color:#f4f4f4;">0.0</div>
<svg class="a" style="left:2727px;top:790px;" width="36" height="38" viewBox="0 0 36 38"><circle cx="15" cy="15" r="13" fill="#fff" stroke="#333" stroke-width="2"/><circle cx="15" cy="15" r="10" fill="none" stroke="#333" stroke-width="1.5"/><path d="M24 24L31 32" stroke="#333" stroke-width="5" stroke-linecap="round"/><path d="M9 15H21" stroke="#333" stroke-width="3.5"/></svg>
<svg class="a" style="left:2783px;top:790px;" width="36" height="38" viewBox="0 0 36 38"><circle cx="15" cy="15" r="13" fill="#fff" stroke="#333" stroke-width="2"/><circle cx="15" cy="15" r="10" fill="none" stroke="#333" stroke-width="1.5"/><path d="M24 24L31 32" stroke="#333" stroke-width="5" stroke-linecap="round"/><path d="M9 15H21" stroke="#333" stroke-width="3.5"/><path d="M15 9V21" stroke="#333" stroke-width="3.5"/></svg>
<div class="a" style="left:2835px;top:789px;width:40px;height:40px;background:#2b2b2b"></div>
<div class="a" style="left:2843px;top:797px;width:24px;height:24px;background:#2b2b2b;border:3px solid #666"></div>
<div class="a" style="left:2886px;top:791px;width:2px;height:60px;background:#666"></div>
<svg class="a" style="left:2894px;top:789px;" width="44" height="40" viewBox="0 0 44 40"><rect x="1" y="2" width="30" height="8" fill="#222"/><rect x="1" y="8" width="30" height="20" fill="#f2f2f2" stroke="#222"/><rect x="10" y="14" width="31" height="24" fill="#fff" stroke="#222"/><path d="M15 12L36 34" stroke="#222" stroke-width="3.5"/><path d="M12 9L20 11L14 17Z M39 37L31 35L37 29Z" fill="#222"/></svg>
<svg class="a" style="left:2950px;top:789px;" width="42" height="40" viewBox="0 0 42 40"><rect x="1" y="1" width="40" height="6" fill="#222"/><rect x="1" y="6" width="40" height="33" fill="#f2f2f2" stroke="#222"/><path d="M8 12L34 34" stroke="#222" stroke-width="3.5"/><path d="M5 9L15 10L8 18Z M37 37L27 36L34 28Z" fill="#222"/></svg>
<svg class="a" style="left:2722px;top:836px;" width="44" height="42" viewBox="0 0 44 42"><path d="M10 32C6 18 14 8 24 8C34 8 40 16 38 28" fill="none" stroke="#222" stroke-width="5"/><path d="M1 26H19L10 40Z" fill="#222"/></svg>
<svg class="a" style="left:2776px;top:836px;" width="44" height="42" viewBox="0 0 44 42"><path d="M34 32C38 18 30 8 20 8C10 8 4 16 6 28" fill="none" stroke="#222" stroke-width="5"/><path d="M25 26H43L34 40Z" fill="#222"/></svg>
<svg class="a" style="left:2832px;top:834px;" width="44" height="44" viewBox="0 0 44 44"><g fill="#666"><path d="M22 2L27 12L20 11Z"/><path d="M22 2L27 12L20 11Z" transform="rotate(45 22 22)"/><path d="M22 2L27 12L20 11Z" transform="rotate(90 22 22)"/><path d="M22 2L27 12L20 11Z" transform="rotate(135 22 22)"/><path d="M22 2L27 12L20 11Z" transform="rotate(180 22 22)"/><path d="M22 2L27 12L20 11Z" transform="rotate(225 22 22)"/><path d="M22 2L27 12L20 11Z" transform="rotate(270 22 22)"/><path d="M22 2L27 12L20 11Z" transform="rotate(315 22 22)"/></g></svg>
<svg class="a" style="left:2896px;top:834px;" width="40" height="44" viewBox="0 0 40 44"><path d="M8 14C12 2 30 2 32 14" fill="none" stroke="#222" stroke-width="4"/><path d="M26 12H38L32 20Z" fill="#222"/><path d="M2 24L14 32L2 40Z" fill="#f4f4f4" stroke="#222"/><path d="M38 24L26 32L38 40Z" fill="#222"/><path d="M20 22V42" stroke="#222" stroke-width="2.5" stroke-dasharray="3 3"/></svg>
<svg class="a" style="left:2950px;top:834px;" width="44" height="44" viewBox="0 0 44 44"><path d="M18 30C4 30 4 10 18 10" fill="none" stroke="#222" stroke-width="4"/><path d="M14 4L22 10L14 16Z" fill="#222"/><path d="M24 2H42L33 13Z" fill="#222"/><path d="M24 42H42L33 31Z" fill="#f4f4f4" stroke="#222"/><path d="M20 22H44" stroke="#222" stroke-width="2.5" stroke-dasharray="3 3"/></svg>
<div class="a" style="left:2597px;top:886px;width:403px;height:3px;background:#9b9b9e;border-top:1px solid #5a5a5a"></div>
<div class="a" style="left:2597px;top:889px;width:403px;height:1108px;background:#76777b"></div>
<div class="a" style="left:2598px;top:882px;width:401px;height:42px;background:linear-gradient(#5d5d5d,#4c4c4c)"></div>
<div class="a" style="left:2598px;top:893px;width:41px;height:31px;background:#4b4b4b"></div>
<svg class="a" style="left:2609px;top:898px;" width="20" height="20" viewBox="0 0 20 20"><path d="M1 3L7 9L1 15Z" fill="#8c8c8c"/><rect x="9" y="2" width="9" height="3" fill="#8c8c8c"/><rect x="9" y="8" width="9" height="3" fill="#8c8c8c"/><rect x="9" y="14" width="9" height="3" fill="#8c8c8c"/></svg>
<div class="a" style="left:2639px;top:893px;width:52px;height:38px;background:#76777b"></div>
<div class="a" style="left:2691px;top:893px;width:54px;height:31px;background:#6d6e71;border:1px solid #4a4a4a;border-bottom:none"></div>
<div class="a" style="left:2745px;top:893px;width:54px;height:31px;background:#6d6e71;border:1px solid #4a4a4a;border-bottom:none"></div>
<div class="a" style="left:2799px;top:893px;width:54px;height:31px;background:#6d6e71;border:1px solid #4a4a4a;border-bottom:none"></div>
<div class="a" style="left:2853px;top:893px;width:54px;height:31px;background:#6d6e71;border:1px solid #4a4a4a;border-bottom:none"></div>
<div class="a" style="left:2907px;top:893px;width:54px;height:31px;background:#6d6e71;border:1px solid #4a4a4a;border-bottom:none"></div>
<svg class="a" style="left:2649px;top:897px;" width="34" height="30" viewBox="0 0 34 30"><g stroke="#222" stroke-width="1"><path d="M2 22L17 17L32 22L17 27Z" fill="#fff"/><path d="M2 16L17 11L32 16L17 21Z" fill="#ddd"/><path d="M2 10L17 5L32 10L17 15Z" fill="#bbb"/><path d="M2 5L17 1L32 5L17 9Z" fill="#999"/></g></svg>
<svg class="a" style="left:2701px;top:897px;" width="36" height="28" viewBox="0 0 36 28"><path d="M4 28V22H28V28Z" fill="#444"/><path d="M10 22C14 14 20 6 32 2C24 8 20 14 18 22Z" fill="#999"/><path d="M8 22C6 18 4 16 2 16" stroke="#666" stroke-width="2"/></svg>
<svg class="a" style="left:2755px;top:897px;" width="34" height="28" viewBox="0 0 34 28"><rect x="2" y="2" width="30" height="26" fill="#444"/><rect x="3" y="6" width="28" height="22" fill="#bbb"/><path d="M3 28L12 16L20 22L31 12V28Z" fill="#777"/></svg>
<svg class="a" style="left:2813px;top:895px;" width="30" height="30" viewBox="0 0 30 30"><path d="M15 4C8 4 4 9 4 14C4 18 7 20 9 23V28H21V23C23 20 26 18 26 14C26 9 22 4 15 4Z" fill="#999" stroke="#555"/><circle cx="15" cy="17" r="3" fill="none" stroke="#555"/></svg>
<svg class="a" style="left:2866px;top:897px;" width="32" height="28" viewBox="0 0 32 28"><rect x="2" y="12" width="28" height="16" fill="#999" stroke="#555"/><path d="M8 12C8 2 24 2 24 12" fill="#aaa" stroke="#555"/></svg>
<svg class="a" style="left:2918px;top:897px;" width="36" height="28" viewBox="0 0 36 28"><rect x="0" y="0" width="36" height="28" fill="#aaa"/><path d="M8 14C8 6 18 4 22 10" fill="none" stroke="#333" stroke-width="4"/><path d="M28 14C28 22 18 24 14 18" fill="none" stroke="#333" stroke-width="4"/></svg>
<div class="a" style="left:2952px;top:885px;width:46px;height:39px;background:linear-gradient(#858689,#6f7073);border:1px solid #555"></div>
<svg class="a" style="left:2961px;top:896px;" width="28" height="16" viewBox="0 0 28 16"><path d="M1 1H27L14 14Z" fill="#3a3a3a"/></svg>
<div class="a" style="left:2598px;top:924px;width:401px;height:10px;background:#76777b"></div>
<div class="a" style="left:2599px;top:935px;width:191px;height:46px;background:linear-gradient(#7f8084,#6b6c6f);border:1px solid #555;border-radius:3px"></div>
<div class="t" style="left:2647px;top:947px;font-size:20px;color:#f2f2f2;">Normal</div>
<svg class="a" style="left:2755px;top:952px;" width="24" height="14" viewBox="0 0 24 14"><path d="M1 1H23L12 13Z" fill="#3a3a3a"/></svg>
<div class="a" style="left:2802px;top:944px;width:102px;height:17px;background-color:#fff;background-image:linear-gradient(45deg,#bbb 25%,transparent 25%,transparent 75%,#bbb 75%),linear-gradient(45deg,#bbb 25%,transparent 25%,transparent 75%,#bbb 75%);background-size:10px 10px;background-position:0 0,5px 5px;border:1px solid #666"></div>
<div class="a" style="left:2802px;top:944px;width:102px;height:17px;background:linear-gradient(90deg,rgba(118,119,123,0) 0%,rgba(118,119,123,0.45) 100%)"></div>
<div class="a" style="left:2904px;top:934px;width:8px;height:41px;background:#68696c;border:1px solid #555"></div>
<div class="t" style="left:2921px;top:945px;font-size:21px;color:#f4f4f4;">100</div>
<svg class="a" style="left:2962px;top:948px;" width="14" height="20" viewBox="0 0 14 20"><path d="M7 1L12 8H2Z M2 12H12L7 19Z" fill="#333"/></svg>
<div class="a" style="left:2985px;top:935px;width:15px;height:1062px;background:repeating-linear-gradient(90deg,#454545 0 1px,#6a6a6a 1px 3px)"></div>
<svg class="a" style="left:2630px;top:990px;" width="46" height="44" viewBox="0 0 46 44"><ellipse cx="23" cy="24" rx="19" ry="11" fill="#888" stroke="#222" stroke-width="2"/><ellipse cx="23" cy="17" rx="19" ry="9" fill="none" stroke="#222" stroke-width="2" stroke-dasharray="4 2"/><path d="M5 20C12 16 34 16 41 20C34 26 12 26 5 20Z" fill="#333"/></svg>
<svg class="a" style="left:2689px;top:988px;" width="36" height="44" viewBox="0 0 36 44"><path d="M13 14L23 14L26 40H10Z" fill="url(#lh)" stroke="#333"/><defs><linearGradient id="lh" x1="0" x2="1"><stop offset="0" stop-color="#fff"/><stop offset="1" stop-color="#222"/></linearGradient></defs><rect x="13" y="8" width="10" height="6" fill="#eee" stroke="#333"/><path d="M13 10L2 4V18ZM23 10L34 4V18Z" fill="#bbb" opacity="0.8"/></svg>
<svg class="a" style="left:2747px;top:988px;" width="34" height="44" viewBox="0 0 34 44"><path d="M8 18C8 4 26 4 26 18" fill="none" stroke="#333" stroke-width="4"/><rect x="4" y="17" width="26" height="22" rx="2" fill="#666" stroke="#222" stroke-width="1.5"/><circle cx="17" cy="27" r="3" fill="#111"/><path d="M17 28V34" stroke="#111" stroke-width="2"/></svg>
<svg class="a" style="left:2804px;top:988px;" width="40" height="44" viewBox="0 0 40 44"><path d="M6 14C6 4 18 4 18 14" fill="none" stroke="#222" stroke-width="2.5"/><rect x="2" y="13" width="20" height="15" fill="#fff" stroke="#222" stroke-width="1.5"/><circle cx="12" cy="20" r="2" fill="#111"/><rect x="16" y="26" width="20" height="18" fill="#fff" stroke="#222"/><rect x="16" y="26" width="10" height="9" fill="#222"/><rect x="26" y="35" width="10" height="9" fill="#222"/></svg>
<div class="a" style="left:2852px;top:985px;width:62px;height:47px;background:#7b7c80;border:1px solid #676869;border-radius:3px"></div>
<div class="a" style="left:2918px;top:985px;width:62px;height:47px;background:#7b7c80;border:1px solid #676869;border-radius:3px"></div>
<svg class="a" style="left:2857px;top:990px;" width="54" height="40" viewBox="0 0 54 40"><rect x="4" y="4" width="24" height="24" fill="#8a8a8c" stroke="#666"/><path d="M8 22L14 14L20 18L26 10" stroke="#999" fill="none"/><path d="M34 14H52L43 24Z" fill="#666"/><path d="M30 26L40 36M40 26L30 36" stroke="#666" stroke-width="3"/></svg>
<svg class="a" style="left:2923px;top:990px;" width="54" height="40" viewBox="0 0 54 40"><path d="M6 28L28 6V28Z" fill="none" stroke="#666" stroke-width="2"/><path d="M34 14H52L43 24Z" fill="#666"/><path d="M30 26L40 36M40 26L30 36" stroke="#666" stroke-width="3"/></svg>
<div class="a" style="left:2599px;top:1033px;width:382px;height:2px;background:#6a6b6e;border-bottom:1px solid #858689"></div>
<svg class="a" style="left:2657px;top:1040px;" width="36" height="44" viewBox="0 0 36 44"><defs><linearGradient id="nl" x1="0" y1="0" x2="0" y2="1"><stop offset="0" stop-color="#e4eef4"/><stop offset="1" stop-color="#fff"/></linearGradient></defs><path d="M2 2H31V28L19 40H2Z" fill="url(#nl)" stroke="#222" stroke-width="1.5"/><path d="M19 40V28H31" fill="#ddd" stroke="#222" stroke-width="1.5"/></svg>
<svg class="a" style="left:2709px;top:1040px;" width="42" height="44" viewBox="0 0 42 44"><path d="M2 4H14L18 8H30V32H2Z" fill="#aaa" stroke="#444" stroke-width="1.5"/><rect x="20" y="18" width="18" height="22" fill="#eef4f8" stroke="#222" stroke-width="1.5"/></svg>
<svg class="a" style="left:2766px;top:1040px;" width="40" height="44" viewBox="0 0 40 44"><path d="M2 12L20 4L38 12L20 20Z" fill="#fff" stroke="#222"/><path d="M2 30L20 22L38 30L20 38Z" fill="#222"/><path d="M16 8V22H10L20 32L30 22H24V8Z" fill="#fff" stroke="#222" stroke-width="1.5"/></svg>
<svg class="a" style="left:2822px;top:1040px;" width="40" height="44" viewBox="0 0 40 44"><path d="M2 12L20 4L38 12V30L20 38L2 30Z" fill="#fff" stroke="#222" stroke-dasharray="3 2"/><path d="M2 30L20 22L38 30L20 38Z" fill="#fff" stroke="#222"/><path d="M2 12L20 4L38 12L20 20Z" fill="#222"/><path d="M16 8V22H10L20 32L30 22H24V8Z" fill="#fff" stroke="#222" stroke-width="1.5"/></svg>
<svg class="a" style="left:2878px;top:1045px;" width="42" height="30" viewBox="0 0 42 30"><defs><linearGradient id="mk2" x1="0" x2="1"><stop offset="0" stop-color="#333"/><stop offset="0.5" stop-color="#999"/><stop offset="1" stop-color="#333"/></linearGradient></defs><rect x="1" y="1" width="40" height="28" fill="url(#mk2)" stroke="#222"/><circle cx="21" cy="15" r="8" fill="#fff"/></svg>
<svg class="a" style="left:2937px;top:1038px;" width="36" height="44" viewBox="0 0 36 44"><path d="M6 14H30L27 40H9Z" fill="#f2f2f2" stroke="#222" stroke-width="1.5"/><path d="M12 17L13 37M18 17V37M24 17L23 37" stroke="#555"/><rect x="3" y="10" width="30" height="6" rx="3" fill="#fff" stroke="#222" stroke-width="1.5"/><path d="M11 10C11 3 25 3 25 10" fill="none" stroke="#222" stroke-width="3"/><path d="M11 10C11 3 25 3 25 10" fill="none" stroke="#fff" stroke-width="1.5"/></svg>
<div class="a" style="left:2600px;top:1086px;width:385px;height:906px;background:#76777b;border-top:1px solid #444;border-left:1px solid #555"></div>
<div class="a" style="left:2971px;top:1087px;width:14px;height:905px;background:#6a6b6e;border-left:1px solid #555"></div>
<div class="a" style="left:2601px;top:1086px;width:370px;height:56px;border-bottom:1px solid #404040"></div>
<div class="a" style="left:2646px;top:1086px;width:1px;height:55px;background:#404040"></div>
<div class="a" style="left:2689px;top:1086px;width:1px;height:55px;background:#404040"></div>
<div class="a" style="left:2690px;top:1087px;width:279px;height:53px;background:linear-gradient(#8598a5,#6b7f8e)"></div>
<svg class="a" style="left:2615px;top:1105px;" width="26" height="18" viewBox="0 0 26 18"><path d="M1 9C6 2 20 2 25 9C20 16 6 16 1 9Z" fill="#fff" stroke="#222" stroke-width="1.5"/><circle cx="13" cy="9" r="5" fill="#111"/><circle cx="11" cy="7" r="1.5" fill="#fff"/><path d="M1 9C6 1 20 1 25 9" fill="none" stroke="#222" stroke-width="2"/></svg>
<svg class="a" style="left:2652px;top:1100px;" width="34" height="28" viewBox="0 0 34 28"><path d="M2 26C10 20 20 14 26 8L30 12C24 18 14 22 2 26Z" fill="#fff" stroke="#222" stroke-width="1.3"/><path d="M24 6L30 1L34 5L29 11Z" fill="#222"/></svg>
<div class="a" style="left:2695px;top:1095px;width:36px;height:37px;background-color:#fff;background-image:linear-gradient(45deg,#d8d8d8 25%,transparent 25%,transparent 75%,#d8d8d8 75%),linear-gradient(45deg,#d8d8d8 25%,transparent 25%,transparent 75%,#d8d8d8 75%);background-size:10px 10px;background-position:0 0,5px 5px;border:2px solid #222"></div>
<div class="t" style="left:2735px;top:1093px;font-size:21px;color:#f2f2f2;">100 %</div>
<div class="t" style="left:2797px;top:1093px;font-size:21px;color:#f2f2f2;">Normal</div>
<div class="t" style="left:2735px;top:1117px;font-size:21px;color:#f2f2f2;">Layer 10</div>
<div class="a" style="left:2601px;top:1141px;width:370px;height:56px;border-bottom:1px solid #404040"></div>
<div class="a" style="left:2646px;top:1141px;width:1px;height:55px;background:#404040"></div>
<div class="a" style="left:2689px;top:1141px;width:1px;height:55px;background:#404040"></div>
<svg class="a" style="left:2615px;top:1160px;" width="26" height="18" viewBox="0 0 26 18"><path d="M1 9C6 2 20 2 25 9C20 16 6 16 1 9Z" fill="#fff" stroke="#222" stroke-width="1.5"/><circle cx="13" cy="9" r="5" fill="#111"/><circle cx="11" cy="7" r="1.5" fill="#fff"/><path d="M1 9C6 1 20 1 25 9" fill="none" stroke="#222" stroke-width="2"/></svg>
<div class="a" style="left:2695px;top:1150px;width:36px;height:37px;background-color:#fff;background-image:linear-gradient(45deg,#d8d8d8 25%,transparent 25%,transparent 75%,#d8d8d8 75%),linear-gradient(45deg,#d8d8d8 25%,transparent 25%,transparent 75%,#d8d8d8 75%);background-size:10px 10px;background-position:0 0,5px 5px;border:2px solid #222"></div>
<div class="t" style="left:2735px;top:1148px;font-size:21px;color:#f2f2f2;">100 %</div>
<div class="t" style="left:2797px;top:1148px;font-size:21px;color:#f2f2f2;">Normal</div>
<div class="t" style="left:2735px;top:1172px;font-size:21px;color:#f2f2f2;">Layer 9</div>
<div class="a" style="left:2601px;top:1196px;width:370px;height:56px;border-bottom:1px solid #404040"></div>
<div class="a" style="left:2646px;top:1196px;width:1px;height:55px;background:#404040"></div>
<div class="a" style="left:2689px;top:1196px;width:1px;height:55px;background:#404040"></div>
<div class="a" style="left:2695px;top:1205px;width:36px;height:37px;background-color:#fff;background-image:linear-gradient(45deg,#d8d8d8 25%,transparent 25%,transparent 75%,#d8d8d8 75%),linear-gradient(45deg,#d8d8d8 25%,transparent 25%,transparent 75%,#d8d8d8 75%);background-size:10px 10px;background-position:0 0,5px 5px;border:2px solid #222"></div>
<div class="t" style="left:2735px;top:1203px;font-size:21px;color:#f2f2f2;">100 %</div>
<div class="t" style="left:2797px;top:1203px;font-size:21px;color:#f2f2f2;">Normal</div>
<div class="t" style="left:2735px;top:1227px;font-size:21px;color:#f2f2f2;">Layer 8</div>
<div class="a" style="left:2601px;top:1251px;width:370px;height:56px;border-bottom:1px solid #404040"></div>
<div class="a" style="left:2646px;top:1251px;width:1px;height:55px;background:#404040"></div>
<div class="a" style="left:2689px;top:1251px;width:1px;height:55px;background:#404040"></div>
<div class="a" style="left:2695px;top:1260px;width:36px;height:37px;background-color:#fff;background-image:linear-gradient(45deg,#d8d8d8 25%,transparent 25%,transparent 75%,#d8d8d8 75%),linear-gradient(45deg,#d8d8d8 25%,transparent 25%,transparent 75%,#d8d8d8 75%);background-size:10px 10px;background-position:0 0,5px 5px;border:2px solid #222"></div>
<div class="t" style="left:2735px;top:1258px;font-size:21px;color:#f2f2f2;">100 %</div>
<div class="t" style="left:2797px;top:1258px;font-size:21px;color:#f2f2f2;">Normal</div>
<div class="t" style="left:2735px;top:1282px;font-size:21px;color:#f2f2f2;">Layer 7</div>
<div class="a" style="left:2601px;top:1306px;width:370px;height:56px;border-bottom:1px solid #404040"></div>
<div class="a" style="left:2646px;top:1306px;width:1px;height:55px;background:#404040"></div>
<div class="a" style="left:2689px;top:1306px;width:1px;height:55px;background:#404040"></div>
<div class="a" style="left:2695px;top:1315px;width:36px;height:37px;background-color:#fff;background-image:linear-gradient(45deg,#d8d8d8 25%,transparent 25%,transparent 75%,#d8d8d8 75%),linear-gradient(45deg,#d8d8d8 25%,transparent 25%,transparent 75%,#d8d8d8 75%);background-size:10px 10px;background-position:0 0,5px 5px;border:2px solid #222"></div>
<div class="t" style="left:2735px;top:1313px;font-size:21px;color:#f2f2f2;">100 %</div>
<div class="t" style="left:2797px;top:1313px;font-size:21px;color:#f2f2f2;">Normal</div>
<div class="t" style="left:2735px;top:1337px;font-size:21px;color:#f2f2f2;">Layer 6</div>
<div class="a" style="left:2601px;top:1361px;width:370px;height:56px;border-bottom:1px solid #404040"></div>
<div class="a" style="left:2646px;top:1361px;width:1px;height:55px;background:#404040"></div>
<div class="a" style="left:2689px;top:1361px;width:1px;height:55px;background:#404040"></div>
<div class="a" style="left:2695px;top:1370px;width:36px;height:37px;background-color:#fff;background-image:linear-gradient(45deg,#d8d8d8 25%,transparent 25%,transparent 75%,#d8d8d8 75%),linear-gradient(45deg,#d8d8d8 25%,transparent 25%,transparent 75%,#d8d8d8 75%);background-size:10px 10px;background-position:0 0,5px 5px;border:2px solid #222"></div>
<div class="t" style="left:2735px;top:1368px;font-size:21px;color:#f2f2f2;">100 %</div>
<div class="t" style="left:2797px;top:1368px;font-size:21px;color:#f2f2f2;">Normal</div>
<div class="t" style="left:2735px;top:1392px;font-size:21px;color:#f2f2f2;">Layer 4</div>
<div class="a" style="left:2601px;top:1416px;width:370px;height:56px;border-bottom:1px solid #404040"></div>
<div class="a" style="left:2646px;top:1416px;width:1px;height:55px;background:#404040"></div>
<div class="a" style="left:2689px;top:1416px;width:1px;height:55px;background:#404040"></div>
<svg class="a" style="left:2615px;top:1435px;" width="26" height="18" viewBox="0 0 26 18"><path d="M1 9C6 2 20 2 25 9C20 16 6 16 1 9Z" fill="#fff" stroke="#222" stroke-width="1.5"/><circle cx="13" cy="9" r="5" fill="#111"/><circle cx="11" cy="7" r="1.5" fill="#fff"/><path d="M1 9C6 1 20 1 25 9" fill="none" stroke="#222" stroke-width="2"/></svg>
<div class="a" style="left:2695px;top:1425px;width:36px;height:37px;background-color:#fff;background-image:linear-gradient(45deg,#d8d8d8 25%,transparent 25%,transparent 75%,#d8d8d8 75%),linear-gradient(45deg,#d8d8d8 25%,transparent 25%,transparent 75%,#d8d8d8 75%);background-size:10px 10px;background-position:0 0,5px 5px;border:2px solid #222"></div>
<div class="t" style="left:2735px;top:1423px;font-size:21px;color:#f2f2f2;">14 %</div>
<div class="t" style="left:2788px;top:1423px;font-size:21px;color:#f2f2f2;">Normal</div>
<div class="t" style="left:2735px;top:1447px;font-size:21px;color:#f2f2f2;">Layer 3</div>
<div class="a" style="left:2601px;top:1471px;width:370px;height:56px;border-bottom:1px solid #404040"></div>
<div class="a" style="left:2646px;top:1471px;width:1px;height:55px;background:#404040"></div>
<div class="a" style="left:2689px;top:1471px;width:1px;height:55px;background:#404040"></div>
<div class="a" style="left:2695px;top:1480px;width:36px;height:37px;background-color:#fff;background-image:linear-gradient(45deg,#d8d8d8 25%,transparent 25%,transparent 75%,#d8d8d8 75%),linear-gradient(45deg,#d8d8d8 25%,transparent 25%,transparent 75%,#d8d8d8 75%);background-size:10px 10px;background-position:0 0,5px 5px;border:2px solid #222"></div>
<div class="t" style="left:2735px;top:1478px;font-size:21px;color:#f2f2f2;">100 %</div>
<div class="t" style="left:2797px;top:1478px;font-size:21px;color:#f2f2f2;">Normal</div>
<div class="t" style="left:2735px;top:1502px;font-size:21px;color:#f2f2f2;">Layer 5</div>
<div class="a" style="left:2601px;top:1526px;width:370px;height:56px;border-bottom:1px solid #404040"></div>
<div class="a" style="left:2646px;top:1526px;width:1px;height:55px;background:#404040"></div>
<div class="a" style="left:2689px;top:1526px;width:1px;height:55px;background:#404040"></div>
<svg class="a" style="left:2615px;top:1545px;" width="26" height="18" viewBox="0 0 26 18"><path d="M1 9C6 2 20 2 25 9C20 16 6 16 1 9Z" fill="#fff" stroke="#222" stroke-width="1.5"/><circle cx="13" cy="9" r="5" fill="#111"/><circle cx="11" cy="7" r="1.5" fill="#fff"/><path d="M1 9C6 1 20 1 25 9" fill="none" stroke="#222" stroke-width="2"/></svg>
<div class="a" style="left:2695px;top:1535px;width:36px;height:37px;background-color:#fff;background-image:linear-gradient(45deg,#d8d8d8 25%,transparent 25%,transparent 75%,#d8d8d8 75%),linear-gradient(45deg,#d8d8d8 25%,transparent 25%,transparent 75%,#d8d8d8 75%);background-size:10px 10px;background-position:0 0,5px 5px;border:2px solid #222"></div>
<div class="t" style="left:2735px;top:1533px;font-size:21px;color:#f2f2f2;">100 %</div>
<div class="t" style="left:2797px;top:1533px;font-size:21px;color:#f2f2f2;">Normal</div>
<div class="t" style="left:2735px;top:1557px;font-size:21px;color:#f2f2f2;">Layer 2</div>
<div class="a" style="left:2601px;top:1581px;width:370px;height:56px;border-bottom:1px solid #404040"></div>
<div class="a" style="left:2646px;top:1581px;width:1px;height:55px;background:#404040"></div>
<div class="a" style="left:2689px;top:1581px;width:1px;height:55px;background:#404040"></div>
<svg class="a" style="left:2615px;top:1600px;" width="26" height="18" viewBox="0 0 26 18"><path d="M1 9C6 2 20 2 25 9C20 16 6 16 1 9Z" fill="#fff" stroke="#222" stroke-width="1.5"/><circle cx="13" cy="9" r="5" fill="#111"/><circle cx="11" cy="7" r="1.5" fill="#fff"/><path d="M1 9C6 1 20 1 25 9" fill="none" stroke="#222" stroke-width="2"/></svg>
<div class="a" style="left:2695px;top:1590px;width:36px;height:37px;background-color:#fff;background-image:linear-gradient(45deg,#d8d8d8 25%,transparent 25%,transparent 75%,#d8d8d8 75%),linear-gradient(45deg,#d8d8d8 25%,transparent 25%,transparent 75%,#d8d8d8 75%);background-size:10px 10px;background-position:0 0,5px 5px;border:2px solid #222"></div>
<div class="t" style="left:2735px;top:1588px;font-size:21px;color:#f2f2f2;">5 %</div>
<div class="t" style="left:2776px;top:1588px;font-size:21px;color:#f2f2f2;">Normal</div>
<div class="t" style="left:2735px;top:1612px;font-size:21px;color:#f2f2f2;">Layer 1</div>
<div class="a" style="left:2601px;top:1636px;width:370px;height:56px;border-bottom:1px solid #404040"></div>
<div class="a" style="left:2646px;top:1636px;width:1px;height:55px;background:#404040"></div>
<div class="a" style="left:2689px;top:1636px;width:1px;height:55px;background:#404040"></div>
<svg class="a" style="left:2615px;top:1655px;" width="26" height="18" viewBox="0 0 26 18"><path d="M1 9C6 2 20 2 25 9C20 16 6 16 1 9Z" fill="#fff" stroke="#222" stroke-width="1.5"/><circle cx="13" cy="9" r="5" fill="#111"/><circle cx="11" cy="7" r="1.5" fill="#fff"/><path d="M1 9C6 1 20 1 25 9" fill="none" stroke="#222" stroke-width="2"/></svg>
<div class="a" style="left:2695px;top:1645px;width:36px;height:37px;background:#fff;border:2px solid #222"></div>
<svg class="a" style="left:2736px;top:1638px;" width="38" height="38" viewBox="0 0 38 38"><rect x="1" y="1" width="36" height="36" fill="#fff" stroke="#222" stroke-width="1.5"/><path d="M7 5H23L31 13V32H7Z" fill="#f2f6f8" stroke="#222" stroke-width="1.3"/><path d="M23 5V13H31" fill="#ddd" stroke="#222"/></svg>
<div class="t" style="left:2777px;top:1665px;font-size:20px;color:#f0f0f0;">Paper</div>
</body></html>
